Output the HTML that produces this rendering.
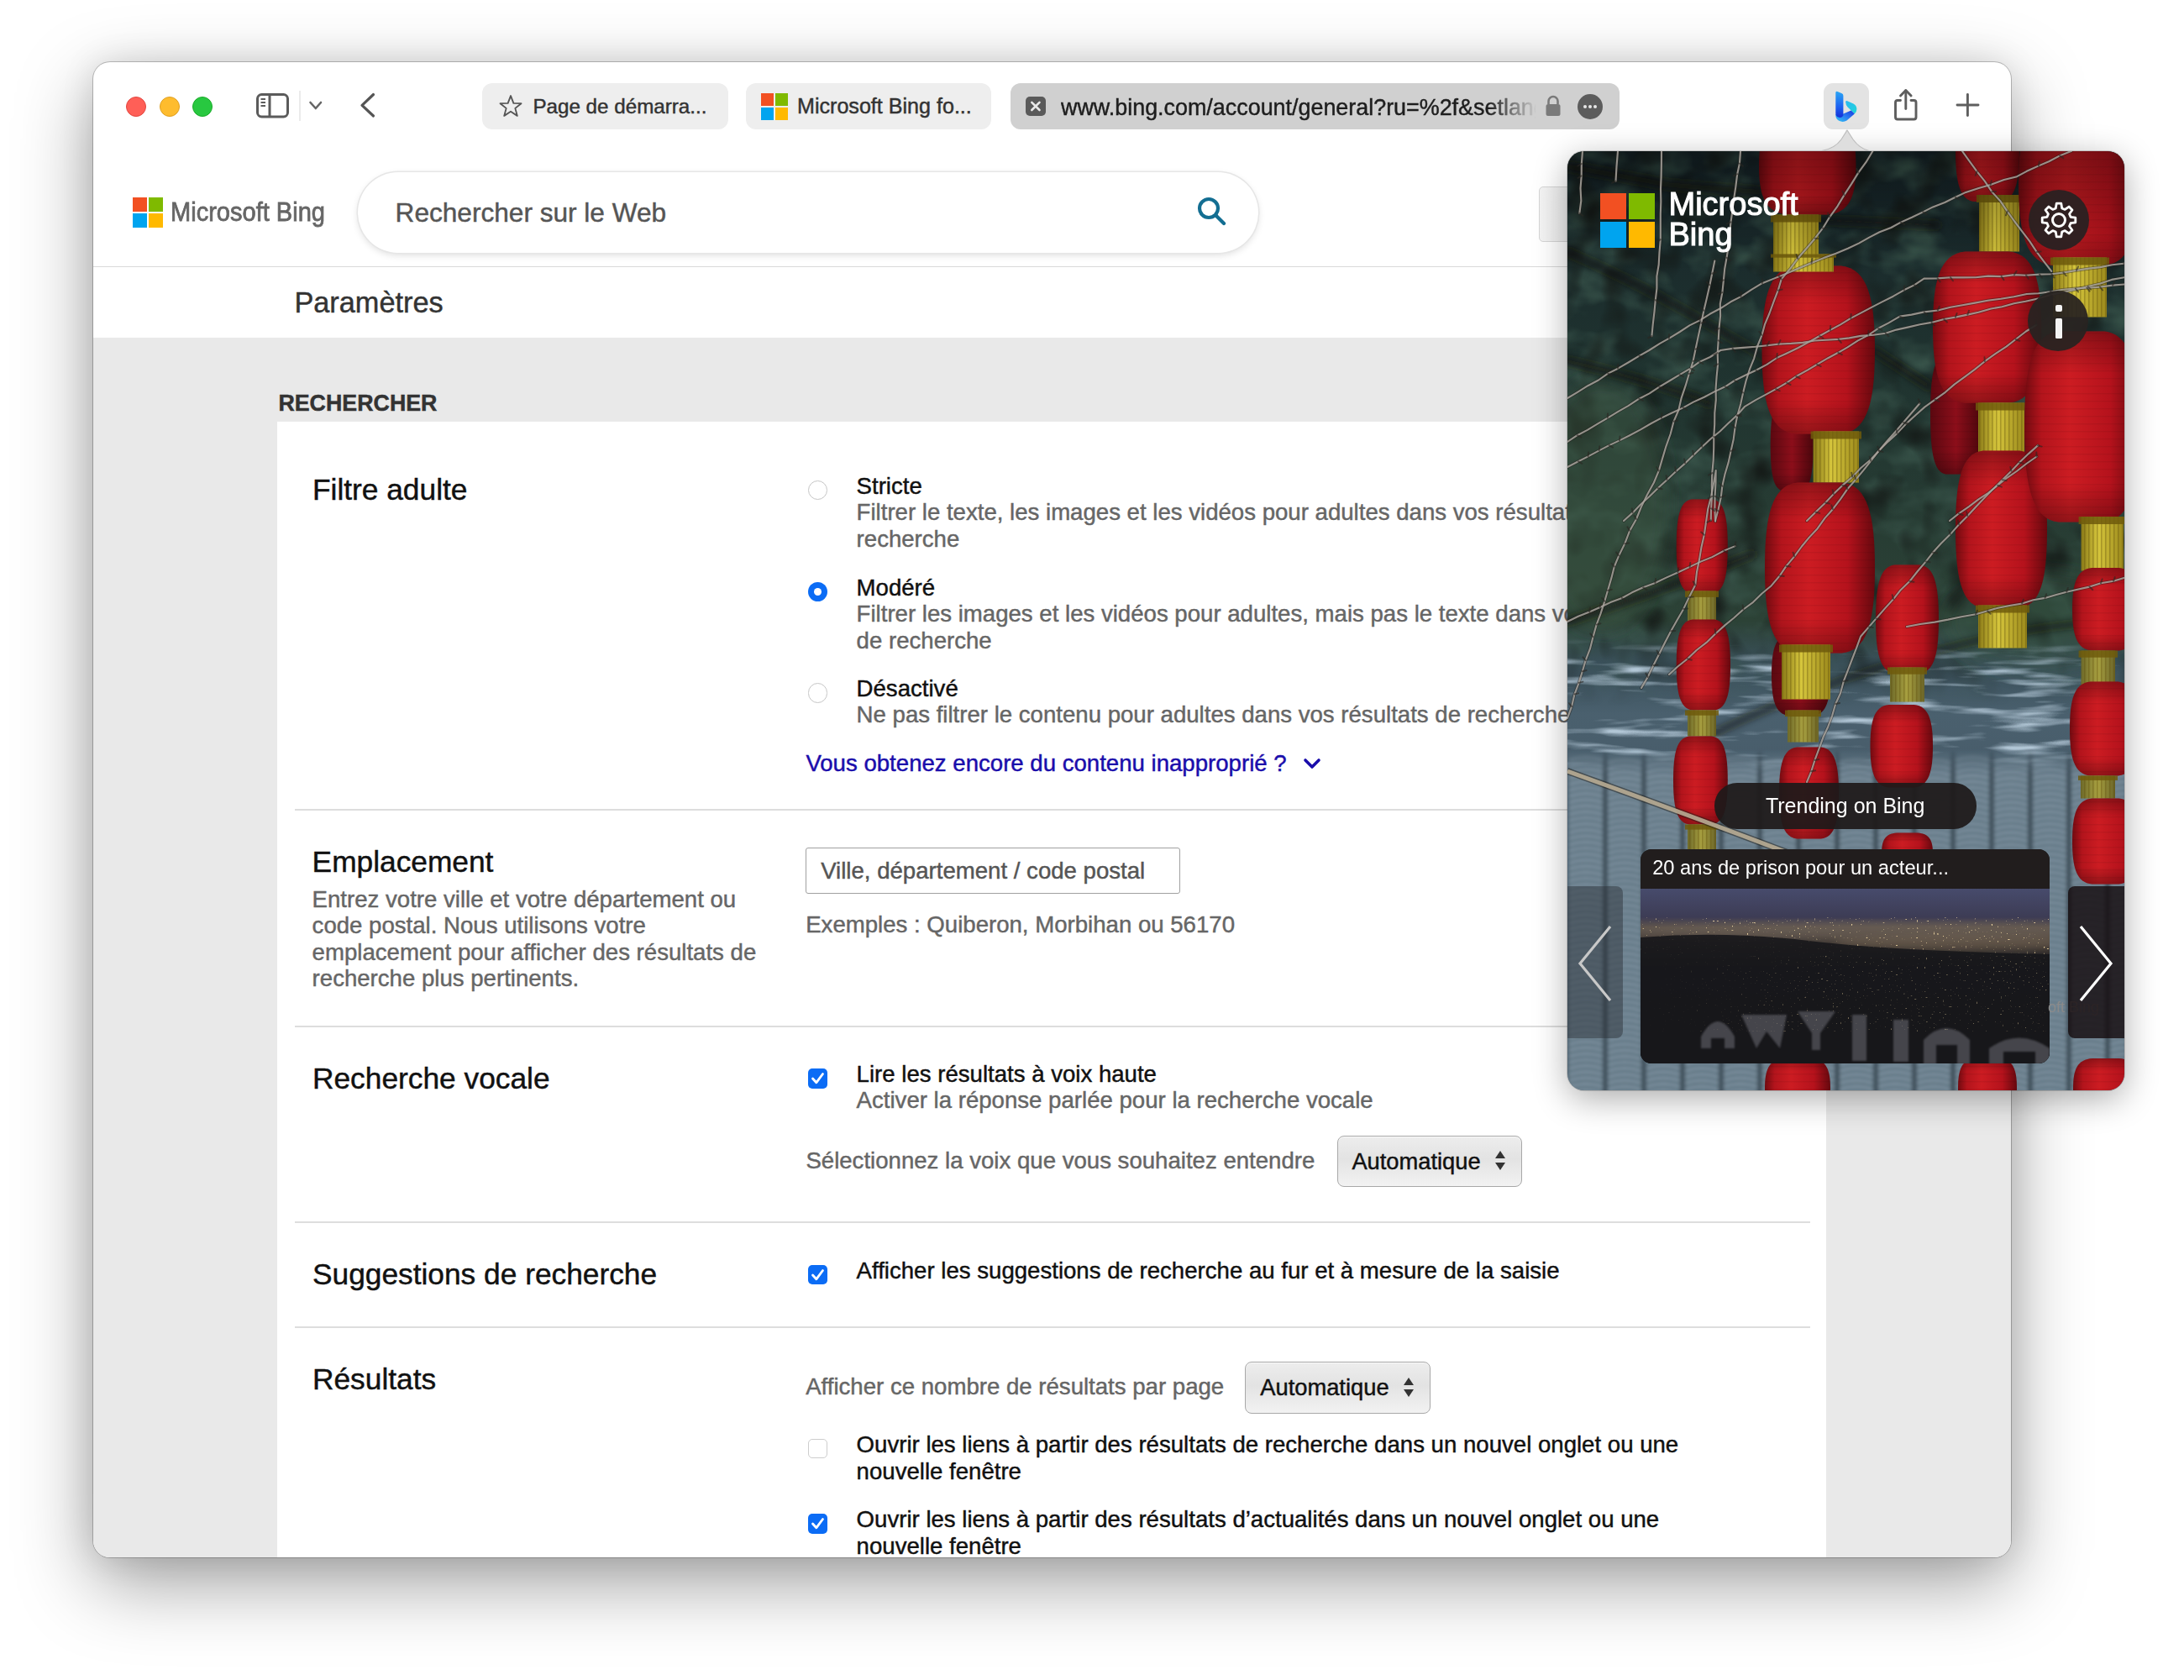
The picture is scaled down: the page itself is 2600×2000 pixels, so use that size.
<!DOCTYPE html>
<html><head><meta charset="utf-8">
<style>
*{margin:0;padding:0;box-sizing:border-box}
html,body{width:2600px;height:2000px;overflow:hidden;background:#fff;font-family:"Liberation Sans",sans-serif}
.a{position:absolute}
.t{position:absolute;white-space:nowrap}
#win .t{-webkit-text-stroke:0.45px currentColor}
#win{position:absolute;left:111px;top:74px;width:2283px;height:1780px;border-radius:20px;overflow:hidden;background:#fff;
 box-shadow:0 0 0 1px rgba(0,0,0,.22),0 30px 90px rgba(0,0,0,.38),0 0 40px rgba(0,0,0,.10)}
.dot{position:absolute;width:24px;height:24px;border-radius:50%;top:40.5px}

</style></head><body>
<div id="win">
<div class="dot" style="left:39px;background:#ff5f57;border:1px solid #e2463f"></div>
<div class="dot" style="left:79px;background:#febc2e;border:1px solid #dfa023"></div>
<div class="dot" style="left:118px;background:#28c840;border:1px solid #1aab29"></div>
<svg class="a" style="left:0;top:0" width="2283" height="110" viewBox="0 0 2283 110">
 <!-- sidebar icon -->
 <rect x="195.5" y="38.5" width="36" height="26.5" rx="5" fill="none" stroke="#5b5b5b" stroke-width="3"/>
 <line x1="210" y1="38.5" x2="210" y2="65" stroke="#5b5b5b" stroke-width="3"/>
 <line x1="199.5" y1="44" x2="205" y2="44" stroke="#5b5b5b" stroke-width="2"/>
 <line x1="199.5" y1="48" x2="205" y2="48" stroke="#5b5b5b" stroke-width="2"/>
 <line x1="199.5" y1="52" x2="205" y2="52" stroke="#5b5b5b" stroke-width="2"/>
 <line x1="246" y1="34" x2="246" y2="70" stroke="#e4e4e4" stroke-width="1.5"/>
 <polyline points="258.5,48 264.8,55 271,48" fill="none" stroke="#666" stroke-width="2.6" stroke-linecap="round" stroke-linejoin="round"/>
 <polyline points="333.5,38.5 320,51.3 333.5,64" fill="none" stroke="#555" stroke-width="3.2" stroke-linecap="round" stroke-linejoin="round"/>
</svg>
<div class="a" style="left:463px;top:25px;width:292.5px;height:55px;border-radius:12px;background:#eeeeee"></div>
<svg class="a" style="left:482px;top:37.5px" width="30" height="30" viewBox="0 0 32 32">
 <polygon points="16,2.2 19.6,11.6 29.3,11.9 21.7,18 24.3,27.6 16,22.1 7.7,27.6 10.3,18 2.7,11.9 12.4,11.6" fill="none" stroke="#555" stroke-width="2" stroke-linejoin="round"/>
</svg>
<div class="t" style="left:523.4px;top:25px;line-height:55px;font-size:24.2px;color:#333">Page de démarra...</div>
<div class="a" style="left:777px;top:25px;width:292px;height:55px;border-radius:12px;background:#eeeeee"></div>
<div class="a" style="left:794.7px;top:36.8px;width:15px;height:15px;background:#f25022"></div>
<div class="a" style="left:811.7px;top:36.8px;width:15px;height:15px;background:#7fba00"></div>
<div class="a" style="left:794.7px;top:53.8px;width:15px;height:15px;background:#00a4ef"></div>
<div class="a" style="left:811.7px;top:53.8px;width:15px;height:15px;background:#ffb900"></div>
<div class="t" style="left:838px;top:25px;line-height:55px;font-size:25.1px;color:#333">Microsoft Bing fo...</div>
<div class="a" style="left:1092px;top:25px;width:725px;height:55px;border-radius:12px;background:#d0d0d0"></div>
<div class="a" style="left:1110px;top:41px;width:23.5px;height:23px;border-radius:5px;background:#5a5a5a"></div>
<svg class="a" style="left:1110px;top:41px" width="24" height="23" viewBox="0 0 24 23">
 <line x1="7.3" y1="6.8" x2="16.5" y2="16" stroke="#e8e8e8" stroke-width="2.6" stroke-linecap="round"/>
 <line x1="16.5" y1="6.8" x2="7.3" y2="16" stroke="#e8e8e8" stroke-width="2.6" stroke-linecap="round"/>
</svg>
<div class="t" style="left:1152px;top:26.8px;width:565px;overflow:hidden;line-height:55px;font-size:26.9px;color:#1e1e1e;-webkit-mask-image:linear-gradient(90deg,#000 90%,rgba(0,0,0,.04) 100%)">www.bing.com/account/general?ru=%2f&amp;setlang=fr</div>
<svg class="a" style="left:1727px;top:38px" width="22" height="28" viewBox="0 0 22 28">
 <path d="M5.5 12 V8.5 a5.5 5.5 0 0 1 11 0 V12" fill="none" stroke="#7a7a7a" stroke-width="2.6"/>
 <rect x="2.5" y="12" width="17" height="14" rx="2.5" fill="#7a7a7a"/>
</svg>
<div class="a" style="left:1767px;top:37.5px;width:30px;height:30px;border-radius:50%;background:#5c5c5c"></div>
<svg class="a" style="left:1767px;top:37.5px" width="30" height="30" viewBox="0 0 30 30">
 <circle cx="9" cy="15" r="2" fill="#e6e6e6"/><circle cx="15" cy="15" r="2" fill="#e6e6e6"/><circle cx="21" cy="15" r="2" fill="#e6e6e6"/>
</svg>
<div class="a" style="left:2060px;top:24.7px;width:54px;height:55px;border-radius:11px;background:#e3e3e3"></div>
<svg class="a" style="left:2070px;top:32px" width="34" height="42" viewBox="0 0 34 42">
 <defs>
  <linearGradient id="bg1" x1="0" y1="0" x2="0" y2="1"><stop offset="0" stop-color="#2ba6f4"/><stop offset="0.6" stop-color="#1c5ff0"/><stop offset="1" stop-color="#1430d6"/></linearGradient>
  <linearGradient id="bg2" x1="0" y1="0" x2="1" y2="1"><stop offset="0" stop-color="#2cb8f2"/><stop offset="1" stop-color="#1fd6d8"/></linearGradient>
  <linearGradient id="bg3" x1="0" y1="1" x2="1" y2="0"><stop offset="0" stop-color="#34c6f4"/><stop offset="0.5" stop-color="#2a7cf0"/><stop offset="1" stop-color="#1636e0"/></linearGradient>
 </defs>
 <path d="M16.1 15.2 Q16.5 13.6 18.2 14.3 L25.5 17.6 Q29.5 19.8 29.4 24 Q29.3 27.5 26.8 29.6 L22.7 25.4 L18.6 21.6 Q16.2 18.6 16.1 15.2 Z" fill="url(#bg2)"/>
 <path d="M4.3 30 L13.4 29.6 L22.7 25.4 L26.8 29.6 L17.5 37.6 Q13 40.2 8.2 37.8 Q4.3 35.5 4.3 31.6 Z" fill="url(#bg3)"/>
 <path d="M4.3 4.5 Q4.3 2.2 6.5 3 L11.8 5.3 Q13.4 6 13.4 8 L13.4 31.5 Q12 34.5 8.5 33.8 Q4.3 33 4.3 29 Z" fill="url(#bg1)"/>
</svg>
<svg class="a" style="left:2140px;top:28px" width="40" height="44" viewBox="0 0 40 44">
 <path d="M11.5 17.5 H8 Q5.5 17.5 5.5 20 V37.5 Q5.5 40 8 40 H27.5 Q30 40 30 37.5 V20 Q30 17.5 27.5 17.5 H24" fill="none" stroke="#5e5e5e" stroke-width="2.9" stroke-linecap="round" stroke-linejoin="round"/>
 <line x1="17.8" y1="6" x2="17.8" y2="27.5" stroke="#5e5e5e" stroke-width="2.9" stroke-linecap="round"/>
 <polyline points="11.5,12 17.8,5.5 24.1,12" fill="none" stroke="#5e5e5e" stroke-width="2.9" stroke-linecap="round" stroke-linejoin="round"/>
</svg>
<svg class="a" style="left:2215px;top:35px" width="32" height="32" viewBox="0 0 32 32">
 <line x1="16.4" y1="3.5" x2="16.4" y2="28.5" stroke="#5e5e5e" stroke-width="2.9" stroke-linecap="round"/>
 <line x1="4" y1="16" x2="29" y2="16" stroke="#5e5e5e" stroke-width="2.9" stroke-linecap="round"/>
</svg>
<div class="a" style="left:47.0px;top:161.0px;width:17.0px;height:17.0px;background:#f25022"></div>
<div class="a" style="left:66.0px;top:161.0px;width:17.0px;height:17.0px;background:#7fba00"></div>
<div class="a" style="left:47.0px;top:180.0px;width:17.0px;height:17.0px;background:#00a4ef"></div>
<div class="a" style="left:66.0px;top:180.0px;width:17.0px;height:17.0px;background:#ffb900"></div>
<div class="t" style="left:92.0px;top:160.4px;font-size:31.5px;line-height:37px;color:#666;transform:scaleX(0.922);transform-origin:0 0;-webkit-text-stroke:0.8px #666">Microsoft Bing</div>
<div class="a" style="left:314.7px;top:130.5px;width:1072.1px;height:96.5px;border-radius:48px;background:#fff;box-shadow:0 0 0 1.5px #e6e6e6,0 3px 8px rgba(0,0,0,.13)"></div>
<div class="t" style="left:359.6px;top:161.3px;font-size:31.6px;line-height:37px;color:#555;">Rechercher sur le Web</div>
<svg class="a" style="left:1306px;top:152px" width="60" height="60" viewBox="0 0 60 60"><circle cx="22" cy="22" r="11" fill="none" stroke="#136e92" stroke-width="4.2"/><line x1="30.5" y1="30.5" x2="40" y2="40" stroke="#136e92" stroke-width="4.2" stroke-linecap="round"/></svg>
<div class="a" style="left:1721.4px;top:148.0px;width:67.6px;height:66.3px;background:linear-gradient(90deg,#f4f4f4,#e9e9e9);border:1.5px solid #d6d6d6;border-radius:5px"></div>
<div class="a" style="left:0.0px;top:242.6px;width:2283.0px;height:1.4px;background:#d9d9d9"></div>
<div class="t" style="left:239.4px;top:265.5px;font-size:34.3px;line-height:40px;color:#333;">Paramètres</div>
<div class="a" style="left:0.0px;top:327.5px;width:2283.0px;height:1452.5px;background:#e9e9e9"></div>
<div class="t" style="left:220.4px;top:390.7px;font-size:26.8px;line-height:31px;color:#333;font-weight:bold;">RECHERCHER</div>
<div class="a" style="left:219.0px;top:428.0px;width:1844.0px;height:1352.0px;background:#fff"></div>
<div class="t" style="left:261.0px;top:488.1px;font-size:35.3px;line-height:41px;color:#111;">Filtre adulte</div>
<div class="a" style="left:850.9px;top:498.0px;width:23.4px;height:23.4px;border-radius:50%;border:1.5px solid #c6c6c6;background:#fff"></div>
<div class="t" style="left:908.6px;top:489.1px;font-size:27.6px;line-height:32px;color:#111;">Stricte</div>
<div class="t" style="left:908.6px;top:520.1px;font-size:27.6px;line-height:32px;color:#666;">Filtrer le texte, les images et les vidéos pour adultes dans vos résultats de</div>
<div class="t" style="left:908.6px;top:552.4px;font-size:27.6px;line-height:32px;color:#666;">recherche</div>
<div class="a" style="left:850.9px;top:618.7px;width:23.4px;height:23.4px;border-radius:50%;background:#0b6cf5"><div class="a" style="left:7.2px;top:7.2px;width:9.3px;height:9.3px;border-radius:50%;background:#fff"></div></div>
<div class="t" style="left:908.6px;top:609.6px;font-size:27.6px;line-height:32px;color:#111;">Modéré</div>
<div class="t" style="left:908.6px;top:640.8px;font-size:27.6px;line-height:32px;color:#666;">Filtrer les images et les vidéos pour adultes, mais pas le texte dans vos résultats</div>
<div class="t" style="left:908.6px;top:673.0px;font-size:27.6px;line-height:32px;color:#666;">de recherche</div>
<div class="a" style="left:850.9px;top:739.3px;width:23.4px;height:23.4px;border-radius:50%;border:1.5px solid #c6c6c6;background:#fff"></div>
<div class="t" style="left:908.6px;top:730.2px;font-size:27.6px;line-height:32px;color:#111;">Désactivé</div>
<div class="t" style="left:908.6px;top:761.4px;font-size:27.6px;line-height:32px;color:#666;">Ne pas filtrer le contenu pour adultes dans vos résultats de recherche</div>
<div class="t" style="left:848.4px;top:819.2px;font-size:27.6px;line-height:32px;color:#1a0dab;">Vous obtenez encore du contenu inapproprié ?</div>
<svg class="a" style="left:1439.0px;top:826.0px" width="24" height="18" viewBox="0 0 24 18"><polyline points="4,5 12,13 20,5" fill="none" stroke="#1a0dab" stroke-width="3.6" stroke-linecap="round" stroke-linejoin="round"/></svg>
<div class="a" style="left:239.5px;top:889.0px;width:1804.5px;height:2.0px;background:#dddddd"></div>
<div class="t" style="left:260.6px;top:931.4px;font-size:35.3px;line-height:41px;color:#111;">Emplacement</div>
<div class="t" style="left:260.6px;top:980.5px;font-size:27.6px;line-height:32px;color:#666;">Entrez votre ville et votre département ou</div>
<div class="t" style="left:260.6px;top:1012.2px;font-size:27.6px;line-height:32px;color:#666;">code postal. Nous utilisons votre</div>
<div class="t" style="left:260.6px;top:1044.0px;font-size:27.6px;line-height:32px;color:#666;">emplacement pour afficher des résultats de</div>
<div class="t" style="left:260.6px;top:1075.0px;font-size:27.6px;line-height:32px;color:#666;">recherche plus pertinents.</div>
<div class="a" style="left:848.2px;top:935.2px;width:446.2px;height:54.4px;border:1.5px solid #a0a0a0;border-radius:3px;background:#fff"></div>
<div class="t" style="left:866.2px;top:947.2px;font-size:27.6px;line-height:32px;color:#555;">Ville, département / code postal</div>
<div class="t" style="left:848.2px;top:1010.9px;font-size:27.6px;line-height:32px;color:#666;">Exemples : Quiberon, Morbihan ou 56170</div>
<div class="a" style="left:239.5px;top:1146.5px;width:1804.5px;height:2.0px;background:#dddddd"></div>
<div class="t" style="left:261.0px;top:1188.5px;font-size:35.3px;line-height:41px;color:#111;">Recherche vocale</div>
<div class="a" style="left:850.9px;top:1198.3px;width:23.3px;height:23.5px;border-radius:5px;background:#0b6cf5"><svg class="a" style="left:0;top:0" width="23" height="23" viewBox="0 0 23 23"><polyline points="5.5,12 9.8,16.8 17.5,6.5" fill="none" stroke="#fff" stroke-width="2.8" stroke-linecap="round" stroke-linejoin="round"/></svg></div>
<div class="t" style="left:908.6px;top:1189.0px;font-size:27.6px;line-height:32px;color:#111;">Lire les résultats à voix haute</div>
<div class="t" style="left:908.6px;top:1220.1px;font-size:27.6px;line-height:32px;color:#666;">Activer la réponse parlée pour la recherche vocale</div>
<div class="t" style="left:848.4px;top:1292.4px;font-size:27.6px;line-height:32px;color:#666;">Sélectionnez la voix que vous souhaitez entendre</div>
<div class="a" style="left:1481.2px;top:1278.0px;width:219.5px;height:60.7px;border-radius:8px;border:1.5px solid #a8a8a8;background:linear-gradient(#ededed,#e3e3e3 45%,#f2f2f2);box-shadow:inset 0 1px 0 #fafafa"></div>
<div class="t" style="left:1498.4px;top:1292.5px;font-size:27.3px;line-height:32px;color:#111;">Automatique</div>
<svg class="a" style="left:1667.7px;top:1295.3px" width="14" height="26" viewBox="0 0 14 26"><polygon points="7,1 13,10 1,10" fill="#333"/><polygon points="1,15 13,15 7,24" fill="#333"/></svg>
<div class="a" style="left:239.5px;top:1379.5px;width:1804.5px;height:2.0px;background:#dddddd"></div>
<div class="t" style="left:261.0px;top:1422.3px;font-size:35.3px;line-height:41px;color:#111;">Suggestions de recherche</div>
<div class="a" style="left:850.9px;top:1431.7px;width:23.3px;height:23.5px;border-radius:5px;background:#0b6cf5"><svg class="a" style="left:0;top:0" width="23" height="23" viewBox="0 0 23 23"><polyline points="5.5,12 9.8,16.8 17.5,6.5" fill="none" stroke="#fff" stroke-width="2.8" stroke-linecap="round" stroke-linejoin="round"/></svg></div>
<div class="t" style="left:908.6px;top:1422.5px;font-size:27.6px;line-height:32px;color:#111;">Afficher les suggestions de recherche au fur et à mesure de la saisie</div>
<div class="a" style="left:239.5px;top:1504.9px;width:1804.5px;height:2.0px;background:#dddddd"></div>
<div class="t" style="left:261.0px;top:1547.3px;font-size:35.3px;line-height:41px;color:#111;">Résultats</div>
<div class="t" style="left:848.2px;top:1561.2px;font-size:27.6px;line-height:32px;color:#666;">Afficher ce nombre de résultats par page</div>
<div class="a" style="left:1371.3px;top:1546.5px;width:221.0px;height:62.1px;border-radius:8px;border:1.5px solid #a8a8a8;background:linear-gradient(#ededed,#e3e3e3 45%,#f2f2f2);box-shadow:inset 0 1px 0 #fafafa"></div>
<div class="t" style="left:1389.3px;top:1562.3px;font-size:27.3px;line-height:32px;color:#111;">Automatique</div>
<svg class="a" style="left:1559.3px;top:1564.5px" width="14" height="26" viewBox="0 0 14 26"><polygon points="7,1 13,10 1,10" fill="#333"/><polygon points="1,15 13,15 7,24" fill="#333"/></svg>
<div class="a" style="left:850.9px;top:1638.9px;width:23.3px;height:23.5px;border-radius:5px;border:1.5px solid #cdcdcd;background:#fff"></div>
<div class="t" style="left:908.6px;top:1629.7px;font-size:27.6px;line-height:32px;color:#111;">Ouvrir les liens à partir des résultats de recherche dans un nouvel onglet ou une</div>
<div class="t" style="left:908.6px;top:1661.6px;font-size:27.6px;line-height:32px;color:#111;">nouvelle fenêtre</div>
<div class="a" style="left:850.9px;top:1728.1px;width:23.3px;height:23.5px;border-radius:5px;background:#0b6cf5"><svg class="a" style="left:0;top:0" width="23" height="23" viewBox="0 0 23 23"><polyline points="5.5,12 9.8,16.8 17.5,6.5" fill="none" stroke="#fff" stroke-width="2.8" stroke-linecap="round" stroke-linejoin="round"/></svg></div>
<div class="t" style="left:908.6px;top:1718.9px;font-size:27.6px;line-height:32px;color:#111;">Ouvrir les liens à partir des résultats d’actualités dans un nouvel onglet ou une</div>
<div class="t" style="left:908.6px;top:1750.5px;font-size:27.6px;line-height:32px;color:#111;">nouvelle fenêtre</div>
</div>
<div class="a" id="pop" style="left:1866px;top:179.5px;width:663px;height:1118px;border-radius:20px;overflow:hidden;box-shadow:0 10px 40px rgba(0,0,0,.33),0 0 0 1px rgba(0,0,0,.15)">
<svg class="a" style="left:0;top:0" width="663" height="1118" viewBox="0 0 663 1118"><defs>
<linearGradient id="bgv" x1="0" y1="0" x2="0" y2="1">
 <stop offset="0" stop-color="#17252a"/>
 <stop offset="0.25" stop-color="#203430"/>
 <stop offset="0.50" stop-color="#2c4236"/>
 <stop offset="0.545" stop-color="#3a505a"/>
 <stop offset="0.60" stop-color="#4a606e"/>
 <stop offset="0.66" stop-color="#485c6a"/>
 <stop offset="0.70" stop-color="#44566a"/>
 <stop offset="1" stop-color="#4c5e6a"/>
</linearGradient>
<linearGradient id="lg" x1="0" y1="0" x2="1" y2="0">
 <stop offset="0" stop-color="#720a10"/>
 <stop offset="0.15" stop-color="#b3141c"/>
 <stop offset="0.40" stop-color="#cc1c22"/>
 <stop offset="0.75" stop-color="#b5121c"/>
 <stop offset="1" stop-color="#66080e"/>
</linearGradient>
<linearGradient id="lgd" x1="0" y1="0" x2="1" y2="0">
 <stop offset="0" stop-color="#5a0810"/>
 <stop offset="0.5" stop-color="#8c0e1a"/>
 <stop offset="1" stop-color="#4a060c"/>
</linearGradient>
<linearGradient id="lshade" x1="0" y1="0" x2="0" y2="1">
 <stop offset="0" stop-color="#000" stop-opacity=".28"/>
 <stop offset="0.22" stop-color="#000" stop-opacity="0"/>
 <stop offset="0.8" stop-color="#000" stop-opacity="0"/>
 <stop offset="1" stop-color="#000" stop-opacity=".28"/>
</linearGradient>
<pattern id="rib" width="8" height="9" patternUnits="userSpaceOnUse"><rect y="0" width="8" height="1.4" fill="#000" opacity=".06"/></pattern>
<pattern id="tass" width="5" height="10" patternUnits="userSpaceOnUse"><rect x="0" width="1.6" height="10" fill="#5a4a08" opacity=".35"/></pattern>
<linearGradient id="gd" x1="0" y1="0" x2="1" y2="0">
 <stop offset="0" stop-color="#8a7a18"/>
 <stop offset="0.4" stop-color="#d6c63c"/>
 <stop offset="1" stop-color="#9c8a1c"/>
</linearGradient>
<linearGradient id="gdd" x1="0" y1="0" x2="1" y2="0">
 <stop offset="0" stop-color="#6e6a2a"/>
 <stop offset="0.5" stop-color="#a8a040"/>
 <stop offset="1" stop-color="#6a6428"/>
</linearGradient>
<linearGradient id="sky" x1="0" y1="0" x2="0" y2="1">
 <stop offset="0" stop-color="#474b6c"/>
 <stop offset="0.16" stop-color="#3d3c55"/>
 <stop offset="0.22" stop-color="#5a5048"/>
 <stop offset="0.33" stop-color="#3a3430"/>
 <stop offset="0.45" stop-color="#1b1b20"/>
 <stop offset="1" stop-color="#141417"/>
</linearGradient>
<linearGradient id="wfade" x1="0" y1="0" x2="0" y2="1">
 <stop offset="0" stop-color="#fff" stop-opacity="0"/>
 <stop offset="0.2" stop-color="#fff" stop-opacity="1"/>
 <stop offset="0.8" stop-color="#fff" stop-opacity="1"/>
 <stop offset="1" stop-color="#fff" stop-opacity="0"/>
</linearGradient>
<linearGradient id="ffade" x1="0" y1="0" x2="0" y2="1">
 <stop offset="0" stop-color="#fff" stop-opacity="1"/>
 <stop offset="0.85" stop-color="#fff" stop-opacity="1"/>
 <stop offset="1" stop-color="#fff" stop-opacity="0"/>
</linearGradient>
<linearGradient id="topshade" x1="0" y1="0" x2="0" y2="1">
 <stop offset="0" stop-color="#000" stop-opacity=".35"/>
 <stop offset="1" stop-color="#000" stop-opacity="0"/>
</linearGradient>
<linearGradient id="rfade" x1="0" y1="0" x2="0" y2="1">
 <stop offset="0" stop-color="#fff" stop-opacity="0"/>
 <stop offset="0.1" stop-color="#fff" stop-opacity="1"/>
 <stop offset="1" stop-color="#fff" stop-opacity="1"/>
</linearGradient>
<mask id="rmask"><rect x="0" y="700" width="663" height="430" fill="url(#rfade)"/></mask>
<linearGradient id="spfade" x1="0" y1="0" x2="1" y2="0">
 <stop offset="0" stop-color="#fff" stop-opacity="0"/>
 <stop offset="0.45" stop-color="#fff" stop-opacity="1"/>
 <stop offset="1" stop-color="#fff" stop-opacity="1"/>
</linearGradient>
<mask id="spmask" maskUnits="userSpaceOnUse"><rect x="0" y="0" width="487" height="209" fill="url(#spfade)"/></mask>
<mask id="fmask"><rect x="0" y="0" width="663" height="660" fill="url(#ffade)"/></mask>
<mask id="wmask"><rect x="0" y="580" width="663" height="170" fill="url(#wfade)"/></mask>
<filter id="foliage" x="0" y="0" width="100%" height="100%" color-interpolation-filters="sRGB">
 <feTurbulence type="fractalNoise" baseFrequency="0.018 0.028" numOctaves="3" seed="7"/>
 <feColorMatrix type="matrix" values="0 0 0 0 0.23  0 0 0 0 0.34  0 0 0 0 0.30  2.2 0 0 0 -0.95"/>
</filter>
<filter id="foliage2" x="0" y="0" width="100%" height="100%" color-interpolation-filters="sRGB">
 <feTurbulence type="fractalNoise" baseFrequency="0.025 0.02" numOctaves="2" seed="3"/>
 <feColorMatrix type="matrix" values="0 0 0 0 0.08  0 0 0 0 0.10  0 0 0 0 0.09  2.6 0 0 0 -1.25"/>
</filter>
<filter id="water" x="0" y="0" width="100%" height="100%" color-interpolation-filters="sRGB">
 <feTurbulence type="fractalNoise" baseFrequency="0.010 0.08" numOctaves="3" seed="11"/>
 <feColorMatrix type="matrix" values="0 0 0 0 0.70  0 0 0 0 0.78  0 0 0 0 0.84  3.2 0 0 0 -1.65"/>
</filter>
<filter id="specks" x="0" y="0" width="100%" height="100%" color-interpolation-filters="sRGB">
 <feTurbulence type="fractalNoise" baseFrequency="0.45" numOctaves="1" seed="5"/>
 <feColorMatrix type="matrix" values="0 0 0 0 0.98  0 0 0 0 0.88  0 0 0 0 0.66  12 0 0 0 -8.3"/>
 <feGaussianBlur stdDeviation="0.5"/>
</filter>
<filter id="bl4"><feGaussianBlur stdDeviation="4"/></filter>
<filter id="bl10"><feGaussianBlur stdDeviation="10"/></filter>
<filter id="bl2"><feGaussianBlur stdDeviation="2"/></filter>
<filter id="bl1"><feGaussianBlur stdDeviation="0.8"/></filter>
</defs><rect x="0" y="0" width="663" height="1118" fill="url(#bgv)"/><g mask="url(#fmask)"><rect x="0" y="0" width="663" height="660" filter="url(#foliage)"/><rect x="0" y="0" width="663" height="660" filter="url(#foliage2)"/></g><g filter="url(#bl10)"><ellipse cx="40" cy="420" rx="80" ry="150" fill="#3f5c48" opacity=".45"/><ellipse cx="560" cy="560" rx="110" ry="60" fill="#3a5444" opacity=".4"/></g><g mask="url(#wmask)"><rect x="0" y="580" width="663" height="170" filter="url(#water)"/></g><g filter="url(#bl4)" stroke="#14120e" stroke-linecap="round" fill="none" opacity=".7"><path d="M0 18 L120 40 L245 50" stroke-width="12"/><path d="M300 82 L440 88" stroke-width="10"/><path d="M0 250 Q90 270 170 300" stroke-width="11"/><path d="M365 237 Q400 260 430 280" stroke-width="10"/><path d="M0 120 Q70 150 140 190 T260 260" stroke-width="9"/><path d="M0 560 Q120 520 220 480" stroke-width="10"/><path d="M160 700 Q280 640 420 600 T663 560" stroke-width="7"/></g><g mask="url(#rmask)"><g filter="url(#bl2)"><rect x="0" y="715" width="663" height="410" fill="#5a6f7e"/><path d="M2 725.0 Q22 718.0 42 725.0" stroke="#b9cad5" stroke-width="3.2" fill="none" opacity=".45"/><path d="M2 732.2 Q22 725.2 42 732.2" stroke="#b9cad5" stroke-width="3.2" fill="none" opacity=".45"/><path d="M2 739.4 Q22 732.4 42 739.4" stroke="#b9cad5" stroke-width="3.2" fill="none" opacity=".45"/><path d="M2 746.6 Q22 739.6 42 746.6" stroke="#b9cad5" stroke-width="3.2" fill="none" opacity=".45"/><path d="M2 753.8 Q22 746.8 42 753.8" stroke="#b9cad5" stroke-width="3.2" fill="none" opacity=".45"/><path d="M2 761.0 Q22 754.0 42 761.0" stroke="#b9cad5" stroke-width="3.2" fill="none" opacity=".45"/><path d="M2 768.2 Q22 761.2 42 768.2" stroke="#b9cad5" stroke-width="3.2" fill="none" opacity=".45"/><path d="M2 775.4 Q22 768.4 42 775.4" stroke="#b9cad5" stroke-width="3.2" fill="none" opacity=".45"/><path d="M2 782.6 Q22 775.6 42 782.6" stroke="#b9cad5" stroke-width="3.2" fill="none" opacity=".45"/><path d="M2 789.8 Q22 782.8 42 789.8" stroke="#b9cad5" stroke-width="3.2" fill="none" opacity=".45"/><path d="M2 797.0 Q22 790.0 42 797.0" stroke="#b9cad5" stroke-width="3.2" fill="none" opacity=".45"/><path d="M2 804.2 Q22 797.2 42 804.2" stroke="#b9cad5" stroke-width="3.2" fill="none" opacity=".45"/><path d="M2 811.4 Q22 804.4 42 811.4" stroke="#b9cad5" stroke-width="3.2" fill="none" opacity=".45"/><path d="M2 818.6 Q22 811.6 42 818.6" stroke="#b9cad5" stroke-width="3.2" fill="none" opacity=".45"/><path d="M2 825.8 Q22 818.8 42 825.8" stroke="#b9cad5" stroke-width="3.2" fill="none" opacity=".45"/><path d="M2 833.0 Q22 826.0 42 833.0" stroke="#b9cad5" stroke-width="3.2" fill="none" opacity=".45"/><path d="M2 840.2 Q22 833.2 42 840.2" stroke="#b9cad5" stroke-width="3.2" fill="none" opacity=".45"/><path d="M2 847.4 Q22 840.4 42 847.4" stroke="#b9cad5" stroke-width="3.2" fill="none" opacity=".45"/><path d="M2 854.6 Q22 847.6 42 854.6" stroke="#b9cad5" stroke-width="3.2" fill="none" opacity=".45"/><path d="M2 861.8 Q22 854.8 42 861.8" stroke="#b9cad5" stroke-width="3.2" fill="none" opacity=".45"/><path d="M2 869.0 Q22 862.0 42 869.0" stroke="#b9cad5" stroke-width="3.2" fill="none" opacity=".45"/><path d="M2 876.2 Q22 869.2 42 876.2" stroke="#b9cad5" stroke-width="3.2" fill="none" opacity=".45"/><path d="M2 883.4 Q22 876.4 42 883.4" stroke="#b9cad5" stroke-width="3.2" fill="none" opacity=".45"/><path d="M2 890.6 Q22 883.6 42 890.6" stroke="#b9cad5" stroke-width="3.2" fill="none" opacity=".45"/><path d="M2 897.8 Q22 890.8 42 897.8" stroke="#b9cad5" stroke-width="3.2" fill="none" opacity=".45"/><path d="M2 905.0 Q22 898.0 42 905.0" stroke="#b9cad5" stroke-width="3.2" fill="none" opacity=".45"/><path d="M2 912.2 Q22 905.2 42 912.2" stroke="#b9cad5" stroke-width="3.2" fill="none" opacity=".45"/><path d="M2 919.4 Q22 912.4 42 919.4" stroke="#b9cad5" stroke-width="3.2" fill="none" opacity=".45"/><path d="M2 926.6 Q22 919.6 42 926.6" stroke="#b9cad5" stroke-width="3.2" fill="none" opacity=".45"/><path d="M2 933.8 Q22 926.8 42 933.8" stroke="#b9cad5" stroke-width="3.2" fill="none" opacity=".45"/><path d="M2 941.0 Q22 934.0 42 941.0" stroke="#b9cad5" stroke-width="3.2" fill="none" opacity=".45"/><path d="M2 948.2 Q22 941.2 42 948.2" stroke="#b9cad5" stroke-width="3.2" fill="none" opacity=".45"/><path d="M2 955.4 Q22 948.4 42 955.4" stroke="#b9cad5" stroke-width="3.2" fill="none" opacity=".45"/><path d="M2 962.6 Q22 955.6 42 962.6" stroke="#b9cad5" stroke-width="3.2" fill="none" opacity=".45"/><path d="M2 969.8 Q22 962.8 42 969.8" stroke="#b9cad5" stroke-width="3.2" fill="none" opacity=".45"/><path d="M2 977.0 Q22 970.0 42 977.0" stroke="#b9cad5" stroke-width="3.2" fill="none" opacity=".45"/><path d="M2 984.2 Q22 977.2 42 984.2" stroke="#b9cad5" stroke-width="3.2" fill="none" opacity=".45"/><path d="M2 991.4000000000001 Q22 984.4000000000001 42 991.4000000000001" stroke="#b9cad5" stroke-width="3.2" fill="none" opacity=".45"/><path d="M2 998.6 Q22 991.6 42 998.6" stroke="#b9cad5" stroke-width="3.2" fill="none" opacity=".45"/><path d="M2 1005.8 Q22 998.8 42 1005.8" stroke="#b9cad5" stroke-width="3.2" fill="none" opacity=".45"/><path d="M2 1013.0 Q22 1006.0 42 1013.0" stroke="#b9cad5" stroke-width="3.2" fill="none" opacity=".45"/><path d="M2 1020.2 Q22 1013.2 42 1020.2" stroke="#b9cad5" stroke-width="3.2" fill="none" opacity=".45"/><path d="M2 1027.4 Q22 1020.4000000000001 42 1027.4" stroke="#b9cad5" stroke-width="3.2" fill="none" opacity=".45"/><path d="M2 1034.6 Q22 1027.6 42 1034.6" stroke="#b9cad5" stroke-width="3.2" fill="none" opacity=".45"/><path d="M2 1041.8 Q22 1034.8 42 1041.8" stroke="#b9cad5" stroke-width="3.2" fill="none" opacity=".45"/><path d="M2 1049.0 Q22 1042.0 42 1049.0" stroke="#b9cad5" stroke-width="3.2" fill="none" opacity=".45"/><path d="M2 1056.2 Q22 1049.2 42 1056.2" stroke="#b9cad5" stroke-width="3.2" fill="none" opacity=".45"/><path d="M2 1063.4 Q22 1056.4 42 1063.4" stroke="#b9cad5" stroke-width="3.2" fill="none" opacity=".45"/><path d="M2 1070.6 Q22 1063.6 42 1070.6" stroke="#b9cad5" stroke-width="3.2" fill="none" opacity=".45"/><path d="M2 1077.8 Q22 1070.8 42 1077.8" stroke="#b9cad5" stroke-width="3.2" fill="none" opacity=".45"/><path d="M2 1085.0 Q22 1078.0 42 1085.0" stroke="#b9cad5" stroke-width="3.2" fill="none" opacity=".45"/><path d="M2 1092.2 Q22 1085.2 42 1092.2" stroke="#b9cad5" stroke-width="3.2" fill="none" opacity=".45"/><path d="M2 1099.4 Q22 1092.4 42 1099.4" stroke="#b9cad5" stroke-width="3.2" fill="none" opacity=".45"/><path d="M2 1106.6 Q22 1099.6 42 1106.6" stroke="#b9cad5" stroke-width="3.2" fill="none" opacity=".45"/><path d="M2 1113.8 Q22 1106.8 42 1113.8" stroke="#b9cad5" stroke-width="3.2" fill="none" opacity=".45"/><path d="M2 1121.0 Q22 1114.0 42 1121.0" stroke="#b9cad5" stroke-width="3.2" fill="none" opacity=".45"/><path d="M2 1128.2 Q22 1121.2 42 1128.2" stroke="#b9cad5" stroke-width="3.2" fill="none" opacity=".45"/><path d="M2 1135.4 Q22 1128.4 42 1135.4" stroke="#b9cad5" stroke-width="3.2" fill="none" opacity=".45"/><path d="M2 1142.6 Q22 1135.6 42 1142.6" stroke="#b9cad5" stroke-width="3.2" fill="none" opacity=".45"/><path d="M2 1149.8 Q22 1142.8 42 1149.8" stroke="#b9cad5" stroke-width="3.2" fill="none" opacity=".45"/><rect x="42" y="715" width="6" height="410" fill="#2b3741" opacity=".6"/><path d="M48 728.0 Q68 721.0 88 728.0" stroke="#b9cad5" stroke-width="3.2" fill="none" opacity=".45"/><path d="M48 735.2 Q68 728.2 88 735.2" stroke="#b9cad5" stroke-width="3.2" fill="none" opacity=".45"/><path d="M48 742.4 Q68 735.4 88 742.4" stroke="#b9cad5" stroke-width="3.2" fill="none" opacity=".45"/><path d="M48 749.6 Q68 742.6 88 749.6" stroke="#b9cad5" stroke-width="3.2" fill="none" opacity=".45"/><path d="M48 756.8 Q68 749.8 88 756.8" stroke="#b9cad5" stroke-width="3.2" fill="none" opacity=".45"/><path d="M48 764.0 Q68 757.0 88 764.0" stroke="#b9cad5" stroke-width="3.2" fill="none" opacity=".45"/><path d="M48 771.2 Q68 764.2 88 771.2" stroke="#b9cad5" stroke-width="3.2" fill="none" opacity=".45"/><path d="M48 778.4 Q68 771.4 88 778.4" stroke="#b9cad5" stroke-width="3.2" fill="none" opacity=".45"/><path d="M48 785.6 Q68 778.6 88 785.6" stroke="#b9cad5" stroke-width="3.2" fill="none" opacity=".45"/><path d="M48 792.8 Q68 785.8 88 792.8" stroke="#b9cad5" stroke-width="3.2" fill="none" opacity=".45"/><path d="M48 800.0 Q68 793.0 88 800.0" stroke="#b9cad5" stroke-width="3.2" fill="none" opacity=".45"/><path d="M48 807.2 Q68 800.2 88 807.2" stroke="#b9cad5" stroke-width="3.2" fill="none" opacity=".45"/><path d="M48 814.4 Q68 807.4 88 814.4" stroke="#b9cad5" stroke-width="3.2" fill="none" opacity=".45"/><path d="M48 821.6 Q68 814.6 88 821.6" stroke="#b9cad5" stroke-width="3.2" fill="none" opacity=".45"/><path d="M48 828.8 Q68 821.8 88 828.8" stroke="#b9cad5" stroke-width="3.2" fill="none" opacity=".45"/><path d="M48 836.0 Q68 829.0 88 836.0" stroke="#b9cad5" stroke-width="3.2" fill="none" opacity=".45"/><path d="M48 843.2 Q68 836.2 88 843.2" stroke="#b9cad5" stroke-width="3.2" fill="none" opacity=".45"/><path d="M48 850.4 Q68 843.4 88 850.4" stroke="#b9cad5" stroke-width="3.2" fill="none" opacity=".45"/><path d="M48 857.6 Q68 850.6 88 857.6" stroke="#b9cad5" stroke-width="3.2" fill="none" opacity=".45"/><path d="M48 864.8 Q68 857.8 88 864.8" stroke="#b9cad5" stroke-width="3.2" fill="none" opacity=".45"/><path d="M48 872.0 Q68 865.0 88 872.0" stroke="#b9cad5" stroke-width="3.2" fill="none" opacity=".45"/><path d="M48 879.2 Q68 872.2 88 879.2" stroke="#b9cad5" stroke-width="3.2" fill="none" opacity=".45"/><path d="M48 886.4 Q68 879.4 88 886.4" stroke="#b9cad5" stroke-width="3.2" fill="none" opacity=".45"/><path d="M48 893.6 Q68 886.6 88 893.6" stroke="#b9cad5" stroke-width="3.2" fill="none" opacity=".45"/><path d="M48 900.8 Q68 893.8 88 900.8" stroke="#b9cad5" stroke-width="3.2" fill="none" opacity=".45"/><path d="M48 908.0 Q68 901.0 88 908.0" stroke="#b9cad5" stroke-width="3.2" fill="none" opacity=".45"/><path d="M48 915.2 Q68 908.2 88 915.2" stroke="#b9cad5" stroke-width="3.2" fill="none" opacity=".45"/><path d="M48 922.4 Q68 915.4 88 922.4" stroke="#b9cad5" stroke-width="3.2" fill="none" opacity=".45"/><path d="M48 929.6 Q68 922.6 88 929.6" stroke="#b9cad5" stroke-width="3.2" fill="none" opacity=".45"/><path d="M48 936.8 Q68 929.8 88 936.8" stroke="#b9cad5" stroke-width="3.2" fill="none" opacity=".45"/><path d="M48 944.0 Q68 937.0 88 944.0" stroke="#b9cad5" stroke-width="3.2" fill="none" opacity=".45"/><path d="M48 951.2 Q68 944.2 88 951.2" stroke="#b9cad5" stroke-width="3.2" fill="none" opacity=".45"/><path d="M48 958.4 Q68 951.4 88 958.4" stroke="#b9cad5" stroke-width="3.2" fill="none" opacity=".45"/><path d="M48 965.6 Q68 958.6 88 965.6" stroke="#b9cad5" stroke-width="3.2" fill="none" opacity=".45"/><path d="M48 972.8 Q68 965.8 88 972.8" stroke="#b9cad5" stroke-width="3.2" fill="none" opacity=".45"/><path d="M48 980.0 Q68 973.0 88 980.0" stroke="#b9cad5" stroke-width="3.2" fill="none" opacity=".45"/><path d="M48 987.2 Q68 980.2 88 987.2" stroke="#b9cad5" stroke-width="3.2" fill="none" opacity=".45"/><path d="M48 994.4000000000001 Q68 987.4000000000001 88 994.4000000000001" stroke="#b9cad5" stroke-width="3.2" fill="none" opacity=".45"/><path d="M48 1001.6 Q68 994.6 88 1001.6" stroke="#b9cad5" stroke-width="3.2" fill="none" opacity=".45"/><path d="M48 1008.8 Q68 1001.8 88 1008.8" stroke="#b9cad5" stroke-width="3.2" fill="none" opacity=".45"/><path d="M48 1016.0 Q68 1009.0 88 1016.0" stroke="#b9cad5" stroke-width="3.2" fill="none" opacity=".45"/><path d="M48 1023.2 Q68 1016.2 88 1023.2" stroke="#b9cad5" stroke-width="3.2" fill="none" opacity=".45"/><path d="M48 1030.4 Q68 1023.4000000000001 88 1030.4" stroke="#b9cad5" stroke-width="3.2" fill="none" opacity=".45"/><path d="M48 1037.6 Q68 1030.6 88 1037.6" stroke="#b9cad5" stroke-width="3.2" fill="none" opacity=".45"/><path d="M48 1044.8 Q68 1037.8 88 1044.8" stroke="#b9cad5" stroke-width="3.2" fill="none" opacity=".45"/><path d="M48 1052.0 Q68 1045.0 88 1052.0" stroke="#b9cad5" stroke-width="3.2" fill="none" opacity=".45"/><path d="M48 1059.2 Q68 1052.2 88 1059.2" stroke="#b9cad5" stroke-width="3.2" fill="none" opacity=".45"/><path d="M48 1066.4 Q68 1059.4 88 1066.4" stroke="#b9cad5" stroke-width="3.2" fill="none" opacity=".45"/><path d="M48 1073.6 Q68 1066.6 88 1073.6" stroke="#b9cad5" stroke-width="3.2" fill="none" opacity=".45"/><path d="M48 1080.8 Q68 1073.8 88 1080.8" stroke="#b9cad5" stroke-width="3.2" fill="none" opacity=".45"/><path d="M48 1088.0 Q68 1081.0 88 1088.0" stroke="#b9cad5" stroke-width="3.2" fill="none" opacity=".45"/><path d="M48 1095.2 Q68 1088.2 88 1095.2" stroke="#b9cad5" stroke-width="3.2" fill="none" opacity=".45"/><path d="M48 1102.4 Q68 1095.4 88 1102.4" stroke="#b9cad5" stroke-width="3.2" fill="none" opacity=".45"/><path d="M48 1109.6 Q68 1102.6 88 1109.6" stroke="#b9cad5" stroke-width="3.2" fill="none" opacity=".45"/><path d="M48 1116.8 Q68 1109.8 88 1116.8" stroke="#b9cad5" stroke-width="3.2" fill="none" opacity=".45"/><path d="M48 1124.0 Q68 1117.0 88 1124.0" stroke="#b9cad5" stroke-width="3.2" fill="none" opacity=".45"/><path d="M48 1131.2 Q68 1124.2 88 1131.2" stroke="#b9cad5" stroke-width="3.2" fill="none" opacity=".45"/><path d="M48 1138.4 Q68 1131.4 88 1138.4" stroke="#b9cad5" stroke-width="3.2" fill="none" opacity=".45"/><path d="M48 1145.6 Q68 1138.6 88 1145.6" stroke="#b9cad5" stroke-width="3.2" fill="none" opacity=".45"/><path d="M48 1152.8 Q68 1145.8 88 1152.8" stroke="#b9cad5" stroke-width="3.2" fill="none" opacity=".45"/><rect x="88" y="715" width="6" height="410" fill="#2b3741" opacity=".6"/><path d="M94 725.0 Q114 718.0 134 725.0" stroke="#b9cad5" stroke-width="3.2" fill="none" opacity=".45"/><path d="M94 732.2 Q114 725.2 134 732.2" stroke="#b9cad5" stroke-width="3.2" fill="none" opacity=".45"/><path d="M94 739.4 Q114 732.4 134 739.4" stroke="#b9cad5" stroke-width="3.2" fill="none" opacity=".45"/><path d="M94 746.6 Q114 739.6 134 746.6" stroke="#b9cad5" stroke-width="3.2" fill="none" opacity=".45"/><path d="M94 753.8 Q114 746.8 134 753.8" stroke="#b9cad5" stroke-width="3.2" fill="none" opacity=".45"/><path d="M94 761.0 Q114 754.0 134 761.0" stroke="#b9cad5" stroke-width="3.2" fill="none" opacity=".45"/><path d="M94 768.2 Q114 761.2 134 768.2" stroke="#b9cad5" stroke-width="3.2" fill="none" opacity=".45"/><path d="M94 775.4 Q114 768.4 134 775.4" stroke="#b9cad5" stroke-width="3.2" fill="none" opacity=".45"/><path d="M94 782.6 Q114 775.6 134 782.6" stroke="#b9cad5" stroke-width="3.2" fill="none" opacity=".45"/><path d="M94 789.8 Q114 782.8 134 789.8" stroke="#b9cad5" stroke-width="3.2" fill="none" opacity=".45"/><path d="M94 797.0 Q114 790.0 134 797.0" stroke="#b9cad5" stroke-width="3.2" fill="none" opacity=".45"/><path d="M94 804.2 Q114 797.2 134 804.2" stroke="#b9cad5" stroke-width="3.2" fill="none" opacity=".45"/><path d="M94 811.4 Q114 804.4 134 811.4" stroke="#b9cad5" stroke-width="3.2" fill="none" opacity=".45"/><path d="M94 818.6 Q114 811.6 134 818.6" stroke="#b9cad5" stroke-width="3.2" fill="none" opacity=".45"/><path d="M94 825.8 Q114 818.8 134 825.8" stroke="#b9cad5" stroke-width="3.2" fill="none" opacity=".45"/><path d="M94 833.0 Q114 826.0 134 833.0" stroke="#b9cad5" stroke-width="3.2" fill="none" opacity=".45"/><path d="M94 840.2 Q114 833.2 134 840.2" stroke="#b9cad5" stroke-width="3.2" fill="none" opacity=".45"/><path d="M94 847.4 Q114 840.4 134 847.4" stroke="#b9cad5" stroke-width="3.2" fill="none" opacity=".45"/><path d="M94 854.6 Q114 847.6 134 854.6" stroke="#b9cad5" stroke-width="3.2" fill="none" opacity=".45"/><path d="M94 861.8 Q114 854.8 134 861.8" stroke="#b9cad5" stroke-width="3.2" fill="none" opacity=".45"/><path d="M94 869.0 Q114 862.0 134 869.0" stroke="#b9cad5" stroke-width="3.2" fill="none" opacity=".45"/><path d="M94 876.2 Q114 869.2 134 876.2" stroke="#b9cad5" stroke-width="3.2" fill="none" opacity=".45"/><path d="M94 883.4 Q114 876.4 134 883.4" stroke="#b9cad5" stroke-width="3.2" fill="none" opacity=".45"/><path d="M94 890.6 Q114 883.6 134 890.6" stroke="#b9cad5" stroke-width="3.2" fill="none" opacity=".45"/><path d="M94 897.8 Q114 890.8 134 897.8" stroke="#b9cad5" stroke-width="3.2" fill="none" opacity=".45"/><path d="M94 905.0 Q114 898.0 134 905.0" stroke="#b9cad5" stroke-width="3.2" fill="none" opacity=".45"/><path d="M94 912.2 Q114 905.2 134 912.2" stroke="#b9cad5" stroke-width="3.2" fill="none" opacity=".45"/><path d="M94 919.4 Q114 912.4 134 919.4" stroke="#b9cad5" stroke-width="3.2" fill="none" opacity=".45"/><path d="M94 926.6 Q114 919.6 134 926.6" stroke="#b9cad5" stroke-width="3.2" fill="none" opacity=".45"/><path d="M94 933.8 Q114 926.8 134 933.8" stroke="#b9cad5" stroke-width="3.2" fill="none" opacity=".45"/><path d="M94 941.0 Q114 934.0 134 941.0" stroke="#b9cad5" stroke-width="3.2" fill="none" opacity=".45"/><path d="M94 948.2 Q114 941.2 134 948.2" stroke="#b9cad5" stroke-width="3.2" fill="none" opacity=".45"/><path d="M94 955.4 Q114 948.4 134 955.4" stroke="#b9cad5" stroke-width="3.2" fill="none" opacity=".45"/><path d="M94 962.6 Q114 955.6 134 962.6" stroke="#b9cad5" stroke-width="3.2" fill="none" opacity=".45"/><path d="M94 969.8 Q114 962.8 134 969.8" stroke="#b9cad5" stroke-width="3.2" fill="none" opacity=".45"/><path d="M94 977.0 Q114 970.0 134 977.0" stroke="#b9cad5" stroke-width="3.2" fill="none" opacity=".45"/><path d="M94 984.2 Q114 977.2 134 984.2" stroke="#b9cad5" stroke-width="3.2" fill="none" opacity=".45"/><path d="M94 991.4000000000001 Q114 984.4000000000001 134 991.4000000000001" stroke="#b9cad5" stroke-width="3.2" fill="none" opacity=".45"/><path d="M94 998.6 Q114 991.6 134 998.6" stroke="#b9cad5" stroke-width="3.2" fill="none" opacity=".45"/><path d="M94 1005.8 Q114 998.8 134 1005.8" stroke="#b9cad5" stroke-width="3.2" fill="none" opacity=".45"/><path d="M94 1013.0 Q114 1006.0 134 1013.0" stroke="#b9cad5" stroke-width="3.2" fill="none" opacity=".45"/><path d="M94 1020.2 Q114 1013.2 134 1020.2" stroke="#b9cad5" stroke-width="3.2" fill="none" opacity=".45"/><path d="M94 1027.4 Q114 1020.4000000000001 134 1027.4" stroke="#b9cad5" stroke-width="3.2" fill="none" opacity=".45"/><path d="M94 1034.6 Q114 1027.6 134 1034.6" stroke="#b9cad5" stroke-width="3.2" fill="none" opacity=".45"/><path d="M94 1041.8 Q114 1034.8 134 1041.8" stroke="#b9cad5" stroke-width="3.2" fill="none" opacity=".45"/><path d="M94 1049.0 Q114 1042.0 134 1049.0" stroke="#b9cad5" stroke-width="3.2" fill="none" opacity=".45"/><path d="M94 1056.2 Q114 1049.2 134 1056.2" stroke="#b9cad5" stroke-width="3.2" fill="none" opacity=".45"/><path d="M94 1063.4 Q114 1056.4 134 1063.4" stroke="#b9cad5" stroke-width="3.2" fill="none" opacity=".45"/><path d="M94 1070.6 Q114 1063.6 134 1070.6" stroke="#b9cad5" stroke-width="3.2" fill="none" opacity=".45"/><path d="M94 1077.8 Q114 1070.8 134 1077.8" stroke="#b9cad5" stroke-width="3.2" fill="none" opacity=".45"/><path d="M94 1085.0 Q114 1078.0 134 1085.0" stroke="#b9cad5" stroke-width="3.2" fill="none" opacity=".45"/><path d="M94 1092.2 Q114 1085.2 134 1092.2" stroke="#b9cad5" stroke-width="3.2" fill="none" opacity=".45"/><path d="M94 1099.4 Q114 1092.4 134 1099.4" stroke="#b9cad5" stroke-width="3.2" fill="none" opacity=".45"/><path d="M94 1106.6 Q114 1099.6 134 1106.6" stroke="#b9cad5" stroke-width="3.2" fill="none" opacity=".45"/><path d="M94 1113.8 Q114 1106.8 134 1113.8" stroke="#b9cad5" stroke-width="3.2" fill="none" opacity=".45"/><path d="M94 1121.0 Q114 1114.0 134 1121.0" stroke="#b9cad5" stroke-width="3.2" fill="none" opacity=".45"/><path d="M94 1128.2 Q114 1121.2 134 1128.2" stroke="#b9cad5" stroke-width="3.2" fill="none" opacity=".45"/><path d="M94 1135.4 Q114 1128.4 134 1135.4" stroke="#b9cad5" stroke-width="3.2" fill="none" opacity=".45"/><path d="M94 1142.6 Q114 1135.6 134 1142.6" stroke="#b9cad5" stroke-width="3.2" fill="none" opacity=".45"/><path d="M94 1149.8 Q114 1142.8 134 1149.8" stroke="#b9cad5" stroke-width="3.2" fill="none" opacity=".45"/><rect x="134" y="715" width="6" height="410" fill="#2b3741" opacity=".6"/><path d="M140 728.0 Q160 721.0 180 728.0" stroke="#b9cad5" stroke-width="3.2" fill="none" opacity=".45"/><path d="M140 735.2 Q160 728.2 180 735.2" stroke="#b9cad5" stroke-width="3.2" fill="none" opacity=".45"/><path d="M140 742.4 Q160 735.4 180 742.4" stroke="#b9cad5" stroke-width="3.2" fill="none" opacity=".45"/><path d="M140 749.6 Q160 742.6 180 749.6" stroke="#b9cad5" stroke-width="3.2" fill="none" opacity=".45"/><path d="M140 756.8 Q160 749.8 180 756.8" stroke="#b9cad5" stroke-width="3.2" fill="none" opacity=".45"/><path d="M140 764.0 Q160 757.0 180 764.0" stroke="#b9cad5" stroke-width="3.2" fill="none" opacity=".45"/><path d="M140 771.2 Q160 764.2 180 771.2" stroke="#b9cad5" stroke-width="3.2" fill="none" opacity=".45"/><path d="M140 778.4 Q160 771.4 180 778.4" stroke="#b9cad5" stroke-width="3.2" fill="none" opacity=".45"/><path d="M140 785.6 Q160 778.6 180 785.6" stroke="#b9cad5" stroke-width="3.2" fill="none" opacity=".45"/><path d="M140 792.8 Q160 785.8 180 792.8" stroke="#b9cad5" stroke-width="3.2" fill="none" opacity=".45"/><path d="M140 800.0 Q160 793.0 180 800.0" stroke="#b9cad5" stroke-width="3.2" fill="none" opacity=".45"/><path d="M140 807.2 Q160 800.2 180 807.2" stroke="#b9cad5" stroke-width="3.2" fill="none" opacity=".45"/><path d="M140 814.4 Q160 807.4 180 814.4" stroke="#b9cad5" stroke-width="3.2" fill="none" opacity=".45"/><path d="M140 821.6 Q160 814.6 180 821.6" stroke="#b9cad5" stroke-width="3.2" fill="none" opacity=".45"/><path d="M140 828.8 Q160 821.8 180 828.8" stroke="#b9cad5" stroke-width="3.2" fill="none" opacity=".45"/><path d="M140 836.0 Q160 829.0 180 836.0" stroke="#b9cad5" stroke-width="3.2" fill="none" opacity=".45"/><path d="M140 843.2 Q160 836.2 180 843.2" stroke="#b9cad5" stroke-width="3.2" fill="none" opacity=".45"/><path d="M140 850.4 Q160 843.4 180 850.4" stroke="#b9cad5" stroke-width="3.2" fill="none" opacity=".45"/><path d="M140 857.6 Q160 850.6 180 857.6" stroke="#b9cad5" stroke-width="3.2" fill="none" opacity=".45"/><path d="M140 864.8 Q160 857.8 180 864.8" stroke="#b9cad5" stroke-width="3.2" fill="none" opacity=".45"/><path d="M140 872.0 Q160 865.0 180 872.0" stroke="#b9cad5" stroke-width="3.2" fill="none" opacity=".45"/><path d="M140 879.2 Q160 872.2 180 879.2" stroke="#b9cad5" stroke-width="3.2" fill="none" opacity=".45"/><path d="M140 886.4 Q160 879.4 180 886.4" stroke="#b9cad5" stroke-width="3.2" fill="none" opacity=".45"/><path d="M140 893.6 Q160 886.6 180 893.6" stroke="#b9cad5" stroke-width="3.2" fill="none" opacity=".45"/><path d="M140 900.8 Q160 893.8 180 900.8" stroke="#b9cad5" stroke-width="3.2" fill="none" opacity=".45"/><path d="M140 908.0 Q160 901.0 180 908.0" stroke="#b9cad5" stroke-width="3.2" fill="none" opacity=".45"/><path d="M140 915.2 Q160 908.2 180 915.2" stroke="#b9cad5" stroke-width="3.2" fill="none" opacity=".45"/><path d="M140 922.4 Q160 915.4 180 922.4" stroke="#b9cad5" stroke-width="3.2" fill="none" opacity=".45"/><path d="M140 929.6 Q160 922.6 180 929.6" stroke="#b9cad5" stroke-width="3.2" fill="none" opacity=".45"/><path d="M140 936.8 Q160 929.8 180 936.8" stroke="#b9cad5" stroke-width="3.2" fill="none" opacity=".45"/><path d="M140 944.0 Q160 937.0 180 944.0" stroke="#b9cad5" stroke-width="3.2" fill="none" opacity=".45"/><path d="M140 951.2 Q160 944.2 180 951.2" stroke="#b9cad5" stroke-width="3.2" fill="none" opacity=".45"/><path d="M140 958.4 Q160 951.4 180 958.4" stroke="#b9cad5" stroke-width="3.2" fill="none" opacity=".45"/><path d="M140 965.6 Q160 958.6 180 965.6" stroke="#b9cad5" stroke-width="3.2" fill="none" opacity=".45"/><path d="M140 972.8 Q160 965.8 180 972.8" stroke="#b9cad5" stroke-width="3.2" fill="none" opacity=".45"/><path d="M140 980.0 Q160 973.0 180 980.0" stroke="#b9cad5" stroke-width="3.2" fill="none" opacity=".45"/><path d="M140 987.2 Q160 980.2 180 987.2" stroke="#b9cad5" stroke-width="3.2" fill="none" opacity=".45"/><path d="M140 994.4000000000001 Q160 987.4000000000001 180 994.4000000000001" stroke="#b9cad5" stroke-width="3.2" fill="none" opacity=".45"/><path d="M140 1001.6 Q160 994.6 180 1001.6" stroke="#b9cad5" stroke-width="3.2" fill="none" opacity=".45"/><path d="M140 1008.8 Q160 1001.8 180 1008.8" stroke="#b9cad5" stroke-width="3.2" fill="none" opacity=".45"/><path d="M140 1016.0 Q160 1009.0 180 1016.0" stroke="#b9cad5" stroke-width="3.2" fill="none" opacity=".45"/><path d="M140 1023.2 Q160 1016.2 180 1023.2" stroke="#b9cad5" stroke-width="3.2" fill="none" opacity=".45"/><path d="M140 1030.4 Q160 1023.4000000000001 180 1030.4" stroke="#b9cad5" stroke-width="3.2" fill="none" opacity=".45"/><path d="M140 1037.6 Q160 1030.6 180 1037.6" stroke="#b9cad5" stroke-width="3.2" fill="none" opacity=".45"/><path d="M140 1044.8 Q160 1037.8 180 1044.8" stroke="#b9cad5" stroke-width="3.2" fill="none" opacity=".45"/><path d="M140 1052.0 Q160 1045.0 180 1052.0" stroke="#b9cad5" stroke-width="3.2" fill="none" opacity=".45"/><path d="M140 1059.2 Q160 1052.2 180 1059.2" stroke="#b9cad5" stroke-width="3.2" fill="none" opacity=".45"/><path d="M140 1066.4 Q160 1059.4 180 1066.4" stroke="#b9cad5" stroke-width="3.2" fill="none" opacity=".45"/><path d="M140 1073.6 Q160 1066.6 180 1073.6" stroke="#b9cad5" stroke-width="3.2" fill="none" opacity=".45"/><path d="M140 1080.8 Q160 1073.8 180 1080.8" stroke="#b9cad5" stroke-width="3.2" fill="none" opacity=".45"/><path d="M140 1088.0 Q160 1081.0 180 1088.0" stroke="#b9cad5" stroke-width="3.2" fill="none" opacity=".45"/><path d="M140 1095.2 Q160 1088.2 180 1095.2" stroke="#b9cad5" stroke-width="3.2" fill="none" opacity=".45"/><path d="M140 1102.4 Q160 1095.4 180 1102.4" stroke="#b9cad5" stroke-width="3.2" fill="none" opacity=".45"/><path d="M140 1109.6 Q160 1102.6 180 1109.6" stroke="#b9cad5" stroke-width="3.2" fill="none" opacity=".45"/><path d="M140 1116.8 Q160 1109.8 180 1116.8" stroke="#b9cad5" stroke-width="3.2" fill="none" opacity=".45"/><path d="M140 1124.0 Q160 1117.0 180 1124.0" stroke="#b9cad5" stroke-width="3.2" fill="none" opacity=".45"/><path d="M140 1131.2 Q160 1124.2 180 1131.2" stroke="#b9cad5" stroke-width="3.2" fill="none" opacity=".45"/><path d="M140 1138.4 Q160 1131.4 180 1138.4" stroke="#b9cad5" stroke-width="3.2" fill="none" opacity=".45"/><path d="M140 1145.6 Q160 1138.6 180 1145.6" stroke="#b9cad5" stroke-width="3.2" fill="none" opacity=".45"/><path d="M140 1152.8 Q160 1145.8 180 1152.8" stroke="#b9cad5" stroke-width="3.2" fill="none" opacity=".45"/><rect x="180" y="715" width="6" height="410" fill="#2b3741" opacity=".6"/><path d="M186 725.0 Q206 718.0 226 725.0" stroke="#b9cad5" stroke-width="3.2" fill="none" opacity=".45"/><path d="M186 732.2 Q206 725.2 226 732.2" stroke="#b9cad5" stroke-width="3.2" fill="none" opacity=".45"/><path d="M186 739.4 Q206 732.4 226 739.4" stroke="#b9cad5" stroke-width="3.2" fill="none" opacity=".45"/><path d="M186 746.6 Q206 739.6 226 746.6" stroke="#b9cad5" stroke-width="3.2" fill="none" opacity=".45"/><path d="M186 753.8 Q206 746.8 226 753.8" stroke="#b9cad5" stroke-width="3.2" fill="none" opacity=".45"/><path d="M186 761.0 Q206 754.0 226 761.0" stroke="#b9cad5" stroke-width="3.2" fill="none" opacity=".45"/><path d="M186 768.2 Q206 761.2 226 768.2" stroke="#b9cad5" stroke-width="3.2" fill="none" opacity=".45"/><path d="M186 775.4 Q206 768.4 226 775.4" stroke="#b9cad5" stroke-width="3.2" fill="none" opacity=".45"/><path d="M186 782.6 Q206 775.6 226 782.6" stroke="#b9cad5" stroke-width="3.2" fill="none" opacity=".45"/><path d="M186 789.8 Q206 782.8 226 789.8" stroke="#b9cad5" stroke-width="3.2" fill="none" opacity=".45"/><path d="M186 797.0 Q206 790.0 226 797.0" stroke="#b9cad5" stroke-width="3.2" fill="none" opacity=".45"/><path d="M186 804.2 Q206 797.2 226 804.2" stroke="#b9cad5" stroke-width="3.2" fill="none" opacity=".45"/><path d="M186 811.4 Q206 804.4 226 811.4" stroke="#b9cad5" stroke-width="3.2" fill="none" opacity=".45"/><path d="M186 818.6 Q206 811.6 226 818.6" stroke="#b9cad5" stroke-width="3.2" fill="none" opacity=".45"/><path d="M186 825.8 Q206 818.8 226 825.8" stroke="#b9cad5" stroke-width="3.2" fill="none" opacity=".45"/><path d="M186 833.0 Q206 826.0 226 833.0" stroke="#b9cad5" stroke-width="3.2" fill="none" opacity=".45"/><path d="M186 840.2 Q206 833.2 226 840.2" stroke="#b9cad5" stroke-width="3.2" fill="none" opacity=".45"/><path d="M186 847.4 Q206 840.4 226 847.4" stroke="#b9cad5" stroke-width="3.2" fill="none" opacity=".45"/><path d="M186 854.6 Q206 847.6 226 854.6" stroke="#b9cad5" stroke-width="3.2" fill="none" opacity=".45"/><path d="M186 861.8 Q206 854.8 226 861.8" stroke="#b9cad5" stroke-width="3.2" fill="none" opacity=".45"/><path d="M186 869.0 Q206 862.0 226 869.0" stroke="#b9cad5" stroke-width="3.2" fill="none" opacity=".45"/><path d="M186 876.2 Q206 869.2 226 876.2" stroke="#b9cad5" stroke-width="3.2" fill="none" opacity=".45"/><path d="M186 883.4 Q206 876.4 226 883.4" stroke="#b9cad5" stroke-width="3.2" fill="none" opacity=".45"/><path d="M186 890.6 Q206 883.6 226 890.6" stroke="#b9cad5" stroke-width="3.2" fill="none" opacity=".45"/><path d="M186 897.8 Q206 890.8 226 897.8" stroke="#b9cad5" stroke-width="3.2" fill="none" opacity=".45"/><path d="M186 905.0 Q206 898.0 226 905.0" stroke="#b9cad5" stroke-width="3.2" fill="none" opacity=".45"/><path d="M186 912.2 Q206 905.2 226 912.2" stroke="#b9cad5" stroke-width="3.2" fill="none" opacity=".45"/><path d="M186 919.4 Q206 912.4 226 919.4" stroke="#b9cad5" stroke-width="3.2" fill="none" opacity=".45"/><path d="M186 926.6 Q206 919.6 226 926.6" stroke="#b9cad5" stroke-width="3.2" fill="none" opacity=".45"/><path d="M186 933.8 Q206 926.8 226 933.8" stroke="#b9cad5" stroke-width="3.2" fill="none" opacity=".45"/><path d="M186 941.0 Q206 934.0 226 941.0" stroke="#b9cad5" stroke-width="3.2" fill="none" opacity=".45"/><path d="M186 948.2 Q206 941.2 226 948.2" stroke="#b9cad5" stroke-width="3.2" fill="none" opacity=".45"/><path d="M186 955.4 Q206 948.4 226 955.4" stroke="#b9cad5" stroke-width="3.2" fill="none" opacity=".45"/><path d="M186 962.6 Q206 955.6 226 962.6" stroke="#b9cad5" stroke-width="3.2" fill="none" opacity=".45"/><path d="M186 969.8 Q206 962.8 226 969.8" stroke="#b9cad5" stroke-width="3.2" fill="none" opacity=".45"/><path d="M186 977.0 Q206 970.0 226 977.0" stroke="#b9cad5" stroke-width="3.2" fill="none" opacity=".45"/><path d="M186 984.2 Q206 977.2 226 984.2" stroke="#b9cad5" stroke-width="3.2" fill="none" opacity=".45"/><path d="M186 991.4000000000001 Q206 984.4000000000001 226 991.4000000000001" stroke="#b9cad5" stroke-width="3.2" fill="none" opacity=".45"/><path d="M186 998.6 Q206 991.6 226 998.6" stroke="#b9cad5" stroke-width="3.2" fill="none" opacity=".45"/><path d="M186 1005.8 Q206 998.8 226 1005.8" stroke="#b9cad5" stroke-width="3.2" fill="none" opacity=".45"/><path d="M186 1013.0 Q206 1006.0 226 1013.0" stroke="#b9cad5" stroke-width="3.2" fill="none" opacity=".45"/><path d="M186 1020.2 Q206 1013.2 226 1020.2" stroke="#b9cad5" stroke-width="3.2" fill="none" opacity=".45"/><path d="M186 1027.4 Q206 1020.4000000000001 226 1027.4" stroke="#b9cad5" stroke-width="3.2" fill="none" opacity=".45"/><path d="M186 1034.6 Q206 1027.6 226 1034.6" stroke="#b9cad5" stroke-width="3.2" fill="none" opacity=".45"/><path d="M186 1041.8 Q206 1034.8 226 1041.8" stroke="#b9cad5" stroke-width="3.2" fill="none" opacity=".45"/><path d="M186 1049.0 Q206 1042.0 226 1049.0" stroke="#b9cad5" stroke-width="3.2" fill="none" opacity=".45"/><path d="M186 1056.2 Q206 1049.2 226 1056.2" stroke="#b9cad5" stroke-width="3.2" fill="none" opacity=".45"/><path d="M186 1063.4 Q206 1056.4 226 1063.4" stroke="#b9cad5" stroke-width="3.2" fill="none" opacity=".45"/><path d="M186 1070.6 Q206 1063.6 226 1070.6" stroke="#b9cad5" stroke-width="3.2" fill="none" opacity=".45"/><path d="M186 1077.8 Q206 1070.8 226 1077.8" stroke="#b9cad5" stroke-width="3.2" fill="none" opacity=".45"/><path d="M186 1085.0 Q206 1078.0 226 1085.0" stroke="#b9cad5" stroke-width="3.2" fill="none" opacity=".45"/><path d="M186 1092.2 Q206 1085.2 226 1092.2" stroke="#b9cad5" stroke-width="3.2" fill="none" opacity=".45"/><path d="M186 1099.4 Q206 1092.4 226 1099.4" stroke="#b9cad5" stroke-width="3.2" fill="none" opacity=".45"/><path d="M186 1106.6 Q206 1099.6 226 1106.6" stroke="#b9cad5" stroke-width="3.2" fill="none" opacity=".45"/><path d="M186 1113.8 Q206 1106.8 226 1113.8" stroke="#b9cad5" stroke-width="3.2" fill="none" opacity=".45"/><path d="M186 1121.0 Q206 1114.0 226 1121.0" stroke="#b9cad5" stroke-width="3.2" fill="none" opacity=".45"/><path d="M186 1128.2 Q206 1121.2 226 1128.2" stroke="#b9cad5" stroke-width="3.2" fill="none" opacity=".45"/><path d="M186 1135.4 Q206 1128.4 226 1135.4" stroke="#b9cad5" stroke-width="3.2" fill="none" opacity=".45"/><path d="M186 1142.6 Q206 1135.6 226 1142.6" stroke="#b9cad5" stroke-width="3.2" fill="none" opacity=".45"/><path d="M186 1149.8 Q206 1142.8 226 1149.8" stroke="#b9cad5" stroke-width="3.2" fill="none" opacity=".45"/><rect x="226" y="715" width="6" height="410" fill="#2b3741" opacity=".6"/><path d="M232 728.0 Q252 721.0 272 728.0" stroke="#b9cad5" stroke-width="3.2" fill="none" opacity=".45"/><path d="M232 735.2 Q252 728.2 272 735.2" stroke="#b9cad5" stroke-width="3.2" fill="none" opacity=".45"/><path d="M232 742.4 Q252 735.4 272 742.4" stroke="#b9cad5" stroke-width="3.2" fill="none" opacity=".45"/><path d="M232 749.6 Q252 742.6 272 749.6" stroke="#b9cad5" stroke-width="3.2" fill="none" opacity=".45"/><path d="M232 756.8 Q252 749.8 272 756.8" stroke="#b9cad5" stroke-width="3.2" fill="none" opacity=".45"/><path d="M232 764.0 Q252 757.0 272 764.0" stroke="#b9cad5" stroke-width="3.2" fill="none" opacity=".45"/><path d="M232 771.2 Q252 764.2 272 771.2" stroke="#b9cad5" stroke-width="3.2" fill="none" opacity=".45"/><path d="M232 778.4 Q252 771.4 272 778.4" stroke="#b9cad5" stroke-width="3.2" fill="none" opacity=".45"/><path d="M232 785.6 Q252 778.6 272 785.6" stroke="#b9cad5" stroke-width="3.2" fill="none" opacity=".45"/><path d="M232 792.8 Q252 785.8 272 792.8" stroke="#b9cad5" stroke-width="3.2" fill="none" opacity=".45"/><path d="M232 800.0 Q252 793.0 272 800.0" stroke="#b9cad5" stroke-width="3.2" fill="none" opacity=".45"/><path d="M232 807.2 Q252 800.2 272 807.2" stroke="#b9cad5" stroke-width="3.2" fill="none" opacity=".45"/><path d="M232 814.4 Q252 807.4 272 814.4" stroke="#b9cad5" stroke-width="3.2" fill="none" opacity=".45"/><path d="M232 821.6 Q252 814.6 272 821.6" stroke="#b9cad5" stroke-width="3.2" fill="none" opacity=".45"/><path d="M232 828.8 Q252 821.8 272 828.8" stroke="#b9cad5" stroke-width="3.2" fill="none" opacity=".45"/><path d="M232 836.0 Q252 829.0 272 836.0" stroke="#b9cad5" stroke-width="3.2" fill="none" opacity=".45"/><path d="M232 843.2 Q252 836.2 272 843.2" stroke="#b9cad5" stroke-width="3.2" fill="none" opacity=".45"/><path d="M232 850.4 Q252 843.4 272 850.4" stroke="#b9cad5" stroke-width="3.2" fill="none" opacity=".45"/><path d="M232 857.6 Q252 850.6 272 857.6" stroke="#b9cad5" stroke-width="3.2" fill="none" opacity=".45"/><path d="M232 864.8 Q252 857.8 272 864.8" stroke="#b9cad5" stroke-width="3.2" fill="none" opacity=".45"/><path d="M232 872.0 Q252 865.0 272 872.0" stroke="#b9cad5" stroke-width="3.2" fill="none" opacity=".45"/><path d="M232 879.2 Q252 872.2 272 879.2" stroke="#b9cad5" stroke-width="3.2" fill="none" opacity=".45"/><path d="M232 886.4 Q252 879.4 272 886.4" stroke="#b9cad5" stroke-width="3.2" fill="none" opacity=".45"/><path d="M232 893.6 Q252 886.6 272 893.6" stroke="#b9cad5" stroke-width="3.2" fill="none" opacity=".45"/><path d="M232 900.8 Q252 893.8 272 900.8" stroke="#b9cad5" stroke-width="3.2" fill="none" opacity=".45"/><path d="M232 908.0 Q252 901.0 272 908.0" stroke="#b9cad5" stroke-width="3.2" fill="none" opacity=".45"/><path d="M232 915.2 Q252 908.2 272 915.2" stroke="#b9cad5" stroke-width="3.2" fill="none" opacity=".45"/><path d="M232 922.4 Q252 915.4 272 922.4" stroke="#b9cad5" stroke-width="3.2" fill="none" opacity=".45"/><path d="M232 929.6 Q252 922.6 272 929.6" stroke="#b9cad5" stroke-width="3.2" fill="none" opacity=".45"/><path d="M232 936.8 Q252 929.8 272 936.8" stroke="#b9cad5" stroke-width="3.2" fill="none" opacity=".45"/><path d="M232 944.0 Q252 937.0 272 944.0" stroke="#b9cad5" stroke-width="3.2" fill="none" opacity=".45"/><path d="M232 951.2 Q252 944.2 272 951.2" stroke="#b9cad5" stroke-width="3.2" fill="none" opacity=".45"/><path d="M232 958.4 Q252 951.4 272 958.4" stroke="#b9cad5" stroke-width="3.2" fill="none" opacity=".45"/><path d="M232 965.6 Q252 958.6 272 965.6" stroke="#b9cad5" stroke-width="3.2" fill="none" opacity=".45"/><path d="M232 972.8 Q252 965.8 272 972.8" stroke="#b9cad5" stroke-width="3.2" fill="none" opacity=".45"/><path d="M232 980.0 Q252 973.0 272 980.0" stroke="#b9cad5" stroke-width="3.2" fill="none" opacity=".45"/><path d="M232 987.2 Q252 980.2 272 987.2" stroke="#b9cad5" stroke-width="3.2" fill="none" opacity=".45"/><path d="M232 994.4000000000001 Q252 987.4000000000001 272 994.4000000000001" stroke="#b9cad5" stroke-width="3.2" fill="none" opacity=".45"/><path d="M232 1001.6 Q252 994.6 272 1001.6" stroke="#b9cad5" stroke-width="3.2" fill="none" opacity=".45"/><path d="M232 1008.8 Q252 1001.8 272 1008.8" stroke="#b9cad5" stroke-width="3.2" fill="none" opacity=".45"/><path d="M232 1016.0 Q252 1009.0 272 1016.0" stroke="#b9cad5" stroke-width="3.2" fill="none" opacity=".45"/><path d="M232 1023.2 Q252 1016.2 272 1023.2" stroke="#b9cad5" stroke-width="3.2" fill="none" opacity=".45"/><path d="M232 1030.4 Q252 1023.4000000000001 272 1030.4" stroke="#b9cad5" stroke-width="3.2" fill="none" opacity=".45"/><path d="M232 1037.6 Q252 1030.6 272 1037.6" stroke="#b9cad5" stroke-width="3.2" fill="none" opacity=".45"/><path d="M232 1044.8 Q252 1037.8 272 1044.8" stroke="#b9cad5" stroke-width="3.2" fill="none" opacity=".45"/><path d="M232 1052.0 Q252 1045.0 272 1052.0" stroke="#b9cad5" stroke-width="3.2" fill="none" opacity=".45"/><path d="M232 1059.2 Q252 1052.2 272 1059.2" stroke="#b9cad5" stroke-width="3.2" fill="none" opacity=".45"/><path d="M232 1066.4 Q252 1059.4 272 1066.4" stroke="#b9cad5" stroke-width="3.2" fill="none" opacity=".45"/><path d="M232 1073.6 Q252 1066.6 272 1073.6" stroke="#b9cad5" stroke-width="3.2" fill="none" opacity=".45"/><path d="M232 1080.8 Q252 1073.8 272 1080.8" stroke="#b9cad5" stroke-width="3.2" fill="none" opacity=".45"/><path d="M232 1088.0 Q252 1081.0 272 1088.0" stroke="#b9cad5" stroke-width="3.2" fill="none" opacity=".45"/><path d="M232 1095.2 Q252 1088.2 272 1095.2" stroke="#b9cad5" stroke-width="3.2" fill="none" opacity=".45"/><path d="M232 1102.4 Q252 1095.4 272 1102.4" stroke="#b9cad5" stroke-width="3.2" fill="none" opacity=".45"/><path d="M232 1109.6 Q252 1102.6 272 1109.6" stroke="#b9cad5" stroke-width="3.2" fill="none" opacity=".45"/><path d="M232 1116.8 Q252 1109.8 272 1116.8" stroke="#b9cad5" stroke-width="3.2" fill="none" opacity=".45"/><path d="M232 1124.0 Q252 1117.0 272 1124.0" stroke="#b9cad5" stroke-width="3.2" fill="none" opacity=".45"/><path d="M232 1131.2 Q252 1124.2 272 1131.2" stroke="#b9cad5" stroke-width="3.2" fill="none" opacity=".45"/><path d="M232 1138.4 Q252 1131.4 272 1138.4" stroke="#b9cad5" stroke-width="3.2" fill="none" opacity=".45"/><path d="M232 1145.6 Q252 1138.6 272 1145.6" stroke="#b9cad5" stroke-width="3.2" fill="none" opacity=".45"/><path d="M232 1152.8 Q252 1145.8 272 1152.8" stroke="#b9cad5" stroke-width="3.2" fill="none" opacity=".45"/><rect x="272" y="715" width="6" height="410" fill="#2b3741" opacity=".6"/><path d="M278 725.0 Q298 718.0 318 725.0" stroke="#b9cad5" stroke-width="3.2" fill="none" opacity=".45"/><path d="M278 732.2 Q298 725.2 318 732.2" stroke="#b9cad5" stroke-width="3.2" fill="none" opacity=".45"/><path d="M278 739.4 Q298 732.4 318 739.4" stroke="#b9cad5" stroke-width="3.2" fill="none" opacity=".45"/><path d="M278 746.6 Q298 739.6 318 746.6" stroke="#b9cad5" stroke-width="3.2" fill="none" opacity=".45"/><path d="M278 753.8 Q298 746.8 318 753.8" stroke="#b9cad5" stroke-width="3.2" fill="none" opacity=".45"/><path d="M278 761.0 Q298 754.0 318 761.0" stroke="#b9cad5" stroke-width="3.2" fill="none" opacity=".45"/><path d="M278 768.2 Q298 761.2 318 768.2" stroke="#b9cad5" stroke-width="3.2" fill="none" opacity=".45"/><path d="M278 775.4 Q298 768.4 318 775.4" stroke="#b9cad5" stroke-width="3.2" fill="none" opacity=".45"/><path d="M278 782.6 Q298 775.6 318 782.6" stroke="#b9cad5" stroke-width="3.2" fill="none" opacity=".45"/><path d="M278 789.8 Q298 782.8 318 789.8" stroke="#b9cad5" stroke-width="3.2" fill="none" opacity=".45"/><path d="M278 797.0 Q298 790.0 318 797.0" stroke="#b9cad5" stroke-width="3.2" fill="none" opacity=".45"/><path d="M278 804.2 Q298 797.2 318 804.2" stroke="#b9cad5" stroke-width="3.2" fill="none" opacity=".45"/><path d="M278 811.4 Q298 804.4 318 811.4" stroke="#b9cad5" stroke-width="3.2" fill="none" opacity=".45"/><path d="M278 818.6 Q298 811.6 318 818.6" stroke="#b9cad5" stroke-width="3.2" fill="none" opacity=".45"/><path d="M278 825.8 Q298 818.8 318 825.8" stroke="#b9cad5" stroke-width="3.2" fill="none" opacity=".45"/><path d="M278 833.0 Q298 826.0 318 833.0" stroke="#b9cad5" stroke-width="3.2" fill="none" opacity=".45"/><path d="M278 840.2 Q298 833.2 318 840.2" stroke="#b9cad5" stroke-width="3.2" fill="none" opacity=".45"/><path d="M278 847.4 Q298 840.4 318 847.4" stroke="#b9cad5" stroke-width="3.2" fill="none" opacity=".45"/><path d="M278 854.6 Q298 847.6 318 854.6" stroke="#b9cad5" stroke-width="3.2" fill="none" opacity=".45"/><path d="M278 861.8 Q298 854.8 318 861.8" stroke="#b9cad5" stroke-width="3.2" fill="none" opacity=".45"/><path d="M278 869.0 Q298 862.0 318 869.0" stroke="#b9cad5" stroke-width="3.2" fill="none" opacity=".45"/><path d="M278 876.2 Q298 869.2 318 876.2" stroke="#b9cad5" stroke-width="3.2" fill="none" opacity=".45"/><path d="M278 883.4 Q298 876.4 318 883.4" stroke="#b9cad5" stroke-width="3.2" fill="none" opacity=".45"/><path d="M278 890.6 Q298 883.6 318 890.6" stroke="#b9cad5" stroke-width="3.2" fill="none" opacity=".45"/><path d="M278 897.8 Q298 890.8 318 897.8" stroke="#b9cad5" stroke-width="3.2" fill="none" opacity=".45"/><path d="M278 905.0 Q298 898.0 318 905.0" stroke="#b9cad5" stroke-width="3.2" fill="none" opacity=".45"/><path d="M278 912.2 Q298 905.2 318 912.2" stroke="#b9cad5" stroke-width="3.2" fill="none" opacity=".45"/><path d="M278 919.4 Q298 912.4 318 919.4" stroke="#b9cad5" stroke-width="3.2" fill="none" opacity=".45"/><path d="M278 926.6 Q298 919.6 318 926.6" stroke="#b9cad5" stroke-width="3.2" fill="none" opacity=".45"/><path d="M278 933.8 Q298 926.8 318 933.8" stroke="#b9cad5" stroke-width="3.2" fill="none" opacity=".45"/><path d="M278 941.0 Q298 934.0 318 941.0" stroke="#b9cad5" stroke-width="3.2" fill="none" opacity=".45"/><path d="M278 948.2 Q298 941.2 318 948.2" stroke="#b9cad5" stroke-width="3.2" fill="none" opacity=".45"/><path d="M278 955.4 Q298 948.4 318 955.4" stroke="#b9cad5" stroke-width="3.2" fill="none" opacity=".45"/><path d="M278 962.6 Q298 955.6 318 962.6" stroke="#b9cad5" stroke-width="3.2" fill="none" opacity=".45"/><path d="M278 969.8 Q298 962.8 318 969.8" stroke="#b9cad5" stroke-width="3.2" fill="none" opacity=".45"/><path d="M278 977.0 Q298 970.0 318 977.0" stroke="#b9cad5" stroke-width="3.2" fill="none" opacity=".45"/><path d="M278 984.2 Q298 977.2 318 984.2" stroke="#b9cad5" stroke-width="3.2" fill="none" opacity=".45"/><path d="M278 991.4000000000001 Q298 984.4000000000001 318 991.4000000000001" stroke="#b9cad5" stroke-width="3.2" fill="none" opacity=".45"/><path d="M278 998.6 Q298 991.6 318 998.6" stroke="#b9cad5" stroke-width="3.2" fill="none" opacity=".45"/><path d="M278 1005.8 Q298 998.8 318 1005.8" stroke="#b9cad5" stroke-width="3.2" fill="none" opacity=".45"/><path d="M278 1013.0 Q298 1006.0 318 1013.0" stroke="#b9cad5" stroke-width="3.2" fill="none" opacity=".45"/><path d="M278 1020.2 Q298 1013.2 318 1020.2" stroke="#b9cad5" stroke-width="3.2" fill="none" opacity=".45"/><path d="M278 1027.4 Q298 1020.4000000000001 318 1027.4" stroke="#b9cad5" stroke-width="3.2" fill="none" opacity=".45"/><path d="M278 1034.6 Q298 1027.6 318 1034.6" stroke="#b9cad5" stroke-width="3.2" fill="none" opacity=".45"/><path d="M278 1041.8 Q298 1034.8 318 1041.8" stroke="#b9cad5" stroke-width="3.2" fill="none" opacity=".45"/><path d="M278 1049.0 Q298 1042.0 318 1049.0" stroke="#b9cad5" stroke-width="3.2" fill="none" opacity=".45"/><path d="M278 1056.2 Q298 1049.2 318 1056.2" stroke="#b9cad5" stroke-width="3.2" fill="none" opacity=".45"/><path d="M278 1063.4 Q298 1056.4 318 1063.4" stroke="#b9cad5" stroke-width="3.2" fill="none" opacity=".45"/><path d="M278 1070.6 Q298 1063.6 318 1070.6" stroke="#b9cad5" stroke-width="3.2" fill="none" opacity=".45"/><path d="M278 1077.8 Q298 1070.8 318 1077.8" stroke="#b9cad5" stroke-width="3.2" fill="none" opacity=".45"/><path d="M278 1085.0 Q298 1078.0 318 1085.0" stroke="#b9cad5" stroke-width="3.2" fill="none" opacity=".45"/><path d="M278 1092.2 Q298 1085.2 318 1092.2" stroke="#b9cad5" stroke-width="3.2" fill="none" opacity=".45"/><path d="M278 1099.4 Q298 1092.4 318 1099.4" stroke="#b9cad5" stroke-width="3.2" fill="none" opacity=".45"/><path d="M278 1106.6 Q298 1099.6 318 1106.6" stroke="#b9cad5" stroke-width="3.2" fill="none" opacity=".45"/><path d="M278 1113.8 Q298 1106.8 318 1113.8" stroke="#b9cad5" stroke-width="3.2" fill="none" opacity=".45"/><path d="M278 1121.0 Q298 1114.0 318 1121.0" stroke="#b9cad5" stroke-width="3.2" fill="none" opacity=".45"/><path d="M278 1128.2 Q298 1121.2 318 1128.2" stroke="#b9cad5" stroke-width="3.2" fill="none" opacity=".45"/><path d="M278 1135.4 Q298 1128.4 318 1135.4" stroke="#b9cad5" stroke-width="3.2" fill="none" opacity=".45"/><path d="M278 1142.6 Q298 1135.6 318 1142.6" stroke="#b9cad5" stroke-width="3.2" fill="none" opacity=".45"/><path d="M278 1149.8 Q298 1142.8 318 1149.8" stroke="#b9cad5" stroke-width="3.2" fill="none" opacity=".45"/><rect x="318" y="715" width="6" height="410" fill="#2b3741" opacity=".6"/><path d="M324 728.0 Q344 721.0 364 728.0" stroke="#b9cad5" stroke-width="3.2" fill="none" opacity=".45"/><path d="M324 735.2 Q344 728.2 364 735.2" stroke="#b9cad5" stroke-width="3.2" fill="none" opacity=".45"/><path d="M324 742.4 Q344 735.4 364 742.4" stroke="#b9cad5" stroke-width="3.2" fill="none" opacity=".45"/><path d="M324 749.6 Q344 742.6 364 749.6" stroke="#b9cad5" stroke-width="3.2" fill="none" opacity=".45"/><path d="M324 756.8 Q344 749.8 364 756.8" stroke="#b9cad5" stroke-width="3.2" fill="none" opacity=".45"/><path d="M324 764.0 Q344 757.0 364 764.0" stroke="#b9cad5" stroke-width="3.2" fill="none" opacity=".45"/><path d="M324 771.2 Q344 764.2 364 771.2" stroke="#b9cad5" stroke-width="3.2" fill="none" opacity=".45"/><path d="M324 778.4 Q344 771.4 364 778.4" stroke="#b9cad5" stroke-width="3.2" fill="none" opacity=".45"/><path d="M324 785.6 Q344 778.6 364 785.6" stroke="#b9cad5" stroke-width="3.2" fill="none" opacity=".45"/><path d="M324 792.8 Q344 785.8 364 792.8" stroke="#b9cad5" stroke-width="3.2" fill="none" opacity=".45"/><path d="M324 800.0 Q344 793.0 364 800.0" stroke="#b9cad5" stroke-width="3.2" fill="none" opacity=".45"/><path d="M324 807.2 Q344 800.2 364 807.2" stroke="#b9cad5" stroke-width="3.2" fill="none" opacity=".45"/><path d="M324 814.4 Q344 807.4 364 814.4" stroke="#b9cad5" stroke-width="3.2" fill="none" opacity=".45"/><path d="M324 821.6 Q344 814.6 364 821.6" stroke="#b9cad5" stroke-width="3.2" fill="none" opacity=".45"/><path d="M324 828.8 Q344 821.8 364 828.8" stroke="#b9cad5" stroke-width="3.2" fill="none" opacity=".45"/><path d="M324 836.0 Q344 829.0 364 836.0" stroke="#b9cad5" stroke-width="3.2" fill="none" opacity=".45"/><path d="M324 843.2 Q344 836.2 364 843.2" stroke="#b9cad5" stroke-width="3.2" fill="none" opacity=".45"/><path d="M324 850.4 Q344 843.4 364 850.4" stroke="#b9cad5" stroke-width="3.2" fill="none" opacity=".45"/><path d="M324 857.6 Q344 850.6 364 857.6" stroke="#b9cad5" stroke-width="3.2" fill="none" opacity=".45"/><path d="M324 864.8 Q344 857.8 364 864.8" stroke="#b9cad5" stroke-width="3.2" fill="none" opacity=".45"/><path d="M324 872.0 Q344 865.0 364 872.0" stroke="#b9cad5" stroke-width="3.2" fill="none" opacity=".45"/><path d="M324 879.2 Q344 872.2 364 879.2" stroke="#b9cad5" stroke-width="3.2" fill="none" opacity=".45"/><path d="M324 886.4 Q344 879.4 364 886.4" stroke="#b9cad5" stroke-width="3.2" fill="none" opacity=".45"/><path d="M324 893.6 Q344 886.6 364 893.6" stroke="#b9cad5" stroke-width="3.2" fill="none" opacity=".45"/><path d="M324 900.8 Q344 893.8 364 900.8" stroke="#b9cad5" stroke-width="3.2" fill="none" opacity=".45"/><path d="M324 908.0 Q344 901.0 364 908.0" stroke="#b9cad5" stroke-width="3.2" fill="none" opacity=".45"/><path d="M324 915.2 Q344 908.2 364 915.2" stroke="#b9cad5" stroke-width="3.2" fill="none" opacity=".45"/><path d="M324 922.4 Q344 915.4 364 922.4" stroke="#b9cad5" stroke-width="3.2" fill="none" opacity=".45"/><path d="M324 929.6 Q344 922.6 364 929.6" stroke="#b9cad5" stroke-width="3.2" fill="none" opacity=".45"/><path d="M324 936.8 Q344 929.8 364 936.8" stroke="#b9cad5" stroke-width="3.2" fill="none" opacity=".45"/><path d="M324 944.0 Q344 937.0 364 944.0" stroke="#b9cad5" stroke-width="3.2" fill="none" opacity=".45"/><path d="M324 951.2 Q344 944.2 364 951.2" stroke="#b9cad5" stroke-width="3.2" fill="none" opacity=".45"/><path d="M324 958.4 Q344 951.4 364 958.4" stroke="#b9cad5" stroke-width="3.2" fill="none" opacity=".45"/><path d="M324 965.6 Q344 958.6 364 965.6" stroke="#b9cad5" stroke-width="3.2" fill="none" opacity=".45"/><path d="M324 972.8 Q344 965.8 364 972.8" stroke="#b9cad5" stroke-width="3.2" fill="none" opacity=".45"/><path d="M324 980.0 Q344 973.0 364 980.0" stroke="#b9cad5" stroke-width="3.2" fill="none" opacity=".45"/><path d="M324 987.2 Q344 980.2 364 987.2" stroke="#b9cad5" stroke-width="3.2" fill="none" opacity=".45"/><path d="M324 994.4000000000001 Q344 987.4000000000001 364 994.4000000000001" stroke="#b9cad5" stroke-width="3.2" fill="none" opacity=".45"/><path d="M324 1001.6 Q344 994.6 364 1001.6" stroke="#b9cad5" stroke-width="3.2" fill="none" opacity=".45"/><path d="M324 1008.8 Q344 1001.8 364 1008.8" stroke="#b9cad5" stroke-width="3.2" fill="none" opacity=".45"/><path d="M324 1016.0 Q344 1009.0 364 1016.0" stroke="#b9cad5" stroke-width="3.2" fill="none" opacity=".45"/><path d="M324 1023.2 Q344 1016.2 364 1023.2" stroke="#b9cad5" stroke-width="3.2" fill="none" opacity=".45"/><path d="M324 1030.4 Q344 1023.4000000000001 364 1030.4" stroke="#b9cad5" stroke-width="3.2" fill="none" opacity=".45"/><path d="M324 1037.6 Q344 1030.6 364 1037.6" stroke="#b9cad5" stroke-width="3.2" fill="none" opacity=".45"/><path d="M324 1044.8 Q344 1037.8 364 1044.8" stroke="#b9cad5" stroke-width="3.2" fill="none" opacity=".45"/><path d="M324 1052.0 Q344 1045.0 364 1052.0" stroke="#b9cad5" stroke-width="3.2" fill="none" opacity=".45"/><path d="M324 1059.2 Q344 1052.2 364 1059.2" stroke="#b9cad5" stroke-width="3.2" fill="none" opacity=".45"/><path d="M324 1066.4 Q344 1059.4 364 1066.4" stroke="#b9cad5" stroke-width="3.2" fill="none" opacity=".45"/><path d="M324 1073.6 Q344 1066.6 364 1073.6" stroke="#b9cad5" stroke-width="3.2" fill="none" opacity=".45"/><path d="M324 1080.8 Q344 1073.8 364 1080.8" stroke="#b9cad5" stroke-width="3.2" fill="none" opacity=".45"/><path d="M324 1088.0 Q344 1081.0 364 1088.0" stroke="#b9cad5" stroke-width="3.2" fill="none" opacity=".45"/><path d="M324 1095.2 Q344 1088.2 364 1095.2" stroke="#b9cad5" stroke-width="3.2" fill="none" opacity=".45"/><path d="M324 1102.4 Q344 1095.4 364 1102.4" stroke="#b9cad5" stroke-width="3.2" fill="none" opacity=".45"/><path d="M324 1109.6 Q344 1102.6 364 1109.6" stroke="#b9cad5" stroke-width="3.2" fill="none" opacity=".45"/><path d="M324 1116.8 Q344 1109.8 364 1116.8" stroke="#b9cad5" stroke-width="3.2" fill="none" opacity=".45"/><path d="M324 1124.0 Q344 1117.0 364 1124.0" stroke="#b9cad5" stroke-width="3.2" fill="none" opacity=".45"/><path d="M324 1131.2 Q344 1124.2 364 1131.2" stroke="#b9cad5" stroke-width="3.2" fill="none" opacity=".45"/><path d="M324 1138.4 Q344 1131.4 364 1138.4" stroke="#b9cad5" stroke-width="3.2" fill="none" opacity=".45"/><path d="M324 1145.6 Q344 1138.6 364 1145.6" stroke="#b9cad5" stroke-width="3.2" fill="none" opacity=".45"/><path d="M324 1152.8 Q344 1145.8 364 1152.8" stroke="#b9cad5" stroke-width="3.2" fill="none" opacity=".45"/><rect x="364" y="715" width="6" height="410" fill="#2b3741" opacity=".6"/><path d="M370 725.0 Q390 718.0 410 725.0" stroke="#b9cad5" stroke-width="3.2" fill="none" opacity=".45"/><path d="M370 732.2 Q390 725.2 410 732.2" stroke="#b9cad5" stroke-width="3.2" fill="none" opacity=".45"/><path d="M370 739.4 Q390 732.4 410 739.4" stroke="#b9cad5" stroke-width="3.2" fill="none" opacity=".45"/><path d="M370 746.6 Q390 739.6 410 746.6" stroke="#b9cad5" stroke-width="3.2" fill="none" opacity=".45"/><path d="M370 753.8 Q390 746.8 410 753.8" stroke="#b9cad5" stroke-width="3.2" fill="none" opacity=".45"/><path d="M370 761.0 Q390 754.0 410 761.0" stroke="#b9cad5" stroke-width="3.2" fill="none" opacity=".45"/><path d="M370 768.2 Q390 761.2 410 768.2" stroke="#b9cad5" stroke-width="3.2" fill="none" opacity=".45"/><path d="M370 775.4 Q390 768.4 410 775.4" stroke="#b9cad5" stroke-width="3.2" fill="none" opacity=".45"/><path d="M370 782.6 Q390 775.6 410 782.6" stroke="#b9cad5" stroke-width="3.2" fill="none" opacity=".45"/><path d="M370 789.8 Q390 782.8 410 789.8" stroke="#b9cad5" stroke-width="3.2" fill="none" opacity=".45"/><path d="M370 797.0 Q390 790.0 410 797.0" stroke="#b9cad5" stroke-width="3.2" fill="none" opacity=".45"/><path d="M370 804.2 Q390 797.2 410 804.2" stroke="#b9cad5" stroke-width="3.2" fill="none" opacity=".45"/><path d="M370 811.4 Q390 804.4 410 811.4" stroke="#b9cad5" stroke-width="3.2" fill="none" opacity=".45"/><path d="M370 818.6 Q390 811.6 410 818.6" stroke="#b9cad5" stroke-width="3.2" fill="none" opacity=".45"/><path d="M370 825.8 Q390 818.8 410 825.8" stroke="#b9cad5" stroke-width="3.2" fill="none" opacity=".45"/><path d="M370 833.0 Q390 826.0 410 833.0" stroke="#b9cad5" stroke-width="3.2" fill="none" opacity=".45"/><path d="M370 840.2 Q390 833.2 410 840.2" stroke="#b9cad5" stroke-width="3.2" fill="none" opacity=".45"/><path d="M370 847.4 Q390 840.4 410 847.4" stroke="#b9cad5" stroke-width="3.2" fill="none" opacity=".45"/><path d="M370 854.6 Q390 847.6 410 854.6" stroke="#b9cad5" stroke-width="3.2" fill="none" opacity=".45"/><path d="M370 861.8 Q390 854.8 410 861.8" stroke="#b9cad5" stroke-width="3.2" fill="none" opacity=".45"/><path d="M370 869.0 Q390 862.0 410 869.0" stroke="#b9cad5" stroke-width="3.2" fill="none" opacity=".45"/><path d="M370 876.2 Q390 869.2 410 876.2" stroke="#b9cad5" stroke-width="3.2" fill="none" opacity=".45"/><path d="M370 883.4 Q390 876.4 410 883.4" stroke="#b9cad5" stroke-width="3.2" fill="none" opacity=".45"/><path d="M370 890.6 Q390 883.6 410 890.6" stroke="#b9cad5" stroke-width="3.2" fill="none" opacity=".45"/><path d="M370 897.8 Q390 890.8 410 897.8" stroke="#b9cad5" stroke-width="3.2" fill="none" opacity=".45"/><path d="M370 905.0 Q390 898.0 410 905.0" stroke="#b9cad5" stroke-width="3.2" fill="none" opacity=".45"/><path d="M370 912.2 Q390 905.2 410 912.2" stroke="#b9cad5" stroke-width="3.2" fill="none" opacity=".45"/><path d="M370 919.4 Q390 912.4 410 919.4" stroke="#b9cad5" stroke-width="3.2" fill="none" opacity=".45"/><path d="M370 926.6 Q390 919.6 410 926.6" stroke="#b9cad5" stroke-width="3.2" fill="none" opacity=".45"/><path d="M370 933.8 Q390 926.8 410 933.8" stroke="#b9cad5" stroke-width="3.2" fill="none" opacity=".45"/><path d="M370 941.0 Q390 934.0 410 941.0" stroke="#b9cad5" stroke-width="3.2" fill="none" opacity=".45"/><path d="M370 948.2 Q390 941.2 410 948.2" stroke="#b9cad5" stroke-width="3.2" fill="none" opacity=".45"/><path d="M370 955.4 Q390 948.4 410 955.4" stroke="#b9cad5" stroke-width="3.2" fill="none" opacity=".45"/><path d="M370 962.6 Q390 955.6 410 962.6" stroke="#b9cad5" stroke-width="3.2" fill="none" opacity=".45"/><path d="M370 969.8 Q390 962.8 410 969.8" stroke="#b9cad5" stroke-width="3.2" fill="none" opacity=".45"/><path d="M370 977.0 Q390 970.0 410 977.0" stroke="#b9cad5" stroke-width="3.2" fill="none" opacity=".45"/><path d="M370 984.2 Q390 977.2 410 984.2" stroke="#b9cad5" stroke-width="3.2" fill="none" opacity=".45"/><path d="M370 991.4000000000001 Q390 984.4000000000001 410 991.4000000000001" stroke="#b9cad5" stroke-width="3.2" fill="none" opacity=".45"/><path d="M370 998.6 Q390 991.6 410 998.6" stroke="#b9cad5" stroke-width="3.2" fill="none" opacity=".45"/><path d="M370 1005.8 Q390 998.8 410 1005.8" stroke="#b9cad5" stroke-width="3.2" fill="none" opacity=".45"/><path d="M370 1013.0 Q390 1006.0 410 1013.0" stroke="#b9cad5" stroke-width="3.2" fill="none" opacity=".45"/><path d="M370 1020.2 Q390 1013.2 410 1020.2" stroke="#b9cad5" stroke-width="3.2" fill="none" opacity=".45"/><path d="M370 1027.4 Q390 1020.4000000000001 410 1027.4" stroke="#b9cad5" stroke-width="3.2" fill="none" opacity=".45"/><path d="M370 1034.6 Q390 1027.6 410 1034.6" stroke="#b9cad5" stroke-width="3.2" fill="none" opacity=".45"/><path d="M370 1041.8 Q390 1034.8 410 1041.8" stroke="#b9cad5" stroke-width="3.2" fill="none" opacity=".45"/><path d="M370 1049.0 Q390 1042.0 410 1049.0" stroke="#b9cad5" stroke-width="3.2" fill="none" opacity=".45"/><path d="M370 1056.2 Q390 1049.2 410 1056.2" stroke="#b9cad5" stroke-width="3.2" fill="none" opacity=".45"/><path d="M370 1063.4 Q390 1056.4 410 1063.4" stroke="#b9cad5" stroke-width="3.2" fill="none" opacity=".45"/><path d="M370 1070.6 Q390 1063.6 410 1070.6" stroke="#b9cad5" stroke-width="3.2" fill="none" opacity=".45"/><path d="M370 1077.8 Q390 1070.8 410 1077.8" stroke="#b9cad5" stroke-width="3.2" fill="none" opacity=".45"/><path d="M370 1085.0 Q390 1078.0 410 1085.0" stroke="#b9cad5" stroke-width="3.2" fill="none" opacity=".45"/><path d="M370 1092.2 Q390 1085.2 410 1092.2" stroke="#b9cad5" stroke-width="3.2" fill="none" opacity=".45"/><path d="M370 1099.4 Q390 1092.4 410 1099.4" stroke="#b9cad5" stroke-width="3.2" fill="none" opacity=".45"/><path d="M370 1106.6 Q390 1099.6 410 1106.6" stroke="#b9cad5" stroke-width="3.2" fill="none" opacity=".45"/><path d="M370 1113.8 Q390 1106.8 410 1113.8" stroke="#b9cad5" stroke-width="3.2" fill="none" opacity=".45"/><path d="M370 1121.0 Q390 1114.0 410 1121.0" stroke="#b9cad5" stroke-width="3.2" fill="none" opacity=".45"/><path d="M370 1128.2 Q390 1121.2 410 1128.2" stroke="#b9cad5" stroke-width="3.2" fill="none" opacity=".45"/><path d="M370 1135.4 Q390 1128.4 410 1135.4" stroke="#b9cad5" stroke-width="3.2" fill="none" opacity=".45"/><path d="M370 1142.6 Q390 1135.6 410 1142.6" stroke="#b9cad5" stroke-width="3.2" fill="none" opacity=".45"/><path d="M370 1149.8 Q390 1142.8 410 1149.8" stroke="#b9cad5" stroke-width="3.2" fill="none" opacity=".45"/><rect x="410" y="715" width="6" height="410" fill="#2b3741" opacity=".6"/><path d="M416 728.0 Q436 721.0 456 728.0" stroke="#b9cad5" stroke-width="3.2" fill="none" opacity=".45"/><path d="M416 735.2 Q436 728.2 456 735.2" stroke="#b9cad5" stroke-width="3.2" fill="none" opacity=".45"/><path d="M416 742.4 Q436 735.4 456 742.4" stroke="#b9cad5" stroke-width="3.2" fill="none" opacity=".45"/><path d="M416 749.6 Q436 742.6 456 749.6" stroke="#b9cad5" stroke-width="3.2" fill="none" opacity=".45"/><path d="M416 756.8 Q436 749.8 456 756.8" stroke="#b9cad5" stroke-width="3.2" fill="none" opacity=".45"/><path d="M416 764.0 Q436 757.0 456 764.0" stroke="#b9cad5" stroke-width="3.2" fill="none" opacity=".45"/><path d="M416 771.2 Q436 764.2 456 771.2" stroke="#b9cad5" stroke-width="3.2" fill="none" opacity=".45"/><path d="M416 778.4 Q436 771.4 456 778.4" stroke="#b9cad5" stroke-width="3.2" fill="none" opacity=".45"/><path d="M416 785.6 Q436 778.6 456 785.6" stroke="#b9cad5" stroke-width="3.2" fill="none" opacity=".45"/><path d="M416 792.8 Q436 785.8 456 792.8" stroke="#b9cad5" stroke-width="3.2" fill="none" opacity=".45"/><path d="M416 800.0 Q436 793.0 456 800.0" stroke="#b9cad5" stroke-width="3.2" fill="none" opacity=".45"/><path d="M416 807.2 Q436 800.2 456 807.2" stroke="#b9cad5" stroke-width="3.2" fill="none" opacity=".45"/><path d="M416 814.4 Q436 807.4 456 814.4" stroke="#b9cad5" stroke-width="3.2" fill="none" opacity=".45"/><path d="M416 821.6 Q436 814.6 456 821.6" stroke="#b9cad5" stroke-width="3.2" fill="none" opacity=".45"/><path d="M416 828.8 Q436 821.8 456 828.8" stroke="#b9cad5" stroke-width="3.2" fill="none" opacity=".45"/><path d="M416 836.0 Q436 829.0 456 836.0" stroke="#b9cad5" stroke-width="3.2" fill="none" opacity=".45"/><path d="M416 843.2 Q436 836.2 456 843.2" stroke="#b9cad5" stroke-width="3.2" fill="none" opacity=".45"/><path d="M416 850.4 Q436 843.4 456 850.4" stroke="#b9cad5" stroke-width="3.2" fill="none" opacity=".45"/><path d="M416 857.6 Q436 850.6 456 857.6" stroke="#b9cad5" stroke-width="3.2" fill="none" opacity=".45"/><path d="M416 864.8 Q436 857.8 456 864.8" stroke="#b9cad5" stroke-width="3.2" fill="none" opacity=".45"/><path d="M416 872.0 Q436 865.0 456 872.0" stroke="#b9cad5" stroke-width="3.2" fill="none" opacity=".45"/><path d="M416 879.2 Q436 872.2 456 879.2" stroke="#b9cad5" stroke-width="3.2" fill="none" opacity=".45"/><path d="M416 886.4 Q436 879.4 456 886.4" stroke="#b9cad5" stroke-width="3.2" fill="none" opacity=".45"/><path d="M416 893.6 Q436 886.6 456 893.6" stroke="#b9cad5" stroke-width="3.2" fill="none" opacity=".45"/><path d="M416 900.8 Q436 893.8 456 900.8" stroke="#b9cad5" stroke-width="3.2" fill="none" opacity=".45"/><path d="M416 908.0 Q436 901.0 456 908.0" stroke="#b9cad5" stroke-width="3.2" fill="none" opacity=".45"/><path d="M416 915.2 Q436 908.2 456 915.2" stroke="#b9cad5" stroke-width="3.2" fill="none" opacity=".45"/><path d="M416 922.4 Q436 915.4 456 922.4" stroke="#b9cad5" stroke-width="3.2" fill="none" opacity=".45"/><path d="M416 929.6 Q436 922.6 456 929.6" stroke="#b9cad5" stroke-width="3.2" fill="none" opacity=".45"/><path d="M416 936.8 Q436 929.8 456 936.8" stroke="#b9cad5" stroke-width="3.2" fill="none" opacity=".45"/><path d="M416 944.0 Q436 937.0 456 944.0" stroke="#b9cad5" stroke-width="3.2" fill="none" opacity=".45"/><path d="M416 951.2 Q436 944.2 456 951.2" stroke="#b9cad5" stroke-width="3.2" fill="none" opacity=".45"/><path d="M416 958.4 Q436 951.4 456 958.4" stroke="#b9cad5" stroke-width="3.2" fill="none" opacity=".45"/><path d="M416 965.6 Q436 958.6 456 965.6" stroke="#b9cad5" stroke-width="3.2" fill="none" opacity=".45"/><path d="M416 972.8 Q436 965.8 456 972.8" stroke="#b9cad5" stroke-width="3.2" fill="none" opacity=".45"/><path d="M416 980.0 Q436 973.0 456 980.0" stroke="#b9cad5" stroke-width="3.2" fill="none" opacity=".45"/><path d="M416 987.2 Q436 980.2 456 987.2" stroke="#b9cad5" stroke-width="3.2" fill="none" opacity=".45"/><path d="M416 994.4000000000001 Q436 987.4000000000001 456 994.4000000000001" stroke="#b9cad5" stroke-width="3.2" fill="none" opacity=".45"/><path d="M416 1001.6 Q436 994.6 456 1001.6" stroke="#b9cad5" stroke-width="3.2" fill="none" opacity=".45"/><path d="M416 1008.8 Q436 1001.8 456 1008.8" stroke="#b9cad5" stroke-width="3.2" fill="none" opacity=".45"/><path d="M416 1016.0 Q436 1009.0 456 1016.0" stroke="#b9cad5" stroke-width="3.2" fill="none" opacity=".45"/><path d="M416 1023.2 Q436 1016.2 456 1023.2" stroke="#b9cad5" stroke-width="3.2" fill="none" opacity=".45"/><path d="M416 1030.4 Q436 1023.4000000000001 456 1030.4" stroke="#b9cad5" stroke-width="3.2" fill="none" opacity=".45"/><path d="M416 1037.6 Q436 1030.6 456 1037.6" stroke="#b9cad5" stroke-width="3.2" fill="none" opacity=".45"/><path d="M416 1044.8 Q436 1037.8 456 1044.8" stroke="#b9cad5" stroke-width="3.2" fill="none" opacity=".45"/><path d="M416 1052.0 Q436 1045.0 456 1052.0" stroke="#b9cad5" stroke-width="3.2" fill="none" opacity=".45"/><path d="M416 1059.2 Q436 1052.2 456 1059.2" stroke="#b9cad5" stroke-width="3.2" fill="none" opacity=".45"/><path d="M416 1066.4 Q436 1059.4 456 1066.4" stroke="#b9cad5" stroke-width="3.2" fill="none" opacity=".45"/><path d="M416 1073.6 Q436 1066.6 456 1073.6" stroke="#b9cad5" stroke-width="3.2" fill="none" opacity=".45"/><path d="M416 1080.8 Q436 1073.8 456 1080.8" stroke="#b9cad5" stroke-width="3.2" fill="none" opacity=".45"/><path d="M416 1088.0 Q436 1081.0 456 1088.0" stroke="#b9cad5" stroke-width="3.2" fill="none" opacity=".45"/><path d="M416 1095.2 Q436 1088.2 456 1095.2" stroke="#b9cad5" stroke-width="3.2" fill="none" opacity=".45"/><path d="M416 1102.4 Q436 1095.4 456 1102.4" stroke="#b9cad5" stroke-width="3.2" fill="none" opacity=".45"/><path d="M416 1109.6 Q436 1102.6 456 1109.6" stroke="#b9cad5" stroke-width="3.2" fill="none" opacity=".45"/><path d="M416 1116.8 Q436 1109.8 456 1116.8" stroke="#b9cad5" stroke-width="3.2" fill="none" opacity=".45"/><path d="M416 1124.0 Q436 1117.0 456 1124.0" stroke="#b9cad5" stroke-width="3.2" fill="none" opacity=".45"/><path d="M416 1131.2 Q436 1124.2 456 1131.2" stroke="#b9cad5" stroke-width="3.2" fill="none" opacity=".45"/><path d="M416 1138.4 Q436 1131.4 456 1138.4" stroke="#b9cad5" stroke-width="3.2" fill="none" opacity=".45"/><path d="M416 1145.6 Q436 1138.6 456 1145.6" stroke="#b9cad5" stroke-width="3.2" fill="none" opacity=".45"/><path d="M416 1152.8 Q436 1145.8 456 1152.8" stroke="#b9cad5" stroke-width="3.2" fill="none" opacity=".45"/><rect x="456" y="715" width="6" height="410" fill="#2b3741" opacity=".6"/><path d="M462 725.0 Q482 718.0 502 725.0" stroke="#b9cad5" stroke-width="3.2" fill="none" opacity=".45"/><path d="M462 732.2 Q482 725.2 502 732.2" stroke="#b9cad5" stroke-width="3.2" fill="none" opacity=".45"/><path d="M462 739.4 Q482 732.4 502 739.4" stroke="#b9cad5" stroke-width="3.2" fill="none" opacity=".45"/><path d="M462 746.6 Q482 739.6 502 746.6" stroke="#b9cad5" stroke-width="3.2" fill="none" opacity=".45"/><path d="M462 753.8 Q482 746.8 502 753.8" stroke="#b9cad5" stroke-width="3.2" fill="none" opacity=".45"/><path d="M462 761.0 Q482 754.0 502 761.0" stroke="#b9cad5" stroke-width="3.2" fill="none" opacity=".45"/><path d="M462 768.2 Q482 761.2 502 768.2" stroke="#b9cad5" stroke-width="3.2" fill="none" opacity=".45"/><path d="M462 775.4 Q482 768.4 502 775.4" stroke="#b9cad5" stroke-width="3.2" fill="none" opacity=".45"/><path d="M462 782.6 Q482 775.6 502 782.6" stroke="#b9cad5" stroke-width="3.2" fill="none" opacity=".45"/><path d="M462 789.8 Q482 782.8 502 789.8" stroke="#b9cad5" stroke-width="3.2" fill="none" opacity=".45"/><path d="M462 797.0 Q482 790.0 502 797.0" stroke="#b9cad5" stroke-width="3.2" fill="none" opacity=".45"/><path d="M462 804.2 Q482 797.2 502 804.2" stroke="#b9cad5" stroke-width="3.2" fill="none" opacity=".45"/><path d="M462 811.4 Q482 804.4 502 811.4" stroke="#b9cad5" stroke-width="3.2" fill="none" opacity=".45"/><path d="M462 818.6 Q482 811.6 502 818.6" stroke="#b9cad5" stroke-width="3.2" fill="none" opacity=".45"/><path d="M462 825.8 Q482 818.8 502 825.8" stroke="#b9cad5" stroke-width="3.2" fill="none" opacity=".45"/><path d="M462 833.0 Q482 826.0 502 833.0" stroke="#b9cad5" stroke-width="3.2" fill="none" opacity=".45"/><path d="M462 840.2 Q482 833.2 502 840.2" stroke="#b9cad5" stroke-width="3.2" fill="none" opacity=".45"/><path d="M462 847.4 Q482 840.4 502 847.4" stroke="#b9cad5" stroke-width="3.2" fill="none" opacity=".45"/><path d="M462 854.6 Q482 847.6 502 854.6" stroke="#b9cad5" stroke-width="3.2" fill="none" opacity=".45"/><path d="M462 861.8 Q482 854.8 502 861.8" stroke="#b9cad5" stroke-width="3.2" fill="none" opacity=".45"/><path d="M462 869.0 Q482 862.0 502 869.0" stroke="#b9cad5" stroke-width="3.2" fill="none" opacity=".45"/><path d="M462 876.2 Q482 869.2 502 876.2" stroke="#b9cad5" stroke-width="3.2" fill="none" opacity=".45"/><path d="M462 883.4 Q482 876.4 502 883.4" stroke="#b9cad5" stroke-width="3.2" fill="none" opacity=".45"/><path d="M462 890.6 Q482 883.6 502 890.6" stroke="#b9cad5" stroke-width="3.2" fill="none" opacity=".45"/><path d="M462 897.8 Q482 890.8 502 897.8" stroke="#b9cad5" stroke-width="3.2" fill="none" opacity=".45"/><path d="M462 905.0 Q482 898.0 502 905.0" stroke="#b9cad5" stroke-width="3.2" fill="none" opacity=".45"/><path d="M462 912.2 Q482 905.2 502 912.2" stroke="#b9cad5" stroke-width="3.2" fill="none" opacity=".45"/><path d="M462 919.4 Q482 912.4 502 919.4" stroke="#b9cad5" stroke-width="3.2" fill="none" opacity=".45"/><path d="M462 926.6 Q482 919.6 502 926.6" stroke="#b9cad5" stroke-width="3.2" fill="none" opacity=".45"/><path d="M462 933.8 Q482 926.8 502 933.8" stroke="#b9cad5" stroke-width="3.2" fill="none" opacity=".45"/><path d="M462 941.0 Q482 934.0 502 941.0" stroke="#b9cad5" stroke-width="3.2" fill="none" opacity=".45"/><path d="M462 948.2 Q482 941.2 502 948.2" stroke="#b9cad5" stroke-width="3.2" fill="none" opacity=".45"/><path d="M462 955.4 Q482 948.4 502 955.4" stroke="#b9cad5" stroke-width="3.2" fill="none" opacity=".45"/><path d="M462 962.6 Q482 955.6 502 962.6" stroke="#b9cad5" stroke-width="3.2" fill="none" opacity=".45"/><path d="M462 969.8 Q482 962.8 502 969.8" stroke="#b9cad5" stroke-width="3.2" fill="none" opacity=".45"/><path d="M462 977.0 Q482 970.0 502 977.0" stroke="#b9cad5" stroke-width="3.2" fill="none" opacity=".45"/><path d="M462 984.2 Q482 977.2 502 984.2" stroke="#b9cad5" stroke-width="3.2" fill="none" opacity=".45"/><path d="M462 991.4000000000001 Q482 984.4000000000001 502 991.4000000000001" stroke="#b9cad5" stroke-width="3.2" fill="none" opacity=".45"/><path d="M462 998.6 Q482 991.6 502 998.6" stroke="#b9cad5" stroke-width="3.2" fill="none" opacity=".45"/><path d="M462 1005.8 Q482 998.8 502 1005.8" stroke="#b9cad5" stroke-width="3.2" fill="none" opacity=".45"/><path d="M462 1013.0 Q482 1006.0 502 1013.0" stroke="#b9cad5" stroke-width="3.2" fill="none" opacity=".45"/><path d="M462 1020.2 Q482 1013.2 502 1020.2" stroke="#b9cad5" stroke-width="3.2" fill="none" opacity=".45"/><path d="M462 1027.4 Q482 1020.4000000000001 502 1027.4" stroke="#b9cad5" stroke-width="3.2" fill="none" opacity=".45"/><path d="M462 1034.6 Q482 1027.6 502 1034.6" stroke="#b9cad5" stroke-width="3.2" fill="none" opacity=".45"/><path d="M462 1041.8 Q482 1034.8 502 1041.8" stroke="#b9cad5" stroke-width="3.2" fill="none" opacity=".45"/><path d="M462 1049.0 Q482 1042.0 502 1049.0" stroke="#b9cad5" stroke-width="3.2" fill="none" opacity=".45"/><path d="M462 1056.2 Q482 1049.2 502 1056.2" stroke="#b9cad5" stroke-width="3.2" fill="none" opacity=".45"/><path d="M462 1063.4 Q482 1056.4 502 1063.4" stroke="#b9cad5" stroke-width="3.2" fill="none" opacity=".45"/><path d="M462 1070.6 Q482 1063.6 502 1070.6" stroke="#b9cad5" stroke-width="3.2" fill="none" opacity=".45"/><path d="M462 1077.8 Q482 1070.8 502 1077.8" stroke="#b9cad5" stroke-width="3.2" fill="none" opacity=".45"/><path d="M462 1085.0 Q482 1078.0 502 1085.0" stroke="#b9cad5" stroke-width="3.2" fill="none" opacity=".45"/><path d="M462 1092.2 Q482 1085.2 502 1092.2" stroke="#b9cad5" stroke-width="3.2" fill="none" opacity=".45"/><path d="M462 1099.4 Q482 1092.4 502 1099.4" stroke="#b9cad5" stroke-width="3.2" fill="none" opacity=".45"/><path d="M462 1106.6 Q482 1099.6 502 1106.6" stroke="#b9cad5" stroke-width="3.2" fill="none" opacity=".45"/><path d="M462 1113.8 Q482 1106.8 502 1113.8" stroke="#b9cad5" stroke-width="3.2" fill="none" opacity=".45"/><path d="M462 1121.0 Q482 1114.0 502 1121.0" stroke="#b9cad5" stroke-width="3.2" fill="none" opacity=".45"/><path d="M462 1128.2 Q482 1121.2 502 1128.2" stroke="#b9cad5" stroke-width="3.2" fill="none" opacity=".45"/><path d="M462 1135.4 Q482 1128.4 502 1135.4" stroke="#b9cad5" stroke-width="3.2" fill="none" opacity=".45"/><path d="M462 1142.6 Q482 1135.6 502 1142.6" stroke="#b9cad5" stroke-width="3.2" fill="none" opacity=".45"/><path d="M462 1149.8 Q482 1142.8 502 1149.8" stroke="#b9cad5" stroke-width="3.2" fill="none" opacity=".45"/><rect x="502" y="715" width="6" height="410" fill="#2b3741" opacity=".6"/><path d="M508 728.0 Q528 721.0 548 728.0" stroke="#b9cad5" stroke-width="3.2" fill="none" opacity=".45"/><path d="M508 735.2 Q528 728.2 548 735.2" stroke="#b9cad5" stroke-width="3.2" fill="none" opacity=".45"/><path d="M508 742.4 Q528 735.4 548 742.4" stroke="#b9cad5" stroke-width="3.2" fill="none" opacity=".45"/><path d="M508 749.6 Q528 742.6 548 749.6" stroke="#b9cad5" stroke-width="3.2" fill="none" opacity=".45"/><path d="M508 756.8 Q528 749.8 548 756.8" stroke="#b9cad5" stroke-width="3.2" fill="none" opacity=".45"/><path d="M508 764.0 Q528 757.0 548 764.0" stroke="#b9cad5" stroke-width="3.2" fill="none" opacity=".45"/><path d="M508 771.2 Q528 764.2 548 771.2" stroke="#b9cad5" stroke-width="3.2" fill="none" opacity=".45"/><path d="M508 778.4 Q528 771.4 548 778.4" stroke="#b9cad5" stroke-width="3.2" fill="none" opacity=".45"/><path d="M508 785.6 Q528 778.6 548 785.6" stroke="#b9cad5" stroke-width="3.2" fill="none" opacity=".45"/><path d="M508 792.8 Q528 785.8 548 792.8" stroke="#b9cad5" stroke-width="3.2" fill="none" opacity=".45"/><path d="M508 800.0 Q528 793.0 548 800.0" stroke="#b9cad5" stroke-width="3.2" fill="none" opacity=".45"/><path d="M508 807.2 Q528 800.2 548 807.2" stroke="#b9cad5" stroke-width="3.2" fill="none" opacity=".45"/><path d="M508 814.4 Q528 807.4 548 814.4" stroke="#b9cad5" stroke-width="3.2" fill="none" opacity=".45"/><path d="M508 821.6 Q528 814.6 548 821.6" stroke="#b9cad5" stroke-width="3.2" fill="none" opacity=".45"/><path d="M508 828.8 Q528 821.8 548 828.8" stroke="#b9cad5" stroke-width="3.2" fill="none" opacity=".45"/><path d="M508 836.0 Q528 829.0 548 836.0" stroke="#b9cad5" stroke-width="3.2" fill="none" opacity=".45"/><path d="M508 843.2 Q528 836.2 548 843.2" stroke="#b9cad5" stroke-width="3.2" fill="none" opacity=".45"/><path d="M508 850.4 Q528 843.4 548 850.4" stroke="#b9cad5" stroke-width="3.2" fill="none" opacity=".45"/><path d="M508 857.6 Q528 850.6 548 857.6" stroke="#b9cad5" stroke-width="3.2" fill="none" opacity=".45"/><path d="M508 864.8 Q528 857.8 548 864.8" stroke="#b9cad5" stroke-width="3.2" fill="none" opacity=".45"/><path d="M508 872.0 Q528 865.0 548 872.0" stroke="#b9cad5" stroke-width="3.2" fill="none" opacity=".45"/><path d="M508 879.2 Q528 872.2 548 879.2" stroke="#b9cad5" stroke-width="3.2" fill="none" opacity=".45"/><path d="M508 886.4 Q528 879.4 548 886.4" stroke="#b9cad5" stroke-width="3.2" fill="none" opacity=".45"/><path d="M508 893.6 Q528 886.6 548 893.6" stroke="#b9cad5" stroke-width="3.2" fill="none" opacity=".45"/><path d="M508 900.8 Q528 893.8 548 900.8" stroke="#b9cad5" stroke-width="3.2" fill="none" opacity=".45"/><path d="M508 908.0 Q528 901.0 548 908.0" stroke="#b9cad5" stroke-width="3.2" fill="none" opacity=".45"/><path d="M508 915.2 Q528 908.2 548 915.2" stroke="#b9cad5" stroke-width="3.2" fill="none" opacity=".45"/><path d="M508 922.4 Q528 915.4 548 922.4" stroke="#b9cad5" stroke-width="3.2" fill="none" opacity=".45"/><path d="M508 929.6 Q528 922.6 548 929.6" stroke="#b9cad5" stroke-width="3.2" fill="none" opacity=".45"/><path d="M508 936.8 Q528 929.8 548 936.8" stroke="#b9cad5" stroke-width="3.2" fill="none" opacity=".45"/><path d="M508 944.0 Q528 937.0 548 944.0" stroke="#b9cad5" stroke-width="3.2" fill="none" opacity=".45"/><path d="M508 951.2 Q528 944.2 548 951.2" stroke="#b9cad5" stroke-width="3.2" fill="none" opacity=".45"/><path d="M508 958.4 Q528 951.4 548 958.4" stroke="#b9cad5" stroke-width="3.2" fill="none" opacity=".45"/><path d="M508 965.6 Q528 958.6 548 965.6" stroke="#b9cad5" stroke-width="3.2" fill="none" opacity=".45"/><path d="M508 972.8 Q528 965.8 548 972.8" stroke="#b9cad5" stroke-width="3.2" fill="none" opacity=".45"/><path d="M508 980.0 Q528 973.0 548 980.0" stroke="#b9cad5" stroke-width="3.2" fill="none" opacity=".45"/><path d="M508 987.2 Q528 980.2 548 987.2" stroke="#b9cad5" stroke-width="3.2" fill="none" opacity=".45"/><path d="M508 994.4000000000001 Q528 987.4000000000001 548 994.4000000000001" stroke="#b9cad5" stroke-width="3.2" fill="none" opacity=".45"/><path d="M508 1001.6 Q528 994.6 548 1001.6" stroke="#b9cad5" stroke-width="3.2" fill="none" opacity=".45"/><path d="M508 1008.8 Q528 1001.8 548 1008.8" stroke="#b9cad5" stroke-width="3.2" fill="none" opacity=".45"/><path d="M508 1016.0 Q528 1009.0 548 1016.0" stroke="#b9cad5" stroke-width="3.2" fill="none" opacity=".45"/><path d="M508 1023.2 Q528 1016.2 548 1023.2" stroke="#b9cad5" stroke-width="3.2" fill="none" opacity=".45"/><path d="M508 1030.4 Q528 1023.4000000000001 548 1030.4" stroke="#b9cad5" stroke-width="3.2" fill="none" opacity=".45"/><path d="M508 1037.6 Q528 1030.6 548 1037.6" stroke="#b9cad5" stroke-width="3.2" fill="none" opacity=".45"/><path d="M508 1044.8 Q528 1037.8 548 1044.8" stroke="#b9cad5" stroke-width="3.2" fill="none" opacity=".45"/><path d="M508 1052.0 Q528 1045.0 548 1052.0" stroke="#b9cad5" stroke-width="3.2" fill="none" opacity=".45"/><path d="M508 1059.2 Q528 1052.2 548 1059.2" stroke="#b9cad5" stroke-width="3.2" fill="none" opacity=".45"/><path d="M508 1066.4 Q528 1059.4 548 1066.4" stroke="#b9cad5" stroke-width="3.2" fill="none" opacity=".45"/><path d="M508 1073.6 Q528 1066.6 548 1073.6" stroke="#b9cad5" stroke-width="3.2" fill="none" opacity=".45"/><path d="M508 1080.8 Q528 1073.8 548 1080.8" stroke="#b9cad5" stroke-width="3.2" fill="none" opacity=".45"/><path d="M508 1088.0 Q528 1081.0 548 1088.0" stroke="#b9cad5" stroke-width="3.2" fill="none" opacity=".45"/><path d="M508 1095.2 Q528 1088.2 548 1095.2" stroke="#b9cad5" stroke-width="3.2" fill="none" opacity=".45"/><path d="M508 1102.4 Q528 1095.4 548 1102.4" stroke="#b9cad5" stroke-width="3.2" fill="none" opacity=".45"/><path d="M508 1109.6 Q528 1102.6 548 1109.6" stroke="#b9cad5" stroke-width="3.2" fill="none" opacity=".45"/><path d="M508 1116.8 Q528 1109.8 548 1116.8" stroke="#b9cad5" stroke-width="3.2" fill="none" opacity=".45"/><path d="M508 1124.0 Q528 1117.0 548 1124.0" stroke="#b9cad5" stroke-width="3.2" fill="none" opacity=".45"/><path d="M508 1131.2 Q528 1124.2 548 1131.2" stroke="#b9cad5" stroke-width="3.2" fill="none" opacity=".45"/><path d="M508 1138.4 Q528 1131.4 548 1138.4" stroke="#b9cad5" stroke-width="3.2" fill="none" opacity=".45"/><path d="M508 1145.6 Q528 1138.6 548 1145.6" stroke="#b9cad5" stroke-width="3.2" fill="none" opacity=".45"/><path d="M508 1152.8 Q528 1145.8 548 1152.8" stroke="#b9cad5" stroke-width="3.2" fill="none" opacity=".45"/><rect x="548" y="715" width="6" height="410" fill="#2b3741" opacity=".6"/><path d="M554 725.0 Q574 718.0 594 725.0" stroke="#b9cad5" stroke-width="3.2" fill="none" opacity=".45"/><path d="M554 732.2 Q574 725.2 594 732.2" stroke="#b9cad5" stroke-width="3.2" fill="none" opacity=".45"/><path d="M554 739.4 Q574 732.4 594 739.4" stroke="#b9cad5" stroke-width="3.2" fill="none" opacity=".45"/><path d="M554 746.6 Q574 739.6 594 746.6" stroke="#b9cad5" stroke-width="3.2" fill="none" opacity=".45"/><path d="M554 753.8 Q574 746.8 594 753.8" stroke="#b9cad5" stroke-width="3.2" fill="none" opacity=".45"/><path d="M554 761.0 Q574 754.0 594 761.0" stroke="#b9cad5" stroke-width="3.2" fill="none" opacity=".45"/><path d="M554 768.2 Q574 761.2 594 768.2" stroke="#b9cad5" stroke-width="3.2" fill="none" opacity=".45"/><path d="M554 775.4 Q574 768.4 594 775.4" stroke="#b9cad5" stroke-width="3.2" fill="none" opacity=".45"/><path d="M554 782.6 Q574 775.6 594 782.6" stroke="#b9cad5" stroke-width="3.2" fill="none" opacity=".45"/><path d="M554 789.8 Q574 782.8 594 789.8" stroke="#b9cad5" stroke-width="3.2" fill="none" opacity=".45"/><path d="M554 797.0 Q574 790.0 594 797.0" stroke="#b9cad5" stroke-width="3.2" fill="none" opacity=".45"/><path d="M554 804.2 Q574 797.2 594 804.2" stroke="#b9cad5" stroke-width="3.2" fill="none" opacity=".45"/><path d="M554 811.4 Q574 804.4 594 811.4" stroke="#b9cad5" stroke-width="3.2" fill="none" opacity=".45"/><path d="M554 818.6 Q574 811.6 594 818.6" stroke="#b9cad5" stroke-width="3.2" fill="none" opacity=".45"/><path d="M554 825.8 Q574 818.8 594 825.8" stroke="#b9cad5" stroke-width="3.2" fill="none" opacity=".45"/><path d="M554 833.0 Q574 826.0 594 833.0" stroke="#b9cad5" stroke-width="3.2" fill="none" opacity=".45"/><path d="M554 840.2 Q574 833.2 594 840.2" stroke="#b9cad5" stroke-width="3.2" fill="none" opacity=".45"/><path d="M554 847.4 Q574 840.4 594 847.4" stroke="#b9cad5" stroke-width="3.2" fill="none" opacity=".45"/><path d="M554 854.6 Q574 847.6 594 854.6" stroke="#b9cad5" stroke-width="3.2" fill="none" opacity=".45"/><path d="M554 861.8 Q574 854.8 594 861.8" stroke="#b9cad5" stroke-width="3.2" fill="none" opacity=".45"/><path d="M554 869.0 Q574 862.0 594 869.0" stroke="#b9cad5" stroke-width="3.2" fill="none" opacity=".45"/><path d="M554 876.2 Q574 869.2 594 876.2" stroke="#b9cad5" stroke-width="3.2" fill="none" opacity=".45"/><path d="M554 883.4 Q574 876.4 594 883.4" stroke="#b9cad5" stroke-width="3.2" fill="none" opacity=".45"/><path d="M554 890.6 Q574 883.6 594 890.6" stroke="#b9cad5" stroke-width="3.2" fill="none" opacity=".45"/><path d="M554 897.8 Q574 890.8 594 897.8" stroke="#b9cad5" stroke-width="3.2" fill="none" opacity=".45"/><path d="M554 905.0 Q574 898.0 594 905.0" stroke="#b9cad5" stroke-width="3.2" fill="none" opacity=".45"/><path d="M554 912.2 Q574 905.2 594 912.2" stroke="#b9cad5" stroke-width="3.2" fill="none" opacity=".45"/><path d="M554 919.4 Q574 912.4 594 919.4" stroke="#b9cad5" stroke-width="3.2" fill="none" opacity=".45"/><path d="M554 926.6 Q574 919.6 594 926.6" stroke="#b9cad5" stroke-width="3.2" fill="none" opacity=".45"/><path d="M554 933.8 Q574 926.8 594 933.8" stroke="#b9cad5" stroke-width="3.2" fill="none" opacity=".45"/><path d="M554 941.0 Q574 934.0 594 941.0" stroke="#b9cad5" stroke-width="3.2" fill="none" opacity=".45"/><path d="M554 948.2 Q574 941.2 594 948.2" stroke="#b9cad5" stroke-width="3.2" fill="none" opacity=".45"/><path d="M554 955.4 Q574 948.4 594 955.4" stroke="#b9cad5" stroke-width="3.2" fill="none" opacity=".45"/><path d="M554 962.6 Q574 955.6 594 962.6" stroke="#b9cad5" stroke-width="3.2" fill="none" opacity=".45"/><path d="M554 969.8 Q574 962.8 594 969.8" stroke="#b9cad5" stroke-width="3.2" fill="none" opacity=".45"/><path d="M554 977.0 Q574 970.0 594 977.0" stroke="#b9cad5" stroke-width="3.2" fill="none" opacity=".45"/><path d="M554 984.2 Q574 977.2 594 984.2" stroke="#b9cad5" stroke-width="3.2" fill="none" opacity=".45"/><path d="M554 991.4000000000001 Q574 984.4000000000001 594 991.4000000000001" stroke="#b9cad5" stroke-width="3.2" fill="none" opacity=".45"/><path d="M554 998.6 Q574 991.6 594 998.6" stroke="#b9cad5" stroke-width="3.2" fill="none" opacity=".45"/><path d="M554 1005.8 Q574 998.8 594 1005.8" stroke="#b9cad5" stroke-width="3.2" fill="none" opacity=".45"/><path d="M554 1013.0 Q574 1006.0 594 1013.0" stroke="#b9cad5" stroke-width="3.2" fill="none" opacity=".45"/><path d="M554 1020.2 Q574 1013.2 594 1020.2" stroke="#b9cad5" stroke-width="3.2" fill="none" opacity=".45"/><path d="M554 1027.4 Q574 1020.4000000000001 594 1027.4" stroke="#b9cad5" stroke-width="3.2" fill="none" opacity=".45"/><path d="M554 1034.6 Q574 1027.6 594 1034.6" stroke="#b9cad5" stroke-width="3.2" fill="none" opacity=".45"/><path d="M554 1041.8 Q574 1034.8 594 1041.8" stroke="#b9cad5" stroke-width="3.2" fill="none" opacity=".45"/><path d="M554 1049.0 Q574 1042.0 594 1049.0" stroke="#b9cad5" stroke-width="3.2" fill="none" opacity=".45"/><path d="M554 1056.2 Q574 1049.2 594 1056.2" stroke="#b9cad5" stroke-width="3.2" fill="none" opacity=".45"/><path d="M554 1063.4 Q574 1056.4 594 1063.4" stroke="#b9cad5" stroke-width="3.2" fill="none" opacity=".45"/><path d="M554 1070.6 Q574 1063.6 594 1070.6" stroke="#b9cad5" stroke-width="3.2" fill="none" opacity=".45"/><path d="M554 1077.8 Q574 1070.8 594 1077.8" stroke="#b9cad5" stroke-width="3.2" fill="none" opacity=".45"/><path d="M554 1085.0 Q574 1078.0 594 1085.0" stroke="#b9cad5" stroke-width="3.2" fill="none" opacity=".45"/><path d="M554 1092.2 Q574 1085.2 594 1092.2" stroke="#b9cad5" stroke-width="3.2" fill="none" opacity=".45"/><path d="M554 1099.4 Q574 1092.4 594 1099.4" stroke="#b9cad5" stroke-width="3.2" fill="none" opacity=".45"/><path d="M554 1106.6 Q574 1099.6 594 1106.6" stroke="#b9cad5" stroke-width="3.2" fill="none" opacity=".45"/><path d="M554 1113.8 Q574 1106.8 594 1113.8" stroke="#b9cad5" stroke-width="3.2" fill="none" opacity=".45"/><path d="M554 1121.0 Q574 1114.0 594 1121.0" stroke="#b9cad5" stroke-width="3.2" fill="none" opacity=".45"/><path d="M554 1128.2 Q574 1121.2 594 1128.2" stroke="#b9cad5" stroke-width="3.2" fill="none" opacity=".45"/><path d="M554 1135.4 Q574 1128.4 594 1135.4" stroke="#b9cad5" stroke-width="3.2" fill="none" opacity=".45"/><path d="M554 1142.6 Q574 1135.6 594 1142.6" stroke="#b9cad5" stroke-width="3.2" fill="none" opacity=".45"/><path d="M554 1149.8 Q574 1142.8 594 1149.8" stroke="#b9cad5" stroke-width="3.2" fill="none" opacity=".45"/><rect x="594" y="715" width="6" height="410" fill="#2b3741" opacity=".6"/><path d="M600 728.0 Q620 721.0 640 728.0" stroke="#b9cad5" stroke-width="3.2" fill="none" opacity=".45"/><path d="M600 735.2 Q620 728.2 640 735.2" stroke="#b9cad5" stroke-width="3.2" fill="none" opacity=".45"/><path d="M600 742.4 Q620 735.4 640 742.4" stroke="#b9cad5" stroke-width="3.2" fill="none" opacity=".45"/><path d="M600 749.6 Q620 742.6 640 749.6" stroke="#b9cad5" stroke-width="3.2" fill="none" opacity=".45"/><path d="M600 756.8 Q620 749.8 640 756.8" stroke="#b9cad5" stroke-width="3.2" fill="none" opacity=".45"/><path d="M600 764.0 Q620 757.0 640 764.0" stroke="#b9cad5" stroke-width="3.2" fill="none" opacity=".45"/><path d="M600 771.2 Q620 764.2 640 771.2" stroke="#b9cad5" stroke-width="3.2" fill="none" opacity=".45"/><path d="M600 778.4 Q620 771.4 640 778.4" stroke="#b9cad5" stroke-width="3.2" fill="none" opacity=".45"/><path d="M600 785.6 Q620 778.6 640 785.6" stroke="#b9cad5" stroke-width="3.2" fill="none" opacity=".45"/><path d="M600 792.8 Q620 785.8 640 792.8" stroke="#b9cad5" stroke-width="3.2" fill="none" opacity=".45"/><path d="M600 800.0 Q620 793.0 640 800.0" stroke="#b9cad5" stroke-width="3.2" fill="none" opacity=".45"/><path d="M600 807.2 Q620 800.2 640 807.2" stroke="#b9cad5" stroke-width="3.2" fill="none" opacity=".45"/><path d="M600 814.4 Q620 807.4 640 814.4" stroke="#b9cad5" stroke-width="3.2" fill="none" opacity=".45"/><path d="M600 821.6 Q620 814.6 640 821.6" stroke="#b9cad5" stroke-width="3.2" fill="none" opacity=".45"/><path d="M600 828.8 Q620 821.8 640 828.8" stroke="#b9cad5" stroke-width="3.2" fill="none" opacity=".45"/><path d="M600 836.0 Q620 829.0 640 836.0" stroke="#b9cad5" stroke-width="3.2" fill="none" opacity=".45"/><path d="M600 843.2 Q620 836.2 640 843.2" stroke="#b9cad5" stroke-width="3.2" fill="none" opacity=".45"/><path d="M600 850.4 Q620 843.4 640 850.4" stroke="#b9cad5" stroke-width="3.2" fill="none" opacity=".45"/><path d="M600 857.6 Q620 850.6 640 857.6" stroke="#b9cad5" stroke-width="3.2" fill="none" opacity=".45"/><path d="M600 864.8 Q620 857.8 640 864.8" stroke="#b9cad5" stroke-width="3.2" fill="none" opacity=".45"/><path d="M600 872.0 Q620 865.0 640 872.0" stroke="#b9cad5" stroke-width="3.2" fill="none" opacity=".45"/><path d="M600 879.2 Q620 872.2 640 879.2" stroke="#b9cad5" stroke-width="3.2" fill="none" opacity=".45"/><path d="M600 886.4 Q620 879.4 640 886.4" stroke="#b9cad5" stroke-width="3.2" fill="none" opacity=".45"/><path d="M600 893.6 Q620 886.6 640 893.6" stroke="#b9cad5" stroke-width="3.2" fill="none" opacity=".45"/><path d="M600 900.8 Q620 893.8 640 900.8" stroke="#b9cad5" stroke-width="3.2" fill="none" opacity=".45"/><path d="M600 908.0 Q620 901.0 640 908.0" stroke="#b9cad5" stroke-width="3.2" fill="none" opacity=".45"/><path d="M600 915.2 Q620 908.2 640 915.2" stroke="#b9cad5" stroke-width="3.2" fill="none" opacity=".45"/><path d="M600 922.4 Q620 915.4 640 922.4" stroke="#b9cad5" stroke-width="3.2" fill="none" opacity=".45"/><path d="M600 929.6 Q620 922.6 640 929.6" stroke="#b9cad5" stroke-width="3.2" fill="none" opacity=".45"/><path d="M600 936.8 Q620 929.8 640 936.8" stroke="#b9cad5" stroke-width="3.2" fill="none" opacity=".45"/><path d="M600 944.0 Q620 937.0 640 944.0" stroke="#b9cad5" stroke-width="3.2" fill="none" opacity=".45"/><path d="M600 951.2 Q620 944.2 640 951.2" stroke="#b9cad5" stroke-width="3.2" fill="none" opacity=".45"/><path d="M600 958.4 Q620 951.4 640 958.4" stroke="#b9cad5" stroke-width="3.2" fill="none" opacity=".45"/><path d="M600 965.6 Q620 958.6 640 965.6" stroke="#b9cad5" stroke-width="3.2" fill="none" opacity=".45"/><path d="M600 972.8 Q620 965.8 640 972.8" stroke="#b9cad5" stroke-width="3.2" fill="none" opacity=".45"/><path d="M600 980.0 Q620 973.0 640 980.0" stroke="#b9cad5" stroke-width="3.2" fill="none" opacity=".45"/><path d="M600 987.2 Q620 980.2 640 987.2" stroke="#b9cad5" stroke-width="3.2" fill="none" opacity=".45"/><path d="M600 994.4000000000001 Q620 987.4000000000001 640 994.4000000000001" stroke="#b9cad5" stroke-width="3.2" fill="none" opacity=".45"/><path d="M600 1001.6 Q620 994.6 640 1001.6" stroke="#b9cad5" stroke-width="3.2" fill="none" opacity=".45"/><path d="M600 1008.8 Q620 1001.8 640 1008.8" stroke="#b9cad5" stroke-width="3.2" fill="none" opacity=".45"/><path d="M600 1016.0 Q620 1009.0 640 1016.0" stroke="#b9cad5" stroke-width="3.2" fill="none" opacity=".45"/><path d="M600 1023.2 Q620 1016.2 640 1023.2" stroke="#b9cad5" stroke-width="3.2" fill="none" opacity=".45"/><path d="M600 1030.4 Q620 1023.4000000000001 640 1030.4" stroke="#b9cad5" stroke-width="3.2" fill="none" opacity=".45"/><path d="M600 1037.6 Q620 1030.6 640 1037.6" stroke="#b9cad5" stroke-width="3.2" fill="none" opacity=".45"/><path d="M600 1044.8 Q620 1037.8 640 1044.8" stroke="#b9cad5" stroke-width="3.2" fill="none" opacity=".45"/><path d="M600 1052.0 Q620 1045.0 640 1052.0" stroke="#b9cad5" stroke-width="3.2" fill="none" opacity=".45"/><path d="M600 1059.2 Q620 1052.2 640 1059.2" stroke="#b9cad5" stroke-width="3.2" fill="none" opacity=".45"/><path d="M600 1066.4 Q620 1059.4 640 1066.4" stroke="#b9cad5" stroke-width="3.2" fill="none" opacity=".45"/><path d="M600 1073.6 Q620 1066.6 640 1073.6" stroke="#b9cad5" stroke-width="3.2" fill="none" opacity=".45"/><path d="M600 1080.8 Q620 1073.8 640 1080.8" stroke="#b9cad5" stroke-width="3.2" fill="none" opacity=".45"/><path d="M600 1088.0 Q620 1081.0 640 1088.0" stroke="#b9cad5" stroke-width="3.2" fill="none" opacity=".45"/><path d="M600 1095.2 Q620 1088.2 640 1095.2" stroke="#b9cad5" stroke-width="3.2" fill="none" opacity=".45"/><path d="M600 1102.4 Q620 1095.4 640 1102.4" stroke="#b9cad5" stroke-width="3.2" fill="none" opacity=".45"/><path d="M600 1109.6 Q620 1102.6 640 1109.6" stroke="#b9cad5" stroke-width="3.2" fill="none" opacity=".45"/><path d="M600 1116.8 Q620 1109.8 640 1116.8" stroke="#b9cad5" stroke-width="3.2" fill="none" opacity=".45"/><path d="M600 1124.0 Q620 1117.0 640 1124.0" stroke="#b9cad5" stroke-width="3.2" fill="none" opacity=".45"/><path d="M600 1131.2 Q620 1124.2 640 1131.2" stroke="#b9cad5" stroke-width="3.2" fill="none" opacity=".45"/><path d="M600 1138.4 Q620 1131.4 640 1138.4" stroke="#b9cad5" stroke-width="3.2" fill="none" opacity=".45"/><path d="M600 1145.6 Q620 1138.6 640 1145.6" stroke="#b9cad5" stroke-width="3.2" fill="none" opacity=".45"/><path d="M600 1152.8 Q620 1145.8 640 1152.8" stroke="#b9cad5" stroke-width="3.2" fill="none" opacity=".45"/><rect x="640" y="715" width="6" height="410" fill="#2b3741" opacity=".6"/><path d="M646 725.0 Q666 718.0 686 725.0" stroke="#b9cad5" stroke-width="3.2" fill="none" opacity=".45"/><path d="M646 732.2 Q666 725.2 686 732.2" stroke="#b9cad5" stroke-width="3.2" fill="none" opacity=".45"/><path d="M646 739.4 Q666 732.4 686 739.4" stroke="#b9cad5" stroke-width="3.2" fill="none" opacity=".45"/><path d="M646 746.6 Q666 739.6 686 746.6" stroke="#b9cad5" stroke-width="3.2" fill="none" opacity=".45"/><path d="M646 753.8 Q666 746.8 686 753.8" stroke="#b9cad5" stroke-width="3.2" fill="none" opacity=".45"/><path d="M646 761.0 Q666 754.0 686 761.0" stroke="#b9cad5" stroke-width="3.2" fill="none" opacity=".45"/><path d="M646 768.2 Q666 761.2 686 768.2" stroke="#b9cad5" stroke-width="3.2" fill="none" opacity=".45"/><path d="M646 775.4 Q666 768.4 686 775.4" stroke="#b9cad5" stroke-width="3.2" fill="none" opacity=".45"/><path d="M646 782.6 Q666 775.6 686 782.6" stroke="#b9cad5" stroke-width="3.2" fill="none" opacity=".45"/><path d="M646 789.8 Q666 782.8 686 789.8" stroke="#b9cad5" stroke-width="3.2" fill="none" opacity=".45"/><path d="M646 797.0 Q666 790.0 686 797.0" stroke="#b9cad5" stroke-width="3.2" fill="none" opacity=".45"/><path d="M646 804.2 Q666 797.2 686 804.2" stroke="#b9cad5" stroke-width="3.2" fill="none" opacity=".45"/><path d="M646 811.4 Q666 804.4 686 811.4" stroke="#b9cad5" stroke-width="3.2" fill="none" opacity=".45"/><path d="M646 818.6 Q666 811.6 686 818.6" stroke="#b9cad5" stroke-width="3.2" fill="none" opacity=".45"/><path d="M646 825.8 Q666 818.8 686 825.8" stroke="#b9cad5" stroke-width="3.2" fill="none" opacity=".45"/><path d="M646 833.0 Q666 826.0 686 833.0" stroke="#b9cad5" stroke-width="3.2" fill="none" opacity=".45"/><path d="M646 840.2 Q666 833.2 686 840.2" stroke="#b9cad5" stroke-width="3.2" fill="none" opacity=".45"/><path d="M646 847.4 Q666 840.4 686 847.4" stroke="#b9cad5" stroke-width="3.2" fill="none" opacity=".45"/><path d="M646 854.6 Q666 847.6 686 854.6" stroke="#b9cad5" stroke-width="3.2" fill="none" opacity=".45"/><path d="M646 861.8 Q666 854.8 686 861.8" stroke="#b9cad5" stroke-width="3.2" fill="none" opacity=".45"/><path d="M646 869.0 Q666 862.0 686 869.0" stroke="#b9cad5" stroke-width="3.2" fill="none" opacity=".45"/><path d="M646 876.2 Q666 869.2 686 876.2" stroke="#b9cad5" stroke-width="3.2" fill="none" opacity=".45"/><path d="M646 883.4 Q666 876.4 686 883.4" stroke="#b9cad5" stroke-width="3.2" fill="none" opacity=".45"/><path d="M646 890.6 Q666 883.6 686 890.6" stroke="#b9cad5" stroke-width="3.2" fill="none" opacity=".45"/><path d="M646 897.8 Q666 890.8 686 897.8" stroke="#b9cad5" stroke-width="3.2" fill="none" opacity=".45"/><path d="M646 905.0 Q666 898.0 686 905.0" stroke="#b9cad5" stroke-width="3.2" fill="none" opacity=".45"/><path d="M646 912.2 Q666 905.2 686 912.2" stroke="#b9cad5" stroke-width="3.2" fill="none" opacity=".45"/><path d="M646 919.4 Q666 912.4 686 919.4" stroke="#b9cad5" stroke-width="3.2" fill="none" opacity=".45"/><path d="M646 926.6 Q666 919.6 686 926.6" stroke="#b9cad5" stroke-width="3.2" fill="none" opacity=".45"/><path d="M646 933.8 Q666 926.8 686 933.8" stroke="#b9cad5" stroke-width="3.2" fill="none" opacity=".45"/><path d="M646 941.0 Q666 934.0 686 941.0" stroke="#b9cad5" stroke-width="3.2" fill="none" opacity=".45"/><path d="M646 948.2 Q666 941.2 686 948.2" stroke="#b9cad5" stroke-width="3.2" fill="none" opacity=".45"/><path d="M646 955.4 Q666 948.4 686 955.4" stroke="#b9cad5" stroke-width="3.2" fill="none" opacity=".45"/><path d="M646 962.6 Q666 955.6 686 962.6" stroke="#b9cad5" stroke-width="3.2" fill="none" opacity=".45"/><path d="M646 969.8 Q666 962.8 686 969.8" stroke="#b9cad5" stroke-width="3.2" fill="none" opacity=".45"/><path d="M646 977.0 Q666 970.0 686 977.0" stroke="#b9cad5" stroke-width="3.2" fill="none" opacity=".45"/><path d="M646 984.2 Q666 977.2 686 984.2" stroke="#b9cad5" stroke-width="3.2" fill="none" opacity=".45"/><path d="M646 991.4000000000001 Q666 984.4000000000001 686 991.4000000000001" stroke="#b9cad5" stroke-width="3.2" fill="none" opacity=".45"/><path d="M646 998.6 Q666 991.6 686 998.6" stroke="#b9cad5" stroke-width="3.2" fill="none" opacity=".45"/><path d="M646 1005.8 Q666 998.8 686 1005.8" stroke="#b9cad5" stroke-width="3.2" fill="none" opacity=".45"/><path d="M646 1013.0 Q666 1006.0 686 1013.0" stroke="#b9cad5" stroke-width="3.2" fill="none" opacity=".45"/><path d="M646 1020.2 Q666 1013.2 686 1020.2" stroke="#b9cad5" stroke-width="3.2" fill="none" opacity=".45"/><path d="M646 1027.4 Q666 1020.4000000000001 686 1027.4" stroke="#b9cad5" stroke-width="3.2" fill="none" opacity=".45"/><path d="M646 1034.6 Q666 1027.6 686 1034.6" stroke="#b9cad5" stroke-width="3.2" fill="none" opacity=".45"/><path d="M646 1041.8 Q666 1034.8 686 1041.8" stroke="#b9cad5" stroke-width="3.2" fill="none" opacity=".45"/><path d="M646 1049.0 Q666 1042.0 686 1049.0" stroke="#b9cad5" stroke-width="3.2" fill="none" opacity=".45"/><path d="M646 1056.2 Q666 1049.2 686 1056.2" stroke="#b9cad5" stroke-width="3.2" fill="none" opacity=".45"/><path d="M646 1063.4 Q666 1056.4 686 1063.4" stroke="#b9cad5" stroke-width="3.2" fill="none" opacity=".45"/><path d="M646 1070.6 Q666 1063.6 686 1070.6" stroke="#b9cad5" stroke-width="3.2" fill="none" opacity=".45"/><path d="M646 1077.8 Q666 1070.8 686 1077.8" stroke="#b9cad5" stroke-width="3.2" fill="none" opacity=".45"/><path d="M646 1085.0 Q666 1078.0 686 1085.0" stroke="#b9cad5" stroke-width="3.2" fill="none" opacity=".45"/><path d="M646 1092.2 Q666 1085.2 686 1092.2" stroke="#b9cad5" stroke-width="3.2" fill="none" opacity=".45"/><path d="M646 1099.4 Q666 1092.4 686 1099.4" stroke="#b9cad5" stroke-width="3.2" fill="none" opacity=".45"/><path d="M646 1106.6 Q666 1099.6 686 1106.6" stroke="#b9cad5" stroke-width="3.2" fill="none" opacity=".45"/><path d="M646 1113.8 Q666 1106.8 686 1113.8" stroke="#b9cad5" stroke-width="3.2" fill="none" opacity=".45"/><path d="M646 1121.0 Q666 1114.0 686 1121.0" stroke="#b9cad5" stroke-width="3.2" fill="none" opacity=".45"/><path d="M646 1128.2 Q666 1121.2 686 1128.2" stroke="#b9cad5" stroke-width="3.2" fill="none" opacity=".45"/><path d="M646 1135.4 Q666 1128.4 686 1135.4" stroke="#b9cad5" stroke-width="3.2" fill="none" opacity=".45"/><path d="M646 1142.6 Q666 1135.6 686 1142.6" stroke="#b9cad5" stroke-width="3.2" fill="none" opacity=".45"/><path d="M646 1149.8 Q666 1142.8 686 1149.8" stroke="#b9cad5" stroke-width="3.2" fill="none" opacity=".45"/><rect x="686" y="715" width="6" height="410" fill="#2b3741" opacity=".6"/><path d="M692 728.0 Q712 721.0 732 728.0" stroke="#b9cad5" stroke-width="3.2" fill="none" opacity=".45"/><path d="M692 735.2 Q712 728.2 732 735.2" stroke="#b9cad5" stroke-width="3.2" fill="none" opacity=".45"/><path d="M692 742.4 Q712 735.4 732 742.4" stroke="#b9cad5" stroke-width="3.2" fill="none" opacity=".45"/><path d="M692 749.6 Q712 742.6 732 749.6" stroke="#b9cad5" stroke-width="3.2" fill="none" opacity=".45"/><path d="M692 756.8 Q712 749.8 732 756.8" stroke="#b9cad5" stroke-width="3.2" fill="none" opacity=".45"/><path d="M692 764.0 Q712 757.0 732 764.0" stroke="#b9cad5" stroke-width="3.2" fill="none" opacity=".45"/><path d="M692 771.2 Q712 764.2 732 771.2" stroke="#b9cad5" stroke-width="3.2" fill="none" opacity=".45"/><path d="M692 778.4 Q712 771.4 732 778.4" stroke="#b9cad5" stroke-width="3.2" fill="none" opacity=".45"/><path d="M692 785.6 Q712 778.6 732 785.6" stroke="#b9cad5" stroke-width="3.2" fill="none" opacity=".45"/><path d="M692 792.8 Q712 785.8 732 792.8" stroke="#b9cad5" stroke-width="3.2" fill="none" opacity=".45"/><path d="M692 800.0 Q712 793.0 732 800.0" stroke="#b9cad5" stroke-width="3.2" fill="none" opacity=".45"/><path d="M692 807.2 Q712 800.2 732 807.2" stroke="#b9cad5" stroke-width="3.2" fill="none" opacity=".45"/><path d="M692 814.4 Q712 807.4 732 814.4" stroke="#b9cad5" stroke-width="3.2" fill="none" opacity=".45"/><path d="M692 821.6 Q712 814.6 732 821.6" stroke="#b9cad5" stroke-width="3.2" fill="none" opacity=".45"/><path d="M692 828.8 Q712 821.8 732 828.8" stroke="#b9cad5" stroke-width="3.2" fill="none" opacity=".45"/><path d="M692 836.0 Q712 829.0 732 836.0" stroke="#b9cad5" stroke-width="3.2" fill="none" opacity=".45"/><path d="M692 843.2 Q712 836.2 732 843.2" stroke="#b9cad5" stroke-width="3.2" fill="none" opacity=".45"/><path d="M692 850.4 Q712 843.4 732 850.4" stroke="#b9cad5" stroke-width="3.2" fill="none" opacity=".45"/><path d="M692 857.6 Q712 850.6 732 857.6" stroke="#b9cad5" stroke-width="3.2" fill="none" opacity=".45"/><path d="M692 864.8 Q712 857.8 732 864.8" stroke="#b9cad5" stroke-width="3.2" fill="none" opacity=".45"/><path d="M692 872.0 Q712 865.0 732 872.0" stroke="#b9cad5" stroke-width="3.2" fill="none" opacity=".45"/><path d="M692 879.2 Q712 872.2 732 879.2" stroke="#b9cad5" stroke-width="3.2" fill="none" opacity=".45"/><path d="M692 886.4 Q712 879.4 732 886.4" stroke="#b9cad5" stroke-width="3.2" fill="none" opacity=".45"/><path d="M692 893.6 Q712 886.6 732 893.6" stroke="#b9cad5" stroke-width="3.2" fill="none" opacity=".45"/><path d="M692 900.8 Q712 893.8 732 900.8" stroke="#b9cad5" stroke-width="3.2" fill="none" opacity=".45"/><path d="M692 908.0 Q712 901.0 732 908.0" stroke="#b9cad5" stroke-width="3.2" fill="none" opacity=".45"/><path d="M692 915.2 Q712 908.2 732 915.2" stroke="#b9cad5" stroke-width="3.2" fill="none" opacity=".45"/><path d="M692 922.4 Q712 915.4 732 922.4" stroke="#b9cad5" stroke-width="3.2" fill="none" opacity=".45"/><path d="M692 929.6 Q712 922.6 732 929.6" stroke="#b9cad5" stroke-width="3.2" fill="none" opacity=".45"/><path d="M692 936.8 Q712 929.8 732 936.8" stroke="#b9cad5" stroke-width="3.2" fill="none" opacity=".45"/><path d="M692 944.0 Q712 937.0 732 944.0" stroke="#b9cad5" stroke-width="3.2" fill="none" opacity=".45"/><path d="M692 951.2 Q712 944.2 732 951.2" stroke="#b9cad5" stroke-width="3.2" fill="none" opacity=".45"/><path d="M692 958.4 Q712 951.4 732 958.4" stroke="#b9cad5" stroke-width="3.2" fill="none" opacity=".45"/><path d="M692 965.6 Q712 958.6 732 965.6" stroke="#b9cad5" stroke-width="3.2" fill="none" opacity=".45"/><path d="M692 972.8 Q712 965.8 732 972.8" stroke="#b9cad5" stroke-width="3.2" fill="none" opacity=".45"/><path d="M692 980.0 Q712 973.0 732 980.0" stroke="#b9cad5" stroke-width="3.2" fill="none" opacity=".45"/><path d="M692 987.2 Q712 980.2 732 987.2" stroke="#b9cad5" stroke-width="3.2" fill="none" opacity=".45"/><path d="M692 994.4000000000001 Q712 987.4000000000001 732 994.4000000000001" stroke="#b9cad5" stroke-width="3.2" fill="none" opacity=".45"/><path d="M692 1001.6 Q712 994.6 732 1001.6" stroke="#b9cad5" stroke-width="3.2" fill="none" opacity=".45"/><path d="M692 1008.8 Q712 1001.8 732 1008.8" stroke="#b9cad5" stroke-width="3.2" fill="none" opacity=".45"/><path d="M692 1016.0 Q712 1009.0 732 1016.0" stroke="#b9cad5" stroke-width="3.2" fill="none" opacity=".45"/><path d="M692 1023.2 Q712 1016.2 732 1023.2" stroke="#b9cad5" stroke-width="3.2" fill="none" opacity=".45"/><path d="M692 1030.4 Q712 1023.4000000000001 732 1030.4" stroke="#b9cad5" stroke-width="3.2" fill="none" opacity=".45"/><path d="M692 1037.6 Q712 1030.6 732 1037.6" stroke="#b9cad5" stroke-width="3.2" fill="none" opacity=".45"/><path d="M692 1044.8 Q712 1037.8 732 1044.8" stroke="#b9cad5" stroke-width="3.2" fill="none" opacity=".45"/><path d="M692 1052.0 Q712 1045.0 732 1052.0" stroke="#b9cad5" stroke-width="3.2" fill="none" opacity=".45"/><path d="M692 1059.2 Q712 1052.2 732 1059.2" stroke="#b9cad5" stroke-width="3.2" fill="none" opacity=".45"/><path d="M692 1066.4 Q712 1059.4 732 1066.4" stroke="#b9cad5" stroke-width="3.2" fill="none" opacity=".45"/><path d="M692 1073.6 Q712 1066.6 732 1073.6" stroke="#b9cad5" stroke-width="3.2" fill="none" opacity=".45"/><path d="M692 1080.8 Q712 1073.8 732 1080.8" stroke="#b9cad5" stroke-width="3.2" fill="none" opacity=".45"/><path d="M692 1088.0 Q712 1081.0 732 1088.0" stroke="#b9cad5" stroke-width="3.2" fill="none" opacity=".45"/><path d="M692 1095.2 Q712 1088.2 732 1095.2" stroke="#b9cad5" stroke-width="3.2" fill="none" opacity=".45"/><path d="M692 1102.4 Q712 1095.4 732 1102.4" stroke="#b9cad5" stroke-width="3.2" fill="none" opacity=".45"/><path d="M692 1109.6 Q712 1102.6 732 1109.6" stroke="#b9cad5" stroke-width="3.2" fill="none" opacity=".45"/><path d="M692 1116.8 Q712 1109.8 732 1116.8" stroke="#b9cad5" stroke-width="3.2" fill="none" opacity=".45"/><path d="M692 1124.0 Q712 1117.0 732 1124.0" stroke="#b9cad5" stroke-width="3.2" fill="none" opacity=".45"/><path d="M692 1131.2 Q712 1124.2 732 1131.2" stroke="#b9cad5" stroke-width="3.2" fill="none" opacity=".45"/><path d="M692 1138.4 Q712 1131.4 732 1138.4" stroke="#b9cad5" stroke-width="3.2" fill="none" opacity=".45"/><path d="M692 1145.6 Q712 1138.6 732 1145.6" stroke="#b9cad5" stroke-width="3.2" fill="none" opacity=".45"/><path d="M692 1152.8 Q712 1145.8 732 1152.8" stroke="#b9cad5" stroke-width="3.2" fill="none" opacity=".45"/><rect x="732" y="715" width="6" height="410" fill="#2b3741" opacity=".6"/></g></g><path d="M262.6 -40.0 L308.9 -40.0 C336.6 -38.3 343.5 -16.9 343.5 17.8 C343.5 52.4 336.6 73.8 308.9 75.5 L262.6 75.5 C234.9 73.8 228.0 52.4 228.0 17.8 C228.0 -16.9 234.9 -38.3 262.6 -40.0 Z" fill="url(#lg)"/><path d="M262.6 -40.0 L308.9 -40.0 C336.6 -38.3 343.5 -16.9 343.5 17.8 C343.5 52.4 336.6 73.8 308.9 75.5 L262.6 75.5 C234.9 73.8 228.0 52.4 228.0 17.8 C228.0 -16.9 234.9 -38.3 262.6 -40.0 Z" fill="url(#lshade)"/><path d="M262.6 -40.0 L308.9 -40.0 C336.6 -38.3 343.5 -16.9 343.5 17.8 C343.5 52.4 336.6 73.8 308.9 75.5 L262.6 75.5 C234.9 73.8 228.0 52.4 228.0 17.8 C228.0 -16.9 234.9 -38.3 262.6 -40.0 Z" fill="url(#rib)"/><rect x="245.0" y="75.5" width="54.0" height="54.0" fill="url(#gd)"/><rect x="245.0" y="75.5" width="54.0" height="54.0" fill="url(#tass)"/><rect x="242.0" y="75.5" width="60.0" height="9.0" fill="#6e5a0c" opacity=".85"/><path d="M257.0 295.5 L277.3 295.5 C289.5 297.1 292.6 317.3 292.6 350.0 C292.6 382.7 289.5 402.9 277.3 404.5 L257.0 404.5 C244.8 402.9 241.7 382.7 241.7 350.0 C241.7 317.3 244.8 297.1 257.0 295.5 Z" fill="url(#lgd)"/><path d="M257.0 295.5 L277.3 295.5 C289.5 297.1 292.6 317.3 292.6 350.0 C292.6 382.7 289.5 402.9 277.3 404.5 L257.0 404.5 C244.8 402.9 241.7 382.7 241.7 350.0 C241.7 317.3 244.8 297.1 257.0 295.5 Z" fill="url(#lshade)"/><path d="M257.0 295.5 L277.3 295.5 C289.5 297.1 292.6 317.3 292.6 350.0 C292.6 382.7 289.5 402.9 277.3 404.5 L257.0 404.5 C244.8 402.9 241.7 382.7 241.7 350.0 C241.7 317.3 244.8 297.1 257.0 295.5 Z" fill="url(#rib)"/><path d="M271.9 136.5 L325.6 136.5 C357.9 139.5 366.0 176.5 366.0 236.5 C366.0 296.5 357.9 333.5 325.6 336.5 L271.9 336.5 C239.6 333.5 231.5 296.5 231.5 236.5 C231.5 176.5 239.6 139.5 271.9 136.5 Z" fill="url(#lg)"/><path d="M271.9 136.5 L325.6 136.5 C357.9 139.5 366.0 176.5 366.0 236.5 C366.0 296.5 357.9 333.5 325.6 336.5 L271.9 336.5 C239.6 333.5 231.5 296.5 231.5 236.5 C231.5 176.5 239.6 139.5 271.9 136.5 Z" fill="url(#lshade)"/><path d="M271.9 136.5 L325.6 136.5 C357.9 139.5 366.0 176.5 366.0 236.5 C366.0 296.5 357.9 333.5 325.6 336.5 L271.9 336.5 C239.6 333.5 231.5 296.5 231.5 236.5 C231.5 176.5 239.6 139.5 271.9 136.5 Z" fill="url(#rib)"/><rect x="245.0" y="122.5" width="72.0" height="21.0" fill="url(#gd)"/><rect x="245.0" y="122.5" width="72.0" height="21.0" fill="url(#tass)"/><rect x="242.0" y="122.5" width="78.0" height="4.2" fill="#6e5a0c" opacity=".85"/><rect x="292.6" y="333.5" width="54.4" height="61.0" fill="url(#gd)"/><rect x="292.6" y="333.5" width="54.4" height="61.0" fill="url(#tass)"/><rect x="289.6" y="333.5" width="60.4" height="9.0" fill="#6e5a0c" opacity=".85"/><path d="M264.0 575.0 L292.0 575.0 C308.8 576.5 313.0 594.4 313.0 623.5 C313.0 652.6 308.8 670.5 292.0 672.0 L264.0 672.0 C247.2 670.5 243.0 652.6 243.0 623.5 C243.0 594.4 247.2 576.5 264.0 575.0 Z" fill="url(#lgd)"/><path d="M264.0 575.0 L292.0 575.0 C308.8 576.5 313.0 594.4 313.0 623.5 C313.0 652.6 308.8 670.5 292.0 672.0 L264.0 672.0 C247.2 670.5 243.0 652.6 243.0 623.5 C243.0 594.4 247.2 576.5 264.0 575.0 Z" fill="url(#lshade)"/><path d="M264.0 575.0 L292.0 575.0 C308.8 576.5 313.0 594.4 313.0 623.5 C313.0 652.6 308.8 670.5 292.0 672.0 L264.0 672.0 C247.2 670.5 243.0 652.6 243.0 623.5 C243.0 594.4 247.2 576.5 264.0 575.0 Z" fill="url(#rib)"/><path d="M274.3 394.5 L326.7 394.5 C358.1 397.5 366.0 435.1 366.0 496.0 C366.0 556.9 358.1 594.5 326.7 597.5 L274.3 597.5 C242.9 594.5 235.0 556.9 235.0 496.0 C235.0 435.1 242.9 397.5 274.3 394.5 Z" fill="url(#lg)"/><path d="M274.3 394.5 L326.7 394.5 C358.1 397.5 366.0 435.1 366.0 496.0 C366.0 556.9 358.1 594.5 326.7 597.5 L274.3 597.5 C242.9 594.5 235.0 556.9 235.0 496.0 C235.0 435.1 242.9 397.5 274.3 394.5 Z" fill="url(#lshade)"/><path d="M274.3 394.5 L326.7 394.5 C358.1 397.5 366.0 435.1 366.0 496.0 C366.0 556.9 358.1 594.5 326.7 597.5 L274.3 597.5 C242.9 594.5 235.0 556.9 235.0 496.0 C235.0 435.1 242.9 397.5 274.3 394.5 Z" fill="url(#rib)"/><rect x="255.0" y="587.5" width="58.0" height="65.0" fill="url(#gd)"/><rect x="255.0" y="587.5" width="58.0" height="65.0" fill="url(#tass)"/><rect x="252.0" y="587.5" width="64.0" height="9.0" fill="#6e5a0c" opacity=".85"/><rect x="262.0" y="665.5" width="37.0" height="38.0" fill="url(#gdd)"/><rect x="262.0" y="665.5" width="37.0" height="38.0" fill="url(#tass)"/><rect x="259.0" y="665.5" width="43.0" height="7.6" fill="#6e5a0c" opacity=".85"/><path d="M273.3 709.5 L301.7 709.5 C318.7 711.1 323.0 731.3 323.0 764.0 C323.0 796.7 318.7 816.9 301.7 818.5 L273.3 818.5 C256.3 816.9 252.0 796.7 252.0 764.0 C252.0 731.3 256.3 711.1 273.3 709.5 Z" fill="url(#lg)"/><path d="M273.3 709.5 L301.7 709.5 C318.7 711.1 323.0 731.3 323.0 764.0 C323.0 796.7 318.7 816.9 301.7 818.5 L273.3 818.5 C256.3 816.9 252.0 796.7 252.0 764.0 C252.0 731.3 256.3 711.1 273.3 709.5 Z" fill="url(#lshade)"/><path d="M273.3 709.5 L301.7 709.5 C318.7 711.1 323.0 731.3 323.0 764.0 C323.0 796.7 318.7 816.9 301.7 818.5 L273.3 818.5 C256.3 816.9 252.0 796.7 252.0 764.0 C252.0 731.3 256.3 711.1 273.3 709.5 Z" fill="url(#rib)"/><path d="M258.4 1080.0 L289.6 1080.0 C308.3 1081.0 313.0 1094.0 313.0 1115.0 C313.0 1136.0 308.3 1149.0 289.6 1150.0 L258.4 1150.0 C239.7 1149.0 235.0 1136.0 235.0 1115.0 C235.0 1094.0 239.7 1081.0 258.4 1080.0 Z" fill="url(#lg)"/><path d="M258.4 1080.0 L289.6 1080.0 C308.3 1081.0 313.0 1094.0 313.0 1115.0 C313.0 1136.0 308.3 1149.0 289.6 1150.0 L258.4 1150.0 C239.7 1149.0 235.0 1136.0 235.0 1115.0 C235.0 1094.0 239.7 1081.0 258.4 1080.0 Z" fill="url(#lshade)"/><path d="M258.4 1080.0 L289.6 1080.0 C308.3 1081.0 313.0 1094.0 313.0 1115.0 C313.0 1136.0 308.3 1149.0 289.6 1150.0 L258.4 1150.0 C239.7 1149.0 235.0 1136.0 235.0 1115.0 C235.0 1094.0 239.7 1081.0 258.4 1080.0 Z" fill="url(#rib)"/><path d="M484.8 -60.0 L515.2 -60.0 C533.4 -58.2 538.0 -36.0 538.0 0.0 C538.0 36.0 533.4 58.2 515.2 60.0 L484.8 60.0 C466.6 58.2 462.0 36.0 462.0 0.0 C462.0 -36.0 466.6 -58.2 484.8 -60.0 Z" fill="url(#lg)"/><path d="M484.8 -60.0 L515.2 -60.0 C533.4 -58.2 538.0 -36.0 538.0 0.0 C538.0 36.0 533.4 58.2 515.2 60.0 L484.8 60.0 C466.6 58.2 462.0 36.0 462.0 0.0 C462.0 -36.0 466.6 -58.2 484.8 -60.0 Z" fill="url(#lshade)"/><path d="M484.8 -60.0 L515.2 -60.0 C533.4 -58.2 538.0 -36.0 538.0 0.0 C538.0 36.0 533.4 58.2 515.2 60.0 L484.8 60.0 C466.6 58.2 462.0 36.0 462.0 0.0 C462.0 -36.0 466.6 -58.2 484.8 -60.0 Z" fill="url(#rib)"/><rect x="490.0" y="52.0" width="48.0" height="67.5" fill="url(#gd)"/><rect x="490.0" y="52.0" width="48.0" height="67.5" fill="url(#tass)"/><rect x="487.0" y="52.0" width="54.0" height="9.0" fill="#6e5a0c" opacity=".85"/><path d="M450.3 241.5 L474.7 241.5 C489.3 243.6 493.0 270.1 493.0 313.0 C493.0 355.9 489.3 382.4 474.7 384.5 L450.3 384.5 C435.7 382.4 432.0 355.9 432.0 313.0 C432.0 270.1 435.7 243.6 450.3 241.5 Z" fill="url(#lgd)"/><path d="M450.3 241.5 L474.7 241.5 C489.3 243.6 493.0 270.1 493.0 313.0 C493.0 355.9 489.3 382.4 474.7 384.5 L450.3 384.5 C435.7 382.4 432.0 355.9 432.0 313.0 C432.0 270.1 435.7 243.6 450.3 241.5 Z" fill="url(#lshade)"/><path d="M450.3 241.5 L474.7 241.5 C489.3 243.6 493.0 270.1 493.0 313.0 C493.0 355.9 489.3 382.4 474.7 384.5 L450.3 384.5 C435.7 382.4 432.0 355.9 432.0 313.0 C432.0 270.1 435.7 243.6 450.3 241.5 Z" fill="url(#rib)"/><path d="M473.7 119.5 L525.3 119.5 C556.3 122.2 564.0 155.5 564.0 209.5 C564.0 263.5 556.3 296.8 525.3 299.5 L473.7 299.5 C442.7 296.8 435.0 263.5 435.0 209.5 C435.0 155.5 442.7 122.2 473.7 119.5 Z" fill="url(#lg)"/><path d="M473.7 119.5 L525.3 119.5 C556.3 122.2 564.0 155.5 564.0 209.5 C564.0 263.5 556.3 296.8 525.3 299.5 L473.7 299.5 C442.7 296.8 435.0 263.5 435.0 209.5 C435.0 155.5 442.7 122.2 473.7 119.5 Z" fill="url(#lshade)"/><path d="M473.7 119.5 L525.3 119.5 C556.3 122.2 564.0 155.5 564.0 209.5 C564.0 263.5 556.3 296.8 525.3 299.5 L473.7 299.5 C442.7 296.8 435.0 263.5 435.0 209.5 C435.0 155.5 442.7 122.2 473.7 119.5 Z" fill="url(#rib)"/><rect x="489.0" y="299.5" width="55.0" height="61.0" fill="url(#gd)"/><rect x="489.0" y="299.5" width="55.0" height="61.0" fill="url(#tass)"/><rect x="486.0" y="299.5" width="61.0" height="9.0" fill="#6e5a0c" opacity=".85"/><path d="M494.7 356.5 L538.3 356.5 C564.5 359.3 571.0 393.9 571.0 450.0 C571.0 506.1 564.5 540.7 538.3 543.5 L494.7 543.5 C468.5 540.7 462.0 506.1 462.0 450.0 C462.0 393.9 468.5 359.3 494.7 356.5 Z" fill="url(#lg)"/><path d="M494.7 356.5 L538.3 356.5 C564.5 359.3 571.0 393.9 571.0 450.0 C571.0 506.1 564.5 540.7 538.3 543.5 L494.7 543.5 C468.5 540.7 462.0 506.1 462.0 450.0 C462.0 393.9 468.5 359.3 494.7 356.5 Z" fill="url(#lshade)"/><path d="M494.7 356.5 L538.3 356.5 C564.5 359.3 571.0 393.9 571.0 450.0 C571.0 506.1 564.5 540.7 538.3 543.5 L494.7 543.5 C468.5 540.7 462.0 506.1 462.0 450.0 C462.0 393.9 468.5 359.3 494.7 356.5 Z" fill="url(#rib)"/><rect x="489.0" y="540.5" width="58.0" height="51.0" fill="url(#gd)"/><rect x="489.0" y="540.5" width="58.0" height="51.0" fill="url(#tass)"/><rect x="486.0" y="540.5" width="64.0" height="9.0" fill="#6e5a0c" opacity=".85"/><path d="M486.0 1080.0 L514.0 1080.0 C530.8 1081.0 535.0 1094.0 535.0 1115.0 C535.0 1136.0 530.8 1149.0 514.0 1150.0 L486.0 1150.0 C469.2 1149.0 465.0 1136.0 465.0 1115.0 C465.0 1094.0 469.2 1081.0 486.0 1080.0 Z" fill="url(#lg)"/><path d="M486.0 1080.0 L514.0 1080.0 C530.8 1081.0 535.0 1094.0 535.0 1115.0 C535.0 1136.0 530.8 1149.0 514.0 1150.0 L486.0 1150.0 C469.2 1149.0 465.0 1136.0 465.0 1115.0 C465.0 1094.0 469.2 1081.0 486.0 1080.0 Z" fill="url(#lshade)"/><path d="M486.0 1080.0 L514.0 1080.0 C530.8 1081.0 535.0 1094.0 535.0 1115.0 C535.0 1136.0 530.8 1149.0 514.0 1150.0 L486.0 1150.0 C469.2 1149.0 465.0 1136.0 465.0 1115.0 C465.0 1094.0 469.2 1081.0 486.0 1080.0 Z" fill="url(#rib)"/><path d="M579.9 -60.0 L637.1 -60.0 C671.4 -57.1 680.0 -20.7 680.0 38.2 C680.0 97.2 671.4 133.6 637.1 136.5 L579.9 136.5 C545.6 133.6 537.0 97.2 537.0 38.2 C537.0 -20.7 545.6 -57.1 579.9 -60.0 Z" fill="url(#lg)"/><path d="M579.9 -60.0 L637.1 -60.0 C671.4 -57.1 680.0 -20.7 680.0 38.2 C680.0 97.2 671.4 133.6 637.1 136.5 L579.9 136.5 C545.6 133.6 537.0 97.2 537.0 38.2 C537.0 -20.7 545.6 -57.1 579.9 -60.0 Z" fill="url(#lshade)"/><path d="M579.9 -60.0 L637.1 -60.0 C671.4 -57.1 680.0 -20.7 680.0 38.2 C680.0 97.2 671.4 133.6 637.1 136.5 L579.9 136.5 C545.6 133.6 537.0 97.2 537.0 38.2 C537.0 -20.7 545.6 -57.1 579.9 -60.0 Z" fill="url(#rib)"/><rect x="578.0" y="126.5" width="64.0" height="71.0" fill="url(#gd)"/><rect x="578.0" y="126.5" width="64.0" height="71.0" fill="url(#tass)"/><rect x="575.0" y="126.5" width="70.0" height="9.0" fill="#6e5a0c" opacity=".85"/><path d="M584.8 214.5 L639.2 214.5 C671.8 217.9 680.0 259.9 680.0 328.0 C680.0 396.1 671.8 438.1 639.2 441.5 L584.8 441.5 C552.2 438.1 544.0 396.1 544.0 328.0 C544.0 259.9 552.2 217.9 584.8 214.5 Z" fill="url(#lg)"/><path d="M584.8 214.5 L639.2 214.5 C671.8 217.9 680.0 259.9 680.0 328.0 C680.0 396.1 671.8 438.1 639.2 441.5 L584.8 441.5 C552.2 438.1 544.0 396.1 544.0 328.0 C544.0 259.9 552.2 217.9 584.8 214.5 Z" fill="url(#lshade)"/><path d="M584.8 214.5 L639.2 214.5 C671.8 217.9 680.0 259.9 680.0 328.0 C680.0 396.1 671.8 438.1 639.2 441.5 L584.8 441.5 C552.2 438.1 544.0 396.1 544.0 328.0 C544.0 259.9 552.2 217.9 584.8 214.5 Z" fill="url(#rib)"/><rect x="611.6" y="435.0" width="50.4" height="64.5" fill="url(#gd)"/><rect x="611.6" y="435.0" width="50.4" height="64.5" fill="url(#tass)"/><rect x="608.6" y="435.0" width="56.4" height="9.0" fill="#6e5a0c" opacity=".85"/><path d="M624.7 496.0 L656.3 496.0 C675.3 497.5 680.0 515.7 680.0 545.2 C680.0 574.8 675.3 593.0 656.3 594.5 L624.7 594.5 C605.7 593.0 601.0 574.8 601.0 545.2 C601.0 515.7 605.7 497.5 624.7 496.0 Z" fill="url(#lg)"/><path d="M624.7 496.0 L656.3 496.0 C675.3 497.5 680.0 515.7 680.0 545.2 C680.0 574.8 675.3 593.0 656.3 594.5 L624.7 594.5 C605.7 593.0 601.0 574.8 601.0 545.2 C601.0 515.7 605.7 497.5 624.7 496.0 Z" fill="url(#lshade)"/><path d="M624.7 496.0 L656.3 496.0 C675.3 497.5 680.0 515.7 680.0 545.2 C680.0 574.8 675.3 593.0 656.3 594.5 L624.7 594.5 C605.7 593.0 601.0 574.8 601.0 545.2 C601.0 515.7 605.7 497.5 624.7 496.0 Z" fill="url(#rib)"/><rect x="611.6" y="594.5" width="40.4" height="41.0" fill="url(#gdd)"/><rect x="611.6" y="594.5" width="40.4" height="41.0" fill="url(#tass)"/><rect x="608.6" y="594.5" width="46.4" height="8.2" fill="#6e5a0c" opacity=".85"/><path d="M622.6 631.5 L655.4 631.5 C675.1 633.2 680.0 653.9 680.0 687.5 C680.0 721.1 675.1 741.8 655.4 743.5 L622.6 743.5 C602.9 741.8 598.0 721.1 598.0 687.5 C598.0 653.9 602.9 633.2 622.6 631.5 Z" fill="url(#lg)"/><path d="M622.6 631.5 L655.4 631.5 C675.1 633.2 680.0 653.9 680.0 687.5 C680.0 721.1 675.1 741.8 655.4 743.5 L622.6 743.5 C602.9 741.8 598.0 721.1 598.0 687.5 C598.0 653.9 602.9 633.2 622.6 631.5 Z" fill="url(#lshade)"/><path d="M622.6 631.5 L655.4 631.5 C675.1 633.2 680.0 653.9 680.0 687.5 C680.0 721.1 675.1 741.8 655.4 743.5 L622.6 743.5 C602.9 741.8 598.0 721.1 598.0 687.5 C598.0 653.9 602.9 633.2 622.6 631.5 Z" fill="url(#rib)"/><rect x="611.0" y="743.5" width="41.0" height="27.0" fill="url(#gdd)"/><rect x="611.0" y="743.5" width="41.0" height="27.0" fill="url(#tass)"/><rect x="608.0" y="743.5" width="47.0" height="5.4" fill="#6e5a0c" opacity=".85"/><path d="M624.7 770.5 L656.3 770.5 C675.3 772.0 680.0 790.9 680.0 821.5 C680.0 852.1 675.3 871.0 656.3 872.5 L624.7 872.5 C605.7 871.0 601.0 852.1 601.0 821.5 C601.0 790.9 605.7 772.0 624.7 770.5 Z" fill="url(#lg)"/><path d="M624.7 770.5 L656.3 770.5 C675.3 772.0 680.0 790.9 680.0 821.5 C680.0 852.1 675.3 871.0 656.3 872.5 L624.7 872.5 C605.7 871.0 601.0 852.1 601.0 821.5 C601.0 790.9 605.7 772.0 624.7 770.5 Z" fill="url(#lshade)"/><path d="M624.7 770.5 L656.3 770.5 C675.3 772.0 680.0 790.9 680.0 821.5 C680.0 852.1 675.3 871.0 656.3 872.5 L624.7 872.5 C605.7 871.0 601.0 852.1 601.0 821.5 C601.0 790.9 605.7 772.0 624.7 770.5 Z" fill="url(#rib)"/><path d="M625.4 1080.0 L656.6 1080.0 C675.3 1081.0 680.0 1094.0 680.0 1115.0 C680.0 1136.0 675.3 1149.0 656.6 1150.0 L625.4 1150.0 C606.7 1149.0 602.0 1136.0 602.0 1115.0 C602.0 1094.0 606.7 1081.0 625.4 1080.0 Z" fill="url(#lg)"/><path d="M625.4 1080.0 L656.6 1080.0 C675.3 1081.0 680.0 1094.0 680.0 1115.0 C680.0 1136.0 675.3 1149.0 656.6 1150.0 L625.4 1150.0 C606.7 1149.0 602.0 1136.0 602.0 1115.0 C602.0 1094.0 606.7 1081.0 625.4 1080.0 Z" fill="url(#lshade)"/><path d="M625.4 1080.0 L656.6 1080.0 C675.3 1081.0 680.0 1094.0 680.0 1115.0 C680.0 1136.0 675.3 1149.0 656.6 1150.0 L625.4 1150.0 C606.7 1149.0 602.0 1136.0 602.0 1115.0 C602.0 1094.0 606.7 1081.0 625.4 1080.0 Z" fill="url(#rib)"/><path d="M148.0 414.5 L172.5 414.5 C187.1 416.2 190.8 436.9 190.8 470.5 C190.8 504.1 187.1 524.8 172.5 526.5 L148.0 526.5 C133.4 524.8 129.7 504.1 129.7 470.5 C129.7 436.9 133.4 416.2 148.0 414.5 Z" fill="url(#lg)"/><path d="M148.0 414.5 L172.5 414.5 C187.1 416.2 190.8 436.9 190.8 470.5 C190.8 504.1 187.1 524.8 172.5 526.5 L148.0 526.5 C133.4 524.8 129.7 504.1 129.7 470.5 C129.7 436.9 133.4 416.2 148.0 414.5 Z" fill="url(#lshade)"/><path d="M148.0 414.5 L172.5 414.5 C187.1 416.2 190.8 436.9 190.8 470.5 C190.8 504.1 187.1 524.8 172.5 526.5 L148.0 526.5 C133.4 524.8 129.7 504.1 129.7 470.5 C129.7 436.9 133.4 416.2 148.0 414.5 Z" fill="url(#rib)"/><rect x="143.0" y="523.5" width="34.0" height="37.0" fill="url(#gdd)"/><rect x="143.0" y="523.5" width="34.0" height="37.0" fill="url(#tass)"/><rect x="140.0" y="523.5" width="40.0" height="7.4" fill="#6e5a0c" opacity=".85"/><path d="M149.0 557.5 L174.7 557.5 C190.1 559.1 194.0 579.1 194.0 611.5 C194.0 643.9 190.1 663.9 174.7 665.5 L149.0 665.5 C133.6 663.9 129.7 643.9 129.7 611.5 C129.7 579.1 133.6 559.1 149.0 557.5 Z" fill="url(#lg)"/><path d="M149.0 557.5 L174.7 557.5 C190.1 559.1 194.0 579.1 194.0 611.5 C194.0 643.9 190.1 663.9 174.7 665.5 L149.0 665.5 C133.6 663.9 129.7 643.9 129.7 611.5 C129.7 579.1 133.6 559.1 149.0 557.5 Z" fill="url(#lshade)"/><path d="M149.0 557.5 L174.7 557.5 C190.1 559.1 194.0 579.1 194.0 611.5 C194.0 643.9 190.1 663.9 174.7 665.5 L149.0 665.5 C133.6 663.9 129.7 643.9 129.7 611.5 C129.7 579.1 133.6 559.1 149.0 557.5 Z" fill="url(#rib)"/><rect x="143.0" y="665.5" width="34.0" height="31.0" fill="url(#gdd)"/><rect x="143.0" y="665.5" width="34.0" height="31.0" fill="url(#tass)"/><rect x="140.0" y="665.5" width="40.0" height="6.2" fill="#6e5a0c" opacity=".85"/><path d="M145.4 696.5 L171.4 696.5 C186.9 698.1 190.8 717.5 190.8 749.0 C190.8 780.5 186.9 799.9 171.4 801.5 L145.4 801.5 C129.9 799.9 126.0 780.5 126.0 749.0 C126.0 717.5 129.9 698.1 145.4 696.5 Z" fill="url(#lg)"/><path d="M145.4 696.5 L171.4 696.5 C186.9 698.1 190.8 717.5 190.8 749.0 C190.8 780.5 186.9 799.9 171.4 801.5 L145.4 801.5 C129.9 799.9 126.0 780.5 126.0 749.0 C126.0 717.5 129.9 698.1 145.4 696.5 Z" fill="url(#lshade)"/><path d="M145.4 696.5 L171.4 696.5 C186.9 698.1 190.8 717.5 190.8 749.0 C190.8 780.5 186.9 799.9 171.4 801.5 L145.4 801.5 C129.9 799.9 126.0 780.5 126.0 749.0 C126.0 717.5 129.9 698.1 145.4 696.5 Z" fill="url(#rib)"/><rect x="143.0" y="801.5" width="34.0" height="30.5" fill="url(#gdd)"/><rect x="143.0" y="801.5" width="34.0" height="30.5" fill="url(#tass)"/><rect x="140.0" y="801.5" width="40.0" height="6.1" fill="#6e5a0c" opacity=".85"/><path d="M389.5 492.5 L419.5 492.5 C437.5 494.4 442.0 518.3 442.0 557.0 C442.0 595.7 437.5 619.6 419.5 621.5 L389.5 621.5 C371.5 619.6 367.0 595.7 367.0 557.0 C367.0 518.3 371.5 494.4 389.5 492.5 Z" fill="url(#lg)"/><path d="M389.5 492.5 L419.5 492.5 C437.5 494.4 442.0 518.3 442.0 557.0 C442.0 595.7 437.5 619.6 419.5 621.5 L389.5 621.5 C371.5 619.6 367.0 595.7 367.0 557.0 C367.0 518.3 371.5 494.4 389.5 492.5 Z" fill="url(#lshade)"/><path d="M389.5 492.5 L419.5 492.5 C437.5 494.4 442.0 518.3 442.0 557.0 C442.0 595.7 437.5 619.6 419.5 621.5 L389.5 621.5 C371.5 619.6 367.0 595.7 367.0 557.0 C367.0 518.3 371.5 494.4 389.5 492.5 Z" fill="url(#rib)"/><rect x="384.0" y="614.5" width="41.0" height="41.0" fill="url(#gdd)"/><rect x="384.0" y="614.5" width="41.0" height="41.0" fill="url(#tass)"/><rect x="381.0" y="614.5" width="47.0" height="8.2" fill="#6e5a0c" opacity=".85"/><path d="M382.9 659.0 L412.6 659.0 C430.5 660.5 435.0 678.7 435.0 708.2 C435.0 737.8 430.5 756.0 412.6 757.5 L382.9 757.5 C365.0 756.0 360.5 737.8 360.5 708.2 C360.5 678.7 365.0 660.5 382.9 659.0 Z" fill="url(#lg)"/><path d="M382.9 659.0 L412.6 659.0 C430.5 660.5 435.0 678.7 435.0 708.2 C435.0 737.8 430.5 756.0 412.6 757.5 L382.9 757.5 C365.0 756.0 360.5 737.8 360.5 708.2 C360.5 678.7 365.0 660.5 382.9 659.0 Z" fill="url(#lshade)"/><path d="M382.9 659.0 L412.6 659.0 C430.5 660.5 435.0 678.7 435.0 708.2 C435.0 737.8 430.5 756.0 412.6 757.5 L382.9 757.5 C365.0 756.0 360.5 737.8 360.5 708.2 C360.5 678.7 365.0 660.5 382.9 659.0 Z" fill="url(#rib)"/><path d="M392.3 811.5 L416.7 811.5 C431.3 812.2 435.0 821.2 435.0 835.8 C435.0 850.3 431.3 859.3 416.7 860.0 L392.3 860.0 C377.7 859.3 374.0 850.3 374.0 835.8 C374.0 821.2 377.7 812.2 392.3 811.5 Z" fill="url(#lg)"/><path d="M392.3 811.5 L416.7 811.5 C431.3 812.2 435.0 821.2 435.0 835.8 C435.0 850.3 431.3 859.3 416.7 860.0 L392.3 860.0 C377.7 859.3 374.0 850.3 374.0 835.8 C374.0 821.2 377.7 812.2 392.3 811.5 Z" fill="url(#lshade)"/><path d="M392.3 811.5 L416.7 811.5 C431.3 812.2 435.0 821.2 435.0 835.8 C435.0 850.3 431.3 859.3 416.7 860.0 L392.3 860.0 C377.7 859.3 374.0 850.3 374.0 835.8 C374.0 821.2 377.7 812.2 392.3 811.5 Z" fill="url(#rib)"/><rect x="0" y="0" width="663" height="140" fill="url(#topshade)"/><g fill="none" stroke-linecap="round" stroke-linejoin="round"><path d="M0.0 294.0 L11.6 287.1 L24.3 279.2 L37.0 272.5 L48.2 264.6 L60.1 258.7 L73.3 251.0 L85.5 243.7 L97.3 237.0 L110.1 228.8 L120.9 222.9 L133.8 215.0 L145.4 207.4 L157.6 201.4 L169.6 193.8 L181.9 187.3 L194.4 179.3 L206.5 173.1 L219.4 164.6 L231.8 157.2 L245.8 151.6 L259.8 146.0 L275.7 139.3 L290.5 133.0 L305.0 127.1 L319.6 121.8 L333.9 115.8 L346.9 109.6 L359.3 102.6 L371.6 96.3 L385.3 91.0 L396.9 84.6 L410.0 78.8 L423.3 72.4 L435.1 66.4 L449.2 61.0 L461.9 54.8 L474.2 48.9 L489.6 43.9 L503.6 39.9 L519.7 34.0 L534.2 30.6 L546.8 23.8 L561.0 17.4 L573.1 12.2 L586.1 5.4 L600.1 -0.3" stroke="#1e1b18" stroke-width="3.8" opacity=".45"/><path d="M0.0 346.0 L11.7 338.2 L23.8 331.9 L36.6 324.2 L47.8 317.6 L60.5 309.8 L72.4 303.1 L85.3 294.7 L97.6 288.4 L109.3 280.7 L122.1 273.0 L133.5 266.2 L146.4 258.6 L157.1 250.9 L169.9 245.0 L182.3 237.0 L196.6 234.9 L209.3 233.9 L223.8 232.7 L237.8 231.2 L251.3 229.6 L266.4 228.9 L280.3 227.9 L294.3 225.5 L307.8 224.7 L322.7 223.9 L335.5 222.4 L349.3 219.9 L364.2 218.8 L378.8 216.7 L391.5 212.6 L406.3 209.4 L419.7 206.3 L433.4 203.9 L448.3 200.0 L461.9 197.6 L476.3 194.6 L489.3 191.8 L504.3 187.5 L517.3 185.3 L531.6 181.3 L545.4 178.7 L561.3 175.2 L575.3 171.0 L590.5 167.7 L605.0 164.6 L619.6 161.1 L634.4 157.6 L647.9 152.9 L663.2 150.2" stroke="#1e1b18" stroke-width="3.8" opacity=".45"/><path d="M0.0 376.0 L13.0 369.3 L24.6 363.4 L37.7 356.3 L49.7 350.1 L62.0 344.4 L74.2 338.2 L87.1 331.4 L99.8 324.0 L111.8 317.6 L123.9 311.7 L137.8 305.4 L149.9 298.6 L162.8 292.7 L175.3 286.1 L187.8 280.3 L199.0 273.0 L212.2 266.5 L224.6 260.8 L237.5 253.9 L249.4 246.0 L261.9 240.2 L274.8 234.0 L287.9 226.8 L300.1 220.0 L312.9 212.9 L325.0 206.3 L337.3 198.9 L349.7 192.4 L362.0 185.9 L374.1 179.6 L387.9 172.7 L400.7 165.3 L412.9 159.4 L424.5 151.6 L440.7 151.4 L456.1 150.2 L470.4 150.4 L486.1 150.2 L500.8 148.6 L516.7 149.1 L532.0 147.1 L546.0 147.7 L562.0 146.6 L576.5 146.3 L590.5 144.5 L606.0 141.9 L620.8 139.6 L634.3 138.1 L648.6 135.2 L662.4 133.8" stroke="#1e1b18" stroke-width="3.8" opacity=".45"/><path d="M67.0 440.0 L77.7 430.4 L86.9 420.8 L97.6 411.0 L107.8 401.1 L118.5 391.2 L129.1 381.2 L140.1 371.6 L150.1 361.7 L160.3 351.9 L170.2 342.7 L181.6 333.5 L191.1 324.2 L201.9 314.3 L211.3 303.8 L224.2 296.1 L236.8 289.3 L248.2 283.1 L261.1 275.7 L272.3 268.0 L285.7 260.6 L297.1 253.9 L310.3 246.2 L322.3 239.8 L333.5 233.3 L345.5 225.7 L358.3 218.8 L370.1 210.8 L382.0 204.6 L395.7 196.6 L409.6 194.6 L424.7 191.4 L440.9 189.5 L456.0 185.8 L470.2 183.3 L485.1 180.6 L500.3 177.7 L516.0 175.8 L531.5 173.3 L546.8 170.0 L560.6 169.3 L575.1 167.3 L589.9 164.8 L604.9 163.5 L618.4 162.7 L634.0 161.6 L649.1 159.6 L663.3 158.5" stroke="#1e1b18" stroke-width="3.8" opacity=".45"/><path d="M285.0 440.0 L295.4 429.7 L307.1 418.5 L316.8 408.1 L327.3 397.9 L339.2 387.7 L349.1 377.3 L360.9 367.3 L370.6 356.7 L381.8 345.6 L392.5 335.9 L403.1 324.6 L414.7 314.0 L425.2 304.6 L437.4 295.8 L450.0 286.8 L460.6 277.6 L474.0 267.8 L484.8 259.9 L496.8 250.2 L509.8 240.9 L522.5 232.6 L533.6 224.0 L545.9 214.5 L558.2 206.8" stroke="#1e1b18" stroke-width="3.8" opacity=".45"/><path d="M455.0 440.0 L465.9 431.4 L478.3 422.9 L489.1 414.7 L501.0 406.8 L512.2 397.8 L523.3 388.8 L534.8 381.0 L546.4 372.0 L558.6 363.5" stroke="#1e1b18" stroke-width="3.8" opacity=".45"/><path d="M18.0 0.0 L16.8 15.0 L16.7 29.3 L15.5 44.0 L16.3 59.0 L14.3 73.8" stroke="#1e1b18" stroke-width="3.8" opacity=".45"/><path d="M60.0 0.0 L58.5 18.1 L57.5 35.6" stroke="#1e1b18" stroke-width="3.8" opacity=".45"/><path d="M206.0 0.0 L204.9 14.6 L202.2 27.2 L200.3 42.6 L198.2 56.4 L196.6 69.7 L194.5 84.3 L193.1 98.0 L192.0 111.6 L189.6 126.7 L187.2 140.0 L185.9 153.3 L184.4 168.1 L181.8 181.7 L182.1 195.8 L180.5 210.9 L179.7 225.3 L178.7 240.1 L179.1 253.4 L177.6 268.5 L176.6 282.8 L176.8 296.1 L175.3 311.5 L175.2 325.3 L174.3 339.9 L174.2 353.3 L173.7 368.0 L172.3 383.1 L171.8 396.7 L172.0 410.8 L171.1 425.3 L170.8 439.3" stroke="#1e1b18" stroke-width="3.8" opacity=".45"/><path d="M176.0 440.0 L179.7 426.0 L182.8 411.9 L184.3 398.8 L187.5 384.5 L191.7 370.4 L194.6 356.9 L197.7 342.9 L199.5 329.1 L202.2 315.0 L206.2 301.0 L209.1 287.6 L212.5 273.7 L217.2 258.8 L222.1 246.8 L226.2 232.0 L231.5 218.9 L235.1 205.8 L240.5 193.0 L245.9 178.2 L250.7 165.7 L254.7 152.4 L264.9 140.3 L274.1 127.8 L285.2 115.0 L294.7 103.7 L304.0 91.7 L312.2 78.3 L321.6 65.3 L329.5 52.1 L338.3 38.6 L346.3 25.6 L355.4 13.2 L363.5 -0.2" stroke="#1e1b18" stroke-width="3.8" opacity=".45"/><path d="M470.0 0.0 L478.2 11.3 L487.5 24.1 L496.6 35.3 L505.2 48.2 L515.2 59.2 L523.7 71.6 L532.2 83.5 L540.6 94.6 L550.2 107.1 L558.6 119.9 L567.5 131.7 L576.3 143.0" stroke="#1e1b18" stroke-width="3.8" opacity=".45"/><path d="M0.0 675.0 L5.1 661.0 L8.4 646.5 L13.6 632.9 L17.8 619.3 L21.6 606.2 L26.9 592.4 L30.5 578.2 L34.6 563.6 L39.3 551.1 L44.3 535.8 L48.0 523.0 L52.4 507.9 L55.8 494.5 L61.3 481.4 L68.2 467.3 L74.2 451.7 L82.0 438.0 L87.8 423.6 L94.8 409.3 L102.9 394.5 L108.8 380.4 L113.2 365.4 L117.4 351.3 L122.7 336.5 L126.5 321.8 L132.4 308.0 L135.7 293.6 L140.6 279.2 L144.8 265.0 L149.6 249.9 L152.5 235.8 L155.7 220.6 L159.2 204.7 L162.4 189.8 L165.7 175.7 L169.4 159.4 L172.2 145.8 L175.3 130.5" stroke="#1e1b18" stroke-width="3.8" opacity=".45"/><path d="M88.0 639.0 L95.7 625.9 L102.4 611.9 L109.0 598.9 L116.3 584.6 L123.2 571.3 L130.7 557.9 L138.2 544.9 L144.8 530.9 L152.2 516.6 L154.0 501.0 L157.1 485.8 L159.4 471.8 L162.8 456.8 L165.0 441.6 L167.2 426.0 L171.2 410.4 L174.1 395.1 L176.7 380.0 L176.5 394.5 L175.6 410.7 L175.4 425.7 L176.1 440.6" stroke="#1e1b18" stroke-width="3.8" opacity=".45"/><path d="M121.0 623.0 L131.3 613.5 L143.0 604.2 L153.7 594.0 L165.5 584.9 L176.4 574.2 L187.4 564.4 L198.0 555.8 L209.4 545.5 L221.1 536.8 L231.6 526.5 L242.8 517.2 L252.7 505.4 L260.5 493.9 L270.2 482.4 L278.9 470.5 L287.7 459.9 L297.7 449.2 L306.4 436.9 L315.9 426.2 L324.9 414.3 L333.2 402.4 L343.3 390.7 L352.4 379.8 L361.3 368.6 L370.9 356.5 L380.4 345.2 L390.2 334.3 L399.9 323.0 L409.5 311.8 L419.4 300.2" stroke="#1e1b18" stroke-width="3.8" opacity=".45"/><path d="M285.0 751.0 L290.3 738.3 L294.4 725.1 L299.4 711.7 L304.6 697.3 L310.2 685.2 L315.2 671.8 L319.2 658.0 L325.0 645.2 L328.8 631.0 L333.9 617.8 L339.2 604.0 L343.9 591.9 L349.0 577.8 L358.8 566.4 L367.5 556.4 L377.7 544.6 L388.1 533.1 L396.8 522.2 L407.4 512.0 L416.9 500.0 L426.6 488.6 L435.0 477.8 L444.7 467.0 L455.8 456.1 L466.1 444.4 L476.3 434.2 L485.9 423.8 L496.3 412.9 L506.6 402.3 L517.8 391.3 L528.5 380.7 L538.0 370.6 L549.0 360.1 L559.9 350.4" stroke="#1e1b18" stroke-width="3.8" opacity=".45"/><path d="M404.0 566.0 L419.9 563.0 L437.2 560.6 L453.1 557.6 L469.0 554.2 L486.1 551.3 L500.1 547.2 L512.6 543.7 L527.6 540.7 L541.2 538.5 L554.6 534.2 L568.5 531.9 L582.0 528.1 L594.2 524.7 L608.3 521.4 L621.5 518.6 L635.0 514.2 L650.1 511.8 L662.5 507.9" stroke="#1e1b18" stroke-width="3.8" opacity=".45"/><path d="M0.0 560.0 L12.8 553.8 L26.2 548.5 L38.7 543.0 L51.2 537.1 L64.9 532.0 L76.9 525.3 L90.2 519.3 L104.4 514.0 L117.1 507.9 L131.4 501.5 L145.6 494.9 L158.6 488.6 L172.3 483.1 L186.3 475.6 L199.6 470.1" stroke="#1e1b18" stroke-width="3.8" opacity=".45"/><path d="M112.0 0.0 L111.9 14.4 L111.6 30.7 L111.0 44.9 L111.3 60.2 L110.8 74.5 L110.8 89.5 L110.8 105.1 L109.5 120.3 L108.7 135.0 L106.4 148.8 L106.4 163.3 L104.8 177.1 L103.5 190.8 L101.7 206.3 L100.4 220.1" stroke="#1e1b18" stroke-width="3.8" opacity=".45"/><path d="M0.0 294.0 L11.6 287.1 L24.3 279.2 L37.0 272.5 L48.2 264.6 L60.1 258.7 L73.3 251.0 L85.5 243.7 L97.3 237.0 L110.1 228.8 L120.9 222.9 L133.8 215.0 L145.4 207.4 L157.6 201.4 L169.6 193.8 L181.9 187.3 L194.4 179.3 L206.5 173.1 L219.4 164.6 L231.8 157.2 L245.8 151.6 L259.8 146.0 L275.7 139.3 L290.5 133.0 L305.0 127.1 L319.6 121.8 L333.9 115.8 L346.9 109.6 L359.3 102.6 L371.6 96.3 L385.3 91.0 L396.9 84.6 L410.0 78.8 L423.3 72.4 L435.1 66.4 L449.2 61.0 L461.9 54.8 L474.2 48.9 L489.6 43.9 L503.6 39.9 L519.7 34.0 L534.2 30.6 L546.8 23.8 L561.0 17.4 L573.1 12.2 L586.1 5.4 L600.1 -0.3" stroke="#a9a59d" stroke-width="2.1" opacity=".85"/><path d="M0.0 346.0 L11.7 338.2 L23.8 331.9 L36.6 324.2 L47.8 317.6 L60.5 309.8 L72.4 303.1 L85.3 294.7 L97.6 288.4 L109.3 280.7 L122.1 273.0 L133.5 266.2 L146.4 258.6 L157.1 250.9 L169.9 245.0 L182.3 237.0 L196.6 234.9 L209.3 233.9 L223.8 232.7 L237.8 231.2 L251.3 229.6 L266.4 228.9 L280.3 227.9 L294.3 225.5 L307.8 224.7 L322.7 223.9 L335.5 222.4 L349.3 219.9 L364.2 218.8 L378.8 216.7 L391.5 212.6 L406.3 209.4 L419.7 206.3 L433.4 203.9 L448.3 200.0 L461.9 197.6 L476.3 194.6 L489.3 191.8 L504.3 187.5 L517.3 185.3 L531.6 181.3 L545.4 178.7 L561.3 175.2 L575.3 171.0 L590.5 167.7 L605.0 164.6 L619.6 161.1 L634.4 157.6 L647.9 152.9 L663.2 150.2" stroke="#a9a59d" stroke-width="2.1" opacity=".85"/><path d="M0.0 376.0 L13.0 369.3 L24.6 363.4 L37.7 356.3 L49.7 350.1 L62.0 344.4 L74.2 338.2 L87.1 331.4 L99.8 324.0 L111.8 317.6 L123.9 311.7 L137.8 305.4 L149.9 298.6 L162.8 292.7 L175.3 286.1 L187.8 280.3 L199.0 273.0 L212.2 266.5 L224.6 260.8 L237.5 253.9 L249.4 246.0 L261.9 240.2 L274.8 234.0 L287.9 226.8 L300.1 220.0 L312.9 212.9 L325.0 206.3 L337.3 198.9 L349.7 192.4 L362.0 185.9 L374.1 179.6 L387.9 172.7 L400.7 165.3 L412.9 159.4 L424.5 151.6 L440.7 151.4 L456.1 150.2 L470.4 150.4 L486.1 150.2 L500.8 148.6 L516.7 149.1 L532.0 147.1 L546.0 147.7 L562.0 146.6 L576.5 146.3 L590.5 144.5 L606.0 141.9 L620.8 139.6 L634.3 138.1 L648.6 135.2 L662.4 133.8" stroke="#a9a59d" stroke-width="2.1" opacity=".85"/><path d="M67.0 440.0 L77.7 430.4 L86.9 420.8 L97.6 411.0 L107.8 401.1 L118.5 391.2 L129.1 381.2 L140.1 371.6 L150.1 361.7 L160.3 351.9 L170.2 342.7 L181.6 333.5 L191.1 324.2 L201.9 314.3 L211.3 303.8 L224.2 296.1 L236.8 289.3 L248.2 283.1 L261.1 275.7 L272.3 268.0 L285.7 260.6 L297.1 253.9 L310.3 246.2 L322.3 239.8 L333.5 233.3 L345.5 225.7 L358.3 218.8 L370.1 210.8 L382.0 204.6 L395.7 196.6 L409.6 194.6 L424.7 191.4 L440.9 189.5 L456.0 185.8 L470.2 183.3 L485.1 180.6 L500.3 177.7 L516.0 175.8 L531.5 173.3 L546.8 170.0 L560.6 169.3 L575.1 167.3 L589.9 164.8 L604.9 163.5 L618.4 162.7 L634.0 161.6 L649.1 159.6 L663.3 158.5" stroke="#a9a59d" stroke-width="2.1" opacity=".85"/><path d="M285.0 440.0 L295.4 429.7 L307.1 418.5 L316.8 408.1 L327.3 397.9 L339.2 387.7 L349.1 377.3 L360.9 367.3 L370.6 356.7 L381.8 345.6 L392.5 335.9 L403.1 324.6 L414.7 314.0 L425.2 304.6 L437.4 295.8 L450.0 286.8 L460.6 277.6 L474.0 267.8 L484.8 259.9 L496.8 250.2 L509.8 240.9 L522.5 232.6 L533.6 224.0 L545.9 214.5 L558.2 206.8" stroke="#a9a59d" stroke-width="2.1" opacity=".85"/><path d="M455.0 440.0 L465.9 431.4 L478.3 422.9 L489.1 414.7 L501.0 406.8 L512.2 397.8 L523.3 388.8 L534.8 381.0 L546.4 372.0 L558.6 363.5" stroke="#a9a59d" stroke-width="2.1" opacity=".85"/><path d="M18.0 0.0 L16.8 15.0 L16.7 29.3 L15.5 44.0 L16.3 59.0 L14.3 73.8" stroke="#a9a59d" stroke-width="2.1" opacity=".85"/><path d="M60.0 0.0 L58.5 18.1 L57.5 35.6" stroke="#a9a59d" stroke-width="2.1" opacity=".85"/><path d="M206.0 0.0 L204.9 14.6 L202.2 27.2 L200.3 42.6 L198.2 56.4 L196.6 69.7 L194.5 84.3 L193.1 98.0 L192.0 111.6 L189.6 126.7 L187.2 140.0 L185.9 153.3 L184.4 168.1 L181.8 181.7 L182.1 195.8 L180.5 210.9 L179.7 225.3 L178.7 240.1 L179.1 253.4 L177.6 268.5 L176.6 282.8 L176.8 296.1 L175.3 311.5 L175.2 325.3 L174.3 339.9 L174.2 353.3 L173.7 368.0 L172.3 383.1 L171.8 396.7 L172.0 410.8 L171.1 425.3 L170.8 439.3" stroke="#a9a59d" stroke-width="2.1" opacity=".85"/><path d="M176.0 440.0 L179.7 426.0 L182.8 411.9 L184.3 398.8 L187.5 384.5 L191.7 370.4 L194.6 356.9 L197.7 342.9 L199.5 329.1 L202.2 315.0 L206.2 301.0 L209.1 287.6 L212.5 273.7 L217.2 258.8 L222.1 246.8 L226.2 232.0 L231.5 218.9 L235.1 205.8 L240.5 193.0 L245.9 178.2 L250.7 165.7 L254.7 152.4 L264.9 140.3 L274.1 127.8 L285.2 115.0 L294.7 103.7 L304.0 91.7 L312.2 78.3 L321.6 65.3 L329.5 52.1 L338.3 38.6 L346.3 25.6 L355.4 13.2 L363.5 -0.2" stroke="#a9a59d" stroke-width="2.1" opacity=".85"/><path d="M470.0 0.0 L478.2 11.3 L487.5 24.1 L496.6 35.3 L505.2 48.2 L515.2 59.2 L523.7 71.6 L532.2 83.5 L540.6 94.6 L550.2 107.1 L558.6 119.9 L567.5 131.7 L576.3 143.0" stroke="#a9a59d" stroke-width="2.1" opacity=".85"/><path d="M0.0 675.0 L5.1 661.0 L8.4 646.5 L13.6 632.9 L17.8 619.3 L21.6 606.2 L26.9 592.4 L30.5 578.2 L34.6 563.6 L39.3 551.1 L44.3 535.8 L48.0 523.0 L52.4 507.9 L55.8 494.5 L61.3 481.4 L68.2 467.3 L74.2 451.7 L82.0 438.0 L87.8 423.6 L94.8 409.3 L102.9 394.5 L108.8 380.4 L113.2 365.4 L117.4 351.3 L122.7 336.5 L126.5 321.8 L132.4 308.0 L135.7 293.6 L140.6 279.2 L144.8 265.0 L149.6 249.9 L152.5 235.8 L155.7 220.6 L159.2 204.7 L162.4 189.8 L165.7 175.7 L169.4 159.4 L172.2 145.8 L175.3 130.5" stroke="#a9a59d" stroke-width="2.1" opacity=".85"/><path d="M88.0 639.0 L95.7 625.9 L102.4 611.9 L109.0 598.9 L116.3 584.6 L123.2 571.3 L130.7 557.9 L138.2 544.9 L144.8 530.9 L152.2 516.6 L154.0 501.0 L157.1 485.8 L159.4 471.8 L162.8 456.8 L165.0 441.6 L167.2 426.0 L171.2 410.4 L174.1 395.1 L176.7 380.0 L176.5 394.5 L175.6 410.7 L175.4 425.7 L176.1 440.6" stroke="#a9a59d" stroke-width="2.1" opacity=".85"/><path d="M121.0 623.0 L131.3 613.5 L143.0 604.2 L153.7 594.0 L165.5 584.9 L176.4 574.2 L187.4 564.4 L198.0 555.8 L209.4 545.5 L221.1 536.8 L231.6 526.5 L242.8 517.2 L252.7 505.4 L260.5 493.9 L270.2 482.4 L278.9 470.5 L287.7 459.9 L297.7 449.2 L306.4 436.9 L315.9 426.2 L324.9 414.3 L333.2 402.4 L343.3 390.7 L352.4 379.8 L361.3 368.6 L370.9 356.5 L380.4 345.2 L390.2 334.3 L399.9 323.0 L409.5 311.8 L419.4 300.2" stroke="#a9a59d" stroke-width="2.1" opacity=".85"/><path d="M285.0 751.0 L290.3 738.3 L294.4 725.1 L299.4 711.7 L304.6 697.3 L310.2 685.2 L315.2 671.8 L319.2 658.0 L325.0 645.2 L328.8 631.0 L333.9 617.8 L339.2 604.0 L343.9 591.9 L349.0 577.8 L358.8 566.4 L367.5 556.4 L377.7 544.6 L388.1 533.1 L396.8 522.2 L407.4 512.0 L416.9 500.0 L426.6 488.6 L435.0 477.8 L444.7 467.0 L455.8 456.1 L466.1 444.4 L476.3 434.2 L485.9 423.8 L496.3 412.9 L506.6 402.3 L517.8 391.3 L528.5 380.7 L538.0 370.6 L549.0 360.1 L559.9 350.4" stroke="#a9a59d" stroke-width="2.1" opacity=".85"/><path d="M404.0 566.0 L419.9 563.0 L437.2 560.6 L453.1 557.6 L469.0 554.2 L486.1 551.3 L500.1 547.2 L512.6 543.7 L527.6 540.7 L541.2 538.5 L554.6 534.2 L568.5 531.9 L582.0 528.1 L594.2 524.7 L608.3 521.4 L621.5 518.6 L635.0 514.2 L650.1 511.8 L662.5 507.9" stroke="#a9a59d" stroke-width="2.1" opacity=".85"/><path d="M0.0 560.0 L12.8 553.8 L26.2 548.5 L38.7 543.0 L51.2 537.1 L64.9 532.0 L76.9 525.3 L90.2 519.3 L104.4 514.0 L117.1 507.9 L131.4 501.5 L145.6 494.9 L158.6 488.6 L172.3 483.1 L186.3 475.6 L199.6 470.1" stroke="#a9a59d" stroke-width="2.1" opacity=".85"/><path d="M112.0 0.0 L111.9 14.4 L111.6 30.7 L111.0 44.9 L111.3 60.2 L110.8 74.5 L110.8 89.5 L110.8 105.1 L109.5 120.3 L108.7 135.0 L106.4 148.8 L106.4 163.3 L104.8 177.1 L103.5 190.8 L101.7 206.3 L100.4 220.1" stroke="#a9a59d" stroke-width="2.1" opacity=".85"/><path d="M48.2 264.6 L52.7 266.8M60.1 258.7 L60.3 253.7M85.5 243.7 L90.0 246.0M120.9 222.9 L121.1 217.9M157.6 201.4 L157.8 196.4M206.5 173.1 L206.7 168.1M231.8 157.2 L232.0 152.2M290.5 133.0 L291.4 128.1M396.9 84.6 L401.2 87.3M423.3 72.4 L427.6 75.1M461.9 54.8 L466.1 57.4M503.6 39.9 L504.9 35.1M561.0 17.4 L561.8 12.5M586.1 5.4 L590.3 8.1" stroke="#2a2622" stroke-width="2" opacity=".6"/><path d="M11.7 338.2 L16.2 340.4M47.8 317.6 L48.0 312.6M85.3 294.7 L89.8 296.9M109.3 280.7 L113.8 282.9M133.5 266.2 L138.0 268.4M146.4 258.6 L150.8 260.8M157.1 250.9 L161.6 253.1M196.6 234.9 L199.7 238.8M237.8 231.2 L240.1 226.7M251.3 229.6 L253.5 225.1M322.7 223.9 L325.8 227.9M378.8 216.7 L382.3 220.2M433.4 203.9 L437.0 207.4M448.3 200.0 L451.9 203.5M461.9 197.6 L463.6 193.0M476.3 194.6 L478.0 189.9M561.3 175.2 L564.9 178.6M575.3 171.0 L578.9 174.5M619.6 161.1 L623.2 164.6" stroke="#2a2622" stroke-width="2" opacity=".6"/><path d="M13.0 369.3 L17.3 371.8M24.6 363.4 L25.1 358.4M37.7 356.3 L38.2 351.3M49.7 350.1 L54.0 352.6M62.0 344.4 L62.5 339.4M111.8 317.6 L112.3 312.6M137.8 305.4 L142.1 307.9M187.8 280.3 L192.1 282.8M199.0 273.0 L203.3 275.5M224.6 260.8 L229.0 263.3M249.4 246.0 L249.7 241.1M300.1 220.0 L304.5 222.5M312.9 212.9 L313.2 207.9M337.3 198.9 L337.7 193.9M400.7 165.3 L401.1 160.3M412.9 159.4 L417.3 161.8M440.7 151.4 L443.6 155.5M456.1 150.2 L458.9 154.3M516.7 149.1 L519.5 153.2M532.0 147.1 L534.6 142.8M546.0 147.7 L548.9 151.8M562.0 146.6 L564.9 150.7M576.5 146.3 L579.4 150.4M590.5 144.5 L593.8 148.3M606.0 141.9 L608.1 137.3M662.4 133.8 L665.7 137.6" stroke="#2a2622" stroke-width="2" opacity=".6"/><path d="M77.7 430.4 L76.8 425.5M107.8 401.1 L112.6 402.3M118.5 391.2 L117.6 386.2M129.1 381.2 L128.2 376.3M140.1 371.6 L139.1 366.6M150.1 361.7 L149.2 356.8M160.3 351.9 L159.4 347.0M201.9 314.3 L206.8 315.6M248.2 283.1 L252.7 285.4M261.1 275.7 L265.5 278.0M272.3 268.0 L276.7 270.3M297.1 253.9 L301.6 256.2M322.3 239.8 L326.8 242.1M358.3 218.8 L358.5 213.8M370.1 210.8 L374.5 213.1M395.7 196.6 L400.2 198.9M424.7 191.4 L428.1 195.1M440.9 189.5 L442.8 184.8M575.1 167.3 L577.4 162.8M604.9 163.5 L608.0 167.4M618.4 162.7 L621.5 166.6M634.0 161.6 L637.1 165.5M649.1 159.6 L651.4 155.1" stroke="#2a2622" stroke-width="2" opacity=".6"/><path d="M295.4 429.7 L300.3 430.9M307.1 418.5 L312.0 419.6M316.8 408.1 L315.8 403.2M327.3 397.9 L332.2 399.0M339.2 387.7 L338.2 382.8M370.6 356.7 L375.5 357.9M392.5 335.9 L391.5 331.0M403.1 324.6 L407.9 325.8M437.4 295.8 L442.1 297.6M496.8 250.2 L496.5 245.3M533.6 224.0 L538.3 225.8M558.2 206.8 L557.9 201.8" stroke="#2a2622" stroke-width="2" opacity=".6"/><path d="M465.9 431.4 L470.6 433.2M512.2 397.8 L516.9 399.6M558.6 363.5 L558.3 358.5" stroke="#2a2622" stroke-width="2" opacity=".6"/><path d="M16.8 15.0 L12.4 17.5M16.7 29.3 L12.4 31.8M14.3 73.8 L18.4 76.7" stroke="#2a2622" stroke-width="2" opacity=".6"/><path d="M57.5 35.6 L53.0 37.9" stroke="#2a2622" stroke-width="2" opacity=".6"/><path d="M204.9 14.6 L208.8 17.8M202.2 27.2 L197.7 29.4M194.5 84.3 L190.0 86.4M193.1 98.0 L196.9 101.3M192.0 111.6 L187.4 113.7M189.6 126.7 L193.5 129.9M185.9 153.3 L181.3 155.4M184.4 168.1 L179.8 170.2M180.5 210.9 L176.1 213.4M179.7 225.3 L183.8 228.2M178.7 240.1 L174.4 242.6M179.1 253.4 L174.8 255.9M174.3 339.9 L178.4 342.7M172.3 383.1 L168.0 385.6M172.0 410.8 L167.7 413.3M171.1 425.3 L175.2 428.2M170.8 439.3 L166.4 441.8" stroke="#2a2622" stroke-width="2" opacity=".6"/><path d="M182.8 411.9 L187.4 410.1M184.3 398.8 L180.8 395.3M194.6 356.9 L199.3 355.1M199.5 329.1 L196.0 325.6M202.2 315.0 L206.9 313.2M209.1 287.6 L205.6 284.1M231.5 218.9 L228.4 214.9M250.7 165.7 L255.6 164.6M254.7 152.4 L251.6 148.4M274.1 127.8 L272.5 123.0M294.7 103.7 L299.6 104.2M304.0 91.7 L308.9 92.2M312.2 78.3 L310.1 73.7M329.5 52.1 L327.5 47.6M346.3 25.6 L344.3 21.0" stroke="#2a2622" stroke-width="2" opacity=".6"/><path d="M487.5 24.1 L485.7 28.8M505.2 48.2 L510.1 47.9M523.7 71.6 L522.0 76.3M558.6 119.9 L563.6 119.6" stroke="#2a2622" stroke-width="2" opacity=".6"/><path d="M5.1 661.0 L1.9 657.2M8.4 646.5 L13.2 645.2M13.6 632.9 L18.4 631.6M17.8 619.3 L22.6 618.0M21.6 606.2 L18.4 602.4M30.5 578.2 L27.3 574.3M34.6 563.6 L39.4 562.3M44.3 535.8 L41.1 531.9M48.0 523.0 L52.8 521.7M55.8 494.5 L52.6 490.7M61.3 481.4 L58.1 477.5M68.2 467.3 L73.1 466.6M74.2 451.7 L71.5 447.4M82.0 438.0 L79.4 433.8M108.8 380.4 L106.1 376.2M126.5 321.8 L131.3 320.5M144.8 265.0 L149.6 263.7M149.6 249.9 L154.4 248.6M152.5 235.8 L157.1 234.0M159.2 204.7 L163.9 203.0M162.4 189.8 L158.8 186.2M169.4 159.4 L165.9 155.9M172.2 145.8 L176.9 144.0" stroke="#2a2622" stroke-width="2" opacity=".6"/><path d="M95.7 625.9 L93.3 621.6M102.4 611.9 L107.4 611.4M109.0 598.9 L106.5 594.5M123.2 571.3 L128.2 570.9M138.2 544.9 L143.2 544.5M144.8 530.9 L149.8 530.5M152.2 516.6 L149.7 512.3M162.8 456.8 L159.2 453.4M175.6 410.7 L179.8 413.4M175.4 425.7 L179.6 428.4" stroke="#2a2622" stroke-width="2" opacity=".6"/><path d="M143.0 604.2 L147.8 605.7M176.4 574.2 L175.7 569.3M209.4 545.5 L208.7 540.6M252.7 505.4 L257.7 506.0M260.5 493.9 L265.5 494.4M270.2 482.4 L268.6 477.7M315.9 426.2 L314.3 421.4M333.2 402.4 L331.6 397.7M343.3 390.7 L341.6 385.9M361.3 368.6 L359.8 363.8M370.9 356.5 L369.4 351.7M399.9 323.0 L404.9 323.7M419.4 300.2 L417.9 295.4" stroke="#2a2622" stroke-width="2" opacity=".6"/><path d="M290.3 738.3 L295.2 737.2M294.4 725.1 L299.3 724.0M319.2 658.0 L324.1 656.9M328.8 631.0 L333.7 629.9M358.8 566.4 L363.7 567.1M367.5 556.4 L372.5 557.2M388.1 533.1 L386.7 528.3M407.4 512.0 L412.4 512.7M426.6 488.6 L431.6 489.3M435.0 477.8 L440.0 478.5M455.8 456.1 L454.3 451.3M466.1 444.4 L465.0 439.6M476.3 434.2 L475.1 429.3M517.8 391.3 L522.7 392.2M528.5 380.7 L527.3 375.9M538.0 370.6 L542.8 371.8M559.9 350.4 L564.7 351.6" stroke="#2a2622" stroke-width="2" opacity=".6"/><path d="M486.1 551.3 L488.0 546.7M500.1 547.2 L503.7 550.7M541.2 538.5 L542.8 533.7M568.5 531.9 L570.1 527.2M594.2 524.7 L595.8 520.0M621.5 518.6 L625.2 522.1M635.0 514.2 L636.6 509.5M650.1 511.8 L651.7 507.1" stroke="#2a2622" stroke-width="2" opacity=".6"/><path d="M26.2 548.5 L26.9 543.5M38.7 543.0 L39.4 538.1M64.9 532.0 L69.1 534.7M90.2 519.3 L94.3 522.1M104.4 514.0 L105.1 509.0M131.4 501.5 L132.1 496.5M145.6 494.9 L146.3 490.0M186.3 475.6 L190.5 478.3M199.6 470.1 L200.3 465.2" stroke="#2a2622" stroke-width="2" opacity=".6"/><path d="M110.8 105.1 L106.6 107.8M104.8 177.1 L108.7 180.2M100.4 220.1 L96.0 222.3" stroke="#2a2622" stroke-width="2" opacity=".6"/></g><path d="M0 738 Q130 785 270 838" stroke="#1e1b18" stroke-width="8" fill="none" opacity=".5"/><path d="M0 738 Q130 785 270 838" stroke="#b9ad95" stroke-width="5" fill="none" opacity=".9"/></svg>
<div class="a" style="left:39px;top:50px;width:31px;height:31px;background:#f25022"></div><div class="a" style="left:73px;top:50px;width:31px;height:31px;background:#7fba00"></div><div class="a" style="left:39px;top:84px;width:31px;height:31px;background:#00a4ef"></div><div class="a" style="left:73px;top:84px;width:31px;height:31px;background:#ffb900"></div>
<div class="t" style="left:120.5px;top:43.2px;font-size:38px;line-height:40px;color:#fff;-webkit-text-stroke:1.1px #fff">Microsoft</div>
<div class="t" style="left:120.5px;top:79.6px;font-size:38px;line-height:40px;color:#fff;-webkit-text-stroke:1.1px #fff">Bing</div>
<div class="a" style="left:548.5px;top:46.5px;width:72px;height:72px;border-radius:50%;background:rgba(38,34,34,.92)"></div>
<svg class="a" style="left:548.5px;top:46.5px" width="72" height="72" viewBox="0 0 72 72"><g transform="translate(36,36)"><path d="M14.01 -3.73 L19.80 -2.79 L19.80 2.79 L14.01 3.73 L12.54 7.27 L15.98 12.03 L12.03 15.98 L7.27 12.54 L3.73 14.01 L2.79 19.80 L-2.79 19.80 L-3.73 14.01 L-7.27 12.54 L-12.03 15.98 L-15.98 12.03 L-12.54 7.27 L-14.01 3.73 L-19.80 2.79 L-19.80 -2.79 L-14.01 -3.73 L-12.54 -7.27 L-15.98 -12.03 L-12.03 -15.98 L-7.27 -12.54 L-3.73 -14.01 L-2.79 -19.80 L2.79 -19.80 L3.73 -14.01 L7.27 -12.54 L12.03 -15.98 L15.98 -12.03 L12.54 -7.27 Z" fill="none" stroke="#fff" stroke-width="2.8" stroke-linejoin="round"/><circle r="7.5" fill="none" stroke="#fff" stroke-width="3"/></g></svg>
<div class="a" style="left:548px;top:166px;width:72px;height:72px;border-radius:50%;background:rgba(40,35,33,.94)"></div>
<div class="a" style="left:580.5px;top:183px;width:8px;height:8px;border-radius:2px;background:#f4f4f4"></div>
<div class="a" style="left:580.5px;top:199.5px;width:8px;height:24px;border-radius:1.5px;background:#f4f4f4"></div>
<div class="a" style="left:174.7px;top:752.7px;width:312px;height:54.5px;border-radius:27px;background:rgba(30,26,26,.93)"></div>
<div class="t" style="left:174.7px;top:752.7px;width:312px;text-align:center;font-size:25px;line-height:54px;color:#fff">Trending on Bing</div>
<div class="a" style="left:87.2px;top:831.8px;width:486.5px;height:254.7px;border-radius:13px;overflow:hidden;background:#1b1b1d"><svg class="a" style="left:0;top:46.5px" width="487" height="209" viewBox="0 0 487 209"><rect width="487" height="209" fill="url(#sky)"/><g filter="url(#bl4)"><ellipse cx="280" cy="50" rx="300" ry="10" fill="#7a6e62" opacity=".38"/><ellipse cx="380" cy="64" rx="150" ry="9" fill="#7a6a58" opacity=".5"/></g><rect x="0" y="34" width="487" height="46" filter="url(#specks)" opacity=".9"/><path d="M0 58 Q100 50 200 62 T487 78 L487 209 L0 209 Z" fill="#17171b" opacity=".9"/><rect x="0" y="80" width="487" height="90" filter="url(#specks)" opacity=".4" mask="url(#spmask)"/><g fill="#85858f" opacity=".42" filter="url(#bl1)"><path d="M72 190 L72 176 Q92 140 112 176 L112 190 Z M84 178 L100 178 L100 190 L84 190 Z" fill-rule="evenodd"/><path d="M120 150 L174 150 L166 190 L150 170 L138 190 Z"/><path d="M187 146 L232 146 L214 172 L214 192 L204 192 L204 172 Z"/><rect x="252" y="150" width="17" height="55"/><rect x="301" y="156" width="18" height="50"/><path d="M337 209 L337 180 Q364 152 392 180 L392 209 Z M352 186 L377 186 L377 209 L352 209 Z" fill-rule="evenodd"/><path d="M415 209 L415 190 Q450 165 487 190 L487 209 Z M432 194 L470 194 L470 209 L432 209 Z" fill-rule="evenodd"/></g></svg><div class="a" style="left:0;top:0;width:487px;height:46.5px;background:#211d1d"></div><div class="t" style="left:14px;top:2px;font-size:23.7px;line-height:40px;color:#fff">20 ans de prison pour un acteur...</div></div>
<div class="t" style="left:572px;top:1008px;font-size:18px;line-height:22px;color:#8a8a8a">oft Bing</div>
<div class="a" style="left:0;top:875px;width:65.7px;height:181px;border-radius:0 8px 8px 0;background:rgba(40,44,50,.45)"></div>
<div class="a" style="left:596px;top:875px;width:67px;height:181px;border-radius:8px 0 0 8px;background:rgba(20,10,12,.8)"></div>
<svg class="a" style="left:0;top:875px" width="663" height="181" viewBox="0 0 663 181"><polyline points="51,48 15,92 51,136" fill="none" stroke="#c8c8c8" stroke-width="3.2"/><polyline points="611,48 647,92 611,136" fill="none" stroke="#fff" stroke-width="3.2"/></svg>
</div>
<svg class="a" style="left:2160px;top:150px" width="80" height="32" viewBox="0 0 80 32"><path d="M9 29.5 Q24 27 32 16 Q38 6.5 38 6.5 Q38 5 39 5 Q40 6.5 46 16 Q54 27 65 29.5 Z" fill="#dedede" stroke="#bdbdbd" stroke-width="1.2"/></svg>

</body></html>
